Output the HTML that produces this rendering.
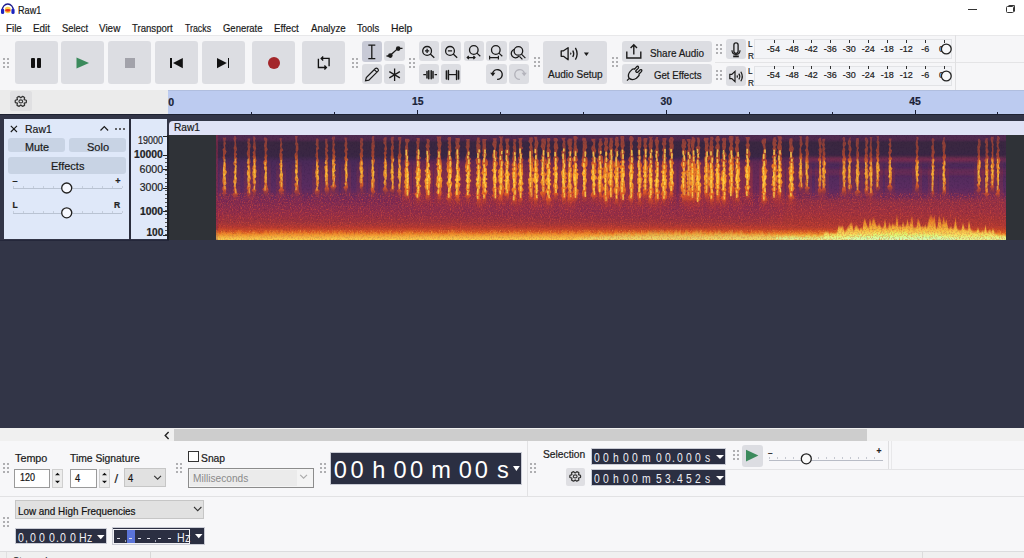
<!DOCTYPE html>
<html><head><meta charset="utf-8">
<style>
*{margin:0;padding:0;box-sizing:border-box}
html,body{width:1024px;height:558px;overflow:hidden;background:#fff}
body{position:relative;font-family:"Liberation Sans",sans-serif;color:#1f1f1f}
.a{position:absolute}
.t{position:absolute;white-space:nowrap;transform-origin:0 0;line-height:1;-webkit-text-stroke:0.2px currentColor}
svg{position:absolute;overflow:visible}
</style></head><body>
<div class="a" style="left:0px;top:0px;width:1024px;height:35px;background:#ffffff;"></div>
<svg style="left:0;top:0" width="16" height="16" viewBox="0 0 16 16">
  <ellipse cx="7.8" cy="10" rx="3" ry="3.3" fill="#ffd24a"/>
  <ellipse cx="7.8" cy="10.3" rx="2.8" ry="1.4" fill="#e8311a"/>
  <path d="M2.2 10.5 A5.6 6.5 0 0 1 13.4 10.5" fill="none" stroke="#1b1a8c" stroke-width="1.3"/>
  <rect x="1" y="8.5" width="3.2" height="5.5" rx="1.5" fill="#1d24c0"/>
  <rect x="11.4" y="8.5" width="3.2" height="5.5" rx="1.5" fill="#1d24c0"/>
</svg>
<div class="t" style="left:17.6px;top:5.98px;font-size:10.4px;transform:scaleX(0.876);color:#1a1a1a;font-weight:normal;">Raw1</div>
<div class="a" style="left:968px;top:9px;width:9px;height:1px;background:#333;"></div>
<div class="a" style="left:1006px;top:6px;width:8px;height:7px;border:1px solid #333;border-radius:1.5px"></div>
<div class="a" style="left:1008px;top:4.5px;width:7px;height:7px;border-top:1px solid #333;border-right:1px solid #333;border-radius:1.5px"></div>
<div class="t" style="left:6px;top:23.08px;font-size:11.2px;transform:scaleX(0.875);color:#1a1a1a;font-weight:normal;">File</div>
<div class="t" style="left:32.7px;top:23.08px;font-size:11.2px;transform:scaleX(0.886);color:#1a1a1a;font-weight:normal;">Edit</div>
<div class="t" style="left:61.7px;top:23.08px;font-size:11.2px;transform:scaleX(0.838);color:#1a1a1a;font-weight:normal;">Select</div>
<div class="t" style="left:99.2px;top:23.08px;font-size:11.2px;transform:scaleX(0.885);color:#1a1a1a;font-weight:normal;">View</div>
<div class="t" style="left:132px;top:23.08px;font-size:11.2px;transform:scaleX(0.857);color:#1a1a1a;font-weight:normal;">Transport</div>
<div class="t" style="left:185.2px;top:23.08px;font-size:11.2px;transform:scaleX(0.786);color:#1a1a1a;font-weight:normal;">Tracks</div>
<div class="t" style="left:222.9px;top:23.08px;font-size:11.2px;transform:scaleX(0.846);color:#1a1a1a;font-weight:normal;">Generate</div>
<div class="t" style="left:274px;top:23.08px;font-size:11.2px;transform:scaleX(0.872);color:#1a1a1a;font-weight:normal;">Effect</div>
<div class="t" style="left:311px;top:23.08px;font-size:11.2px;transform:scaleX(0.871);color:#1a1a1a;font-weight:normal;">Analyze</div>
<div class="t" style="left:357.2px;top:23.08px;font-size:11.2px;transform:scaleX(0.849);color:#1a1a1a;font-weight:normal;">Tools</div>
<div class="t" style="left:390.9px;top:23.08px;font-size:11.2px;transform:scaleX(0.929);color:#1a1a1a;font-weight:normal;">Help</div>
<div class="a" style="left:0px;top:35px;width:1024px;height:56px;background:#f6f6f8;border-top:1px solid #e8e8ea"></div>
<div class="a" style="left:15px;top:41.2px;width:42.5px;height:43.2px;background:#dcdde2;border-radius:3px"></div>
<div class="a" style="left:61px;top:41.2px;width:43.4px;height:43.2px;background:#dcdde2;border-radius:3px"></div>
<div class="a" style="left:108px;top:41.2px;width:43px;height:43.2px;background:#dcdde2;border-radius:3px"></div>
<div class="a" style="left:155px;top:41.2px;width:43px;height:43.2px;background:#dcdde2;border-radius:3px"></div>
<div class="a" style="left:201.7px;top:41.2px;width:43.0px;height:43.2px;background:#dcdde2;border-radius:3px"></div>
<div class="a" style="left:252px;top:41.2px;width:43px;height:43.2px;background:#dcdde2;border-radius:3px"></div>
<div class="a" style="left:302px;top:41.2px;width:43px;height:43.2px;background:#dcdde2;border-radius:3px"></div>
<div class="a" style="left:3px;top:58px;width:1.6px;height:1.6px;background:#a0a0a4;border-radius:50%"></div>
<div class="a" style="left:7px;top:58px;width:1.6px;height:1.6px;background:#a0a0a4;border-radius:50%"></div>
<div class="a" style="left:3px;top:62px;width:1.6px;height:1.6px;background:#a0a0a4;border-radius:50%"></div>
<div class="a" style="left:7px;top:62px;width:1.6px;height:1.6px;background:#a0a0a4;border-radius:50%"></div>
<div class="a" style="left:3px;top:66px;width:1.6px;height:1.6px;background:#a0a0a4;border-radius:50%"></div>
<div class="a" style="left:7px;top:66px;width:1.6px;height:1.6px;background:#a0a0a4;border-radius:50%"></div>
<div class="a" style="left:31px;top:58px;width:4px;height:10px;background:#111;border-radius:1px"></div>
<div class="a" style="left:37px;top:58px;width:4px;height:10px;background:#111;border-radius:1px"></div>
<svg style="left:76px;top:57px" width="14" height="12" viewBox="0 0 14 12"><path d="M0.5 0.5 L13 6 L0.5 11.5Z" fill="#3b8a5c"/></svg>
<div class="a" style="left:125px;top:58px;width:10px;height:10px;background:#a2a2aa;"></div>
<div class="a" style="left:170.4px;top:58px;width:1.3px;height:10.2px;background:#111;"></div>
<svg style="left:172.6px;top:58px" width="12" height="11" viewBox="0 0 12 11"><path d="M0 5.1 L9.8 0 L9.8 10.2Z" fill="#111"/></svg>
<svg style="left:217.4px;top:58px" width="12" height="11" viewBox="0 0 12 11"><path d="M0 0 L9.8 5.1 L0 10.2Z" fill="#111"/></svg>
<div class="a" style="left:228px;top:58px;width:1.3px;height:10.2px;background:#111;"></div>
<svg style="left:267px;top:56px" width="14" height="14" viewBox="0 0 14 14"><circle cx="7" cy="7" r="6" fill="#a3262a"/></svg>
<svg style="left:316px;top:56px" width="16" height="14" viewBox="0 0 16 14"><path d="M2.4 2.8 V11.5 H10.3 M8.4 9.5 L10.4 11.5 L8.4 13.5 M13.1 10.3 V2.4 H5.2 M7.2 0.4 L5.2 2.4 L7.2 4.4" fill="none" stroke="#111" stroke-width="1.35"/></svg>
<div class="a" style="left:352px;top:58px;width:1.6px;height:1.6px;background:#a0a0a4;border-radius:50%"></div>
<div class="a" style="left:356px;top:58px;width:1.6px;height:1.6px;background:#a0a0a4;border-radius:50%"></div>
<div class="a" style="left:352px;top:62px;width:1.6px;height:1.6px;background:#a0a0a4;border-radius:50%"></div>
<div class="a" style="left:356px;top:62px;width:1.6px;height:1.6px;background:#a0a0a4;border-radius:50%"></div>
<div class="a" style="left:352px;top:66px;width:1.6px;height:1.6px;background:#a0a0a4;border-radius:50%"></div>
<div class="a" style="left:356px;top:66px;width:1.6px;height:1.6px;background:#a0a0a4;border-radius:50%"></div>
<div class="a" style="left:361.6px;top:41.2px;width:20.4px;height:20.4px;background:#c8cad6;border-radius:3px"></div>
<div class="a" style="left:384.4px;top:41.2px;width:20.2px;height:20.2px;background:#dcdde2;border-radius:3px"></div>
<div class="a" style="left:361.6px;top:64.2px;width:20.2px;height:20.2px;background:#dcdde2;border-radius:3px"></div>
<div class="a" style="left:384.4px;top:64.2px;width:20.2px;height:20.2px;background:#dcdde2;border-radius:3px"></div>
<div class="a" style="left:409px;top:58px;width:1.6px;height:1.6px;background:#a0a0a4;border-radius:50%"></div>
<div class="a" style="left:413px;top:58px;width:1.6px;height:1.6px;background:#a0a0a4;border-radius:50%"></div>
<div class="a" style="left:409px;top:62px;width:1.6px;height:1.6px;background:#a0a0a4;border-radius:50%"></div>
<div class="a" style="left:413px;top:62px;width:1.6px;height:1.6px;background:#a0a0a4;border-radius:50%"></div>
<div class="a" style="left:409px;top:66px;width:1.6px;height:1.6px;background:#a0a0a4;border-radius:50%"></div>
<div class="a" style="left:413px;top:66px;width:1.6px;height:1.6px;background:#a0a0a4;border-radius:50%"></div>
<div class="a" style="left:418.7px;top:41.2px;width:20.2px;height:20.2px;background:#dcdde2;border-radius:3px"></div>
<div class="a" style="left:441.3px;top:41.2px;width:20.2px;height:20.2px;background:#dcdde2;border-radius:3px"></div>
<div class="a" style="left:463.8px;top:41.2px;width:20.2px;height:20.2px;background:#dcdde2;border-radius:3px"></div>
<div class="a" style="left:486.4px;top:41.2px;width:20.2px;height:20.2px;background:#dcdde2;border-radius:3px"></div>
<div class="a" style="left:509.3px;top:41.2px;width:20.2px;height:20.2px;background:#dcdde2;border-radius:3px"></div>
<div class="a" style="left:418.7px;top:64.2px;width:20.2px;height:20.2px;background:#dcdde2;border-radius:3px"></div>
<div class="a" style="left:441.3px;top:64.2px;width:20.2px;height:20.2px;background:#dcdde2;border-radius:3px"></div>
<div class="a" style="left:486.4px;top:64.2px;width:20.2px;height:20.2px;background:#dcdde2;border-radius:3px"></div>
<div class="a" style="left:509.3px;top:64.2px;width:20.2px;height:20.2px;background:#dcdde2;border-radius:3px"></div>
<div class="a" style="left:534px;top:57px;width:1.6px;height:1.6px;background:#a0a0a4;border-radius:50%"></div>
<div class="a" style="left:538px;top:57px;width:1.6px;height:1.6px;background:#a0a0a4;border-radius:50%"></div>
<div class="a" style="left:534px;top:61px;width:1.6px;height:1.6px;background:#a0a0a4;border-radius:50%"></div>
<div class="a" style="left:538px;top:61px;width:1.6px;height:1.6px;background:#a0a0a4;border-radius:50%"></div>
<div class="a" style="left:534px;top:65px;width:1.6px;height:1.6px;background:#a0a0a4;border-radius:50%"></div>
<div class="a" style="left:538px;top:65px;width:1.6px;height:1.6px;background:#a0a0a4;border-radius:50%"></div>
<div class="a" style="left:543.2px;top:41.2px;width:63.8px;height:43.2px;background:#dcdde2;border-radius:3px"></div>
<div class="a" style="left:612px;top:57px;width:1.6px;height:1.6px;background:#a0a0a4;border-radius:50%"></div>
<div class="a" style="left:616px;top:57px;width:1.6px;height:1.6px;background:#a0a0a4;border-radius:50%"></div>
<div class="a" style="left:612px;top:61px;width:1.6px;height:1.6px;background:#a0a0a4;border-radius:50%"></div>
<div class="a" style="left:616px;top:61px;width:1.6px;height:1.6px;background:#a0a0a4;border-radius:50%"></div>
<div class="a" style="left:612px;top:65px;width:1.6px;height:1.6px;background:#a0a0a4;border-radius:50%"></div>
<div class="a" style="left:616px;top:65px;width:1.6px;height:1.6px;background:#a0a0a4;border-radius:50%"></div>
<div class="a" style="left:621.7px;top:41.2px;width:90px;height:20.4px;background:#dcdde2;border-radius:3px"></div>
<div class="a" style="left:621.7px;top:64.2px;width:90px;height:20.2px;background:#dcdde2;border-radius:3px"></div>
<div class="a" style="left:716px;top:44px;width:1.6px;height:1.6px;background:#a0a0a4;border-radius:50%"></div>
<div class="a" style="left:720px;top:44px;width:1.6px;height:1.6px;background:#a0a0a4;border-radius:50%"></div>
<div class="a" style="left:716px;top:48px;width:1.6px;height:1.6px;background:#a0a0a4;border-radius:50%"></div>
<div class="a" style="left:720px;top:48px;width:1.6px;height:1.6px;background:#a0a0a4;border-radius:50%"></div>
<div class="a" style="left:716px;top:52px;width:1.6px;height:1.6px;background:#a0a0a4;border-radius:50%"></div>
<div class="a" style="left:720px;top:52px;width:1.6px;height:1.6px;background:#a0a0a4;border-radius:50%"></div>
<div class="a" style="left:716px;top:70px;width:1.6px;height:1.6px;background:#a0a0a4;border-radius:50%"></div>
<div class="a" style="left:720px;top:70px;width:1.6px;height:1.6px;background:#a0a0a4;border-radius:50%"></div>
<div class="a" style="left:716px;top:74px;width:1.6px;height:1.6px;background:#a0a0a4;border-radius:50%"></div>
<div class="a" style="left:720px;top:74px;width:1.6px;height:1.6px;background:#a0a0a4;border-radius:50%"></div>
<div class="a" style="left:716px;top:78px;width:1.6px;height:1.6px;background:#a0a0a4;border-radius:50%"></div>
<div class="a" style="left:720px;top:78px;width:1.6px;height:1.6px;background:#a0a0a4;border-radius:50%"></div>
<div class="t" style="left:548.2px;top:68.57px;font-size:10.5px;transform:scaleX(0.956);color:#1a1a1a;font-weight:normal;">Audio Setup</div>
<div class="t" style="left:650.4px;top:47.67px;font-size:10.5px;transform:scaleX(0.944);color:#1a1a1a;font-weight:normal;">Share Audio</div>
<div class="t" style="left:653.7px;top:69.97px;font-size:10.5px;transform:scaleX(0.918);color:#1a1a1a;font-weight:normal;">Get Effects</div>
<div class="a" style="left:725.5px;top:39.3px;width:20.5px;height:20px;background:#dcdde2;border-radius:3px"></div>
<div class="a" style="left:725.5px;top:65.6px;width:20.5px;height:20px;background:#dcdde2;border-radius:3px"></div>
<div class="a" style="left:715px;top:62px;width:309px;height:1px;background:#e4e4e6;"></div>
<div class="a" style="left:955px;top:35px;width:1px;height:56px;background:#e0e0e2;"></div>
<div class="a" style="left:754px;top:39.3px;width:198px;height:20px;background:#f3f4f7;border:1px solid #e2e3e6"></div>
<div class="t" style="left:748px;top:40.29px;font-size:8.6px;transform:scaleX(0.95);color:#222;font-weight:normal;">L</div>
<div class="t" style="left:748px;top:52.49px;font-size:8.6px;transform:scaleX(0.95);color:#222;font-weight:normal;">R</div>
<div class="a" style="left:773.5px;top:39.8px;width:1px;height:3px;background:#333;"></div>
<div class="t" style="left:573.4px;width:400px;text-align:center;top:44.64px;font-size:9px;transform:scaleX(1.0);transform-origin:50% 0;color:#1a1a1a;font-weight:normal;">-54</div>
<div class="a" style="left:792.5px;top:39.8px;width:1px;height:3px;background:#333;"></div>
<div class="t" style="left:592.37px;width:400px;text-align:center;top:44.64px;font-size:9px;transform:scaleX(1.0);transform-origin:50% 0;color:#1a1a1a;font-weight:normal;">-48</div>
<div class="a" style="left:811.4px;top:39.8px;width:1px;height:3px;background:#333;"></div>
<div class="t" style="left:611.34px;width:400px;text-align:center;top:44.64px;font-size:9px;transform:scaleX(1.0);transform-origin:50% 0;color:#1a1a1a;font-weight:normal;">-42</div>
<div class="a" style="left:830.4px;top:39.8px;width:1px;height:3px;background:#333;"></div>
<div class="t" style="left:630.31px;width:400px;text-align:center;top:44.64px;font-size:9px;transform:scaleX(1.0);transform-origin:50% 0;color:#1a1a1a;font-weight:normal;">-36</div>
<div class="a" style="left:849.4px;top:39.8px;width:1px;height:3px;background:#333;"></div>
<div class="t" style="left:649.28px;width:400px;text-align:center;top:44.64px;font-size:9px;transform:scaleX(1.0);transform-origin:50% 0;color:#1a1a1a;font-weight:normal;">-30</div>
<div class="a" style="left:868.4px;top:39.8px;width:1px;height:3px;background:#333;"></div>
<div class="t" style="left:668.25px;width:400px;text-align:center;top:44.64px;font-size:9px;transform:scaleX(1.0);transform-origin:50% 0;color:#1a1a1a;font-weight:normal;">-24</div>
<div class="a" style="left:887.3px;top:39.8px;width:1px;height:3px;background:#333;"></div>
<div class="t" style="left:687.2199999999999px;width:400px;text-align:center;top:44.64px;font-size:9px;transform:scaleX(1.0);transform-origin:50% 0;color:#1a1a1a;font-weight:normal;">-18</div>
<div class="a" style="left:906.3px;top:39.8px;width:1px;height:3px;background:#333;"></div>
<div class="t" style="left:706.1899999999999px;width:400px;text-align:center;top:44.64px;font-size:9px;transform:scaleX(1.0);transform-origin:50% 0;color:#1a1a1a;font-weight:normal;">-12</div>
<div class="a" style="left:925.3px;top:39.8px;width:1px;height:3px;background:#333;"></div>
<div class="t" style="left:725.16px;width:400px;text-align:center;top:44.64px;font-size:9px;transform:scaleX(1.0);transform-origin:50% 0;color:#1a1a1a;font-weight:normal;">-6</div>
<div class="a" style="left:944.2px;top:39.8px;width:1px;height:3px;background:#333;"></div>
<div class="t" style="left:741.53px;width:400px;text-align:center;top:44.64px;font-size:9px;transform:scaleX(1.0);transform-origin:50% 0;color:#1a1a1a;font-weight:normal;">0</div>
<svg style="left:939px;top:42.3px" width="14" height="14" viewBox="0 0 14 14"><circle cx="7.3" cy="7" r="4.9" fill="#f6f7f9" stroke="#222" stroke-width="1.3"/></svg>
<div class="a" style="left:754px;top:65.6px;width:198px;height:20px;background:#f3f4f7;border:1px solid #e2e3e6"></div>
<div class="t" style="left:748px;top:66.59px;font-size:8.6px;transform:scaleX(0.95);color:#222;font-weight:normal;">L</div>
<div class="t" style="left:748px;top:78.79px;font-size:8.6px;transform:scaleX(0.95);color:#222;font-weight:normal;">R</div>
<div class="a" style="left:773.5px;top:66.1px;width:1px;height:3px;background:#333;"></div>
<div class="t" style="left:573.4px;width:400px;text-align:center;top:70.94px;font-size:9px;transform:scaleX(1.0);transform-origin:50% 0;color:#1a1a1a;font-weight:normal;">-54</div>
<div class="a" style="left:792.5px;top:66.1px;width:1px;height:3px;background:#333;"></div>
<div class="t" style="left:592.37px;width:400px;text-align:center;top:70.94px;font-size:9px;transform:scaleX(1.0);transform-origin:50% 0;color:#1a1a1a;font-weight:normal;">-48</div>
<div class="a" style="left:811.4px;top:66.1px;width:1px;height:3px;background:#333;"></div>
<div class="t" style="left:611.34px;width:400px;text-align:center;top:70.94px;font-size:9px;transform:scaleX(1.0);transform-origin:50% 0;color:#1a1a1a;font-weight:normal;">-42</div>
<div class="a" style="left:830.4px;top:66.1px;width:1px;height:3px;background:#333;"></div>
<div class="t" style="left:630.31px;width:400px;text-align:center;top:70.94px;font-size:9px;transform:scaleX(1.0);transform-origin:50% 0;color:#1a1a1a;font-weight:normal;">-36</div>
<div class="a" style="left:849.4px;top:66.1px;width:1px;height:3px;background:#333;"></div>
<div class="t" style="left:649.28px;width:400px;text-align:center;top:70.94px;font-size:9px;transform:scaleX(1.0);transform-origin:50% 0;color:#1a1a1a;font-weight:normal;">-30</div>
<div class="a" style="left:868.4px;top:66.1px;width:1px;height:3px;background:#333;"></div>
<div class="t" style="left:668.25px;width:400px;text-align:center;top:70.94px;font-size:9px;transform:scaleX(1.0);transform-origin:50% 0;color:#1a1a1a;font-weight:normal;">-24</div>
<div class="a" style="left:887.3px;top:66.1px;width:1px;height:3px;background:#333;"></div>
<div class="t" style="left:687.2199999999999px;width:400px;text-align:center;top:70.94px;font-size:9px;transform:scaleX(1.0);transform-origin:50% 0;color:#1a1a1a;font-weight:normal;">-18</div>
<div class="a" style="left:906.3px;top:66.1px;width:1px;height:3px;background:#333;"></div>
<div class="t" style="left:706.1899999999999px;width:400px;text-align:center;top:70.94px;font-size:9px;transform:scaleX(1.0);transform-origin:50% 0;color:#1a1a1a;font-weight:normal;">-12</div>
<div class="a" style="left:925.3px;top:66.1px;width:1px;height:3px;background:#333;"></div>
<div class="t" style="left:725.16px;width:400px;text-align:center;top:70.94px;font-size:9px;transform:scaleX(1.0);transform-origin:50% 0;color:#1a1a1a;font-weight:normal;">-6</div>
<div class="a" style="left:944.2px;top:66.1px;width:1px;height:3px;background:#333;"></div>
<div class="t" style="left:741.53px;width:400px;text-align:center;top:70.94px;font-size:9px;transform:scaleX(1.0);transform-origin:50% 0;color:#1a1a1a;font-weight:normal;">0</div>
<svg style="left:939px;top:68.6px" width="14" height="14" viewBox="0 0 14 14"><circle cx="7.3" cy="7" r="4.9" fill="#f6f7f9" stroke="#222" stroke-width="1.3"/></svg>
<div class="a" style="left:0px;top:90px;width:168px;height:23.6px;background:#ebebeb;"></div>
<div class="a" style="left:9.8px;top:91px;width:22.2px;height:20.4px;background:#e0e0e2;border-radius:2px"></div>
<div class="a" style="left:168px;top:90px;width:856px;height:23.8px;background:#bccbf0;border-top:1px solid #b0bedf"></div>
<div class="t" style="left:168.3px;top:96.75px;font-size:10.6px;transform:scaleX(1);color:#1a1f36;font-weight:bold;">0</div>
<div class="t" style="left:411.9px;top:96.68px;font-size:10.4px;transform:scaleX(1);color:#1a1f36;font-weight:bold;">15</div>
<div class="a" style="left:417.2px;top:110px;width:1px;height:4px;background:#1a1f36;"></div>
<div class="t" style="left:660.6px;top:96.68px;font-size:10.4px;transform:scaleX(1);color:#1a1f36;font-weight:bold;">30</div>
<div class="a" style="left:665.9px;top:110px;width:1px;height:4px;background:#1a1f36;"></div>
<div class="t" style="left:909.3px;top:96.68px;font-size:10.4px;transform:scaleX(1);color:#1a1f36;font-weight:bold;">45</div>
<div class="a" style="left:914.6px;top:110px;width:1px;height:4px;background:#1a1f36;"></div>
<div class="a" style="left:251.2px;top:111.8px;width:1px;height:2px;background:#1a1f36;"></div>
<div class="a" style="left:334.1px;top:111.8px;width:1px;height:2px;background:#1a1f36;"></div>
<div class="a" style="left:499.9px;top:111.8px;width:1px;height:2px;background:#1a1f36;"></div>
<div class="a" style="left:582.8px;top:111.8px;width:1px;height:2px;background:#1a1f36;"></div>
<div class="a" style="left:748.6px;top:111.8px;width:1px;height:2px;background:#1a1f36;"></div>
<div class="a" style="left:831.5px;top:111.8px;width:1px;height:2px;background:#1a1f36;"></div>
<div class="a" style="left:997.3px;top:111.8px;width:1px;height:2px;background:#1a1f36;"></div>
<div class="a" style="left:1080.2px;top:111.8px;width:1px;height:2px;background:#1a1f36;"></div>
<div class="a" style="left:0px;top:113.6px;width:1024px;height:314.4px;background:#323547;"></div>
<div class="a" style="left:0px;top:113.6px;width:1024px;height:1.6px;background:#1e2232;"></div>
<div class="a" style="left:4px;top:119.3px;width:125px;height:120.2px;background:#dfe8f9;"></div>
<div class="a" style="left:0px;top:239.5px;width:169px;height:1.5px;background:#24273a;"></div>
<div class="a" style="left:129px;top:119.3px;width:2px;height:121px;background:#2a2d3c;"></div>
<div class="a" style="left:131px;top:119.3px;width:36px;height:120.2px;background:#dfe8f9;"></div>
<div class="t" style="right:860.8px;top:135.58px;font-size:10.4px;transform:scaleX(0.864);transform-origin:100% 0;color:#1e1e24;font-weight:normal;">19000</div>
<div class="t" style="right:860.8px;top:149.78px;font-size:10.4px;transform:scaleX(1.003);transform-origin:100% 0;color:#1e1e24;font-weight:bold;">10000</div>
<div class="t" style="right:860.8px;top:164.58px;font-size:10.4px;transform:scaleX(1.02);transform-origin:100% 0;color:#1e1e24;font-weight:normal;">6000</div>
<div class="t" style="right:860.8px;top:182.98px;font-size:10.4px;transform:scaleX(1.011);transform-origin:100% 0;color:#1e1e24;font-weight:normal;">3000</div>
<div class="t" style="right:860.8px;top:207.08px;font-size:10.4px;transform:scaleX(1.003);transform-origin:100% 0;color:#1e1e24;font-weight:bold;">1000</div>
<div class="t" style="right:860.8px;top:227.58px;font-size:10.4px;transform:scaleX(0.974);transform-origin:100% 0;color:#1e1e24;font-weight:bold;">100</div>
<div class="t" style="left:24.6px;top:124.47px;font-size:11.3px;transform:scaleX(0.928);color:#1a1a1a;font-weight:normal;">Raw1</div>
<div class="a" style="left:8px;top:138px;width:57px;height:14px;background:#c8d3e4;border-radius:3px"></div>
<div class="a" style="left:69px;top:138px;width:57px;height:14px;background:#c8d3e4;border-radius:3px"></div>
<div class="a" style="left:8px;top:156.5px;width:118px;height:17px;background:#c8d3e4;border-radius:3px"></div>
<div class="t" style="left:24.6px;top:141.62px;font-size:10.9px;transform:scaleX(0.995);color:#1a1a1a;font-weight:normal;">Mute</div>
<div class="t" style="left:86.5px;top:141.62px;font-size:10.9px;transform:scaleX(1.013);color:#1a1a1a;font-weight:normal;">Solo</div>
<div class="t" style="left:50.6px;top:160.8px;font-size:11.1px;transform:scaleX(0.99);color:#1a1a1a;font-weight:normal;">Effects</div>
<div class="a" style="left:169.4px;top:120.9px;width:854.6px;height:13.7px;background:#dfe2f6;border-top-left-radius:4px"></div>
<div class="t" style="left:173.5px;top:122.92px;font-size:10px;transform:scaleX(1.017);color:#1a1a1a;font-weight:normal;">Raw1</div>
<div class="a" style="left:169px;top:134.6px;width:855px;height:105px;background:#2f3237;"></div>
<svg style="left:216px;top:134.6px;overflow:hidden" width="790" height="105" viewBox="0 0 790 105"><defs>
<linearGradient id="bg" x1="0" y1="0" x2="0" y2="1">
<stop offset="0" stop-color="#4e2a50"/>
<stop offset="0.04" stop-color="#52294e"/>
<stop offset="0.07" stop-color="#3a2740"/>
<stop offset="0.2" stop-color="#3a2744"/>
<stop offset="0.25" stop-color="#4a2a58"/>
<stop offset="0.5" stop-color="#5a2c60"/>
<stop offset="0.62" stop-color="#762a58"/>
<stop offset="0.74" stop-color="#922c48"/>
<stop offset="0.82" stop-color="#a03238"/>
<stop offset="0.88" stop-color="#b83c30"/>
<stop offset="0.93" stop-color="#d85420"/>
<stop offset="0.975" stop-color="#f08a24"/>
<stop offset="1" stop-color="#ffc030"/>
</linearGradient>
<linearGradient id="st" x1="0" y1="0" x2="0" y2="1">
<stop offset="0" stop-color="#c05038" stop-opacity="0.6"/>
<stop offset="0.3" stop-color="#d05028" stop-opacity="0.75"/>
<stop offset="0.42" stop-color="#f07820" stop-opacity="0.95"/>
<stop offset="0.6" stop-color="#ffa828" stop-opacity="1"/>
<stop offset="0.85" stop-color="#e86020" stop-opacity="0.85"/>
<stop offset="1" stop-color="#a03030" stop-opacity="0"/>
</linearGradient>
<linearGradient id="gl" x1="0" y1="0" x2="0" y2="1">
<stop offset="0" stop-color="#c03830" stop-opacity="0"/>
<stop offset="0.3" stop-color="#c03830" stop-opacity="0.5"/>
<stop offset="0.8" stop-color="#c03830" stop-opacity="0.45"/>
<stop offset="1" stop-color="#c03830" stop-opacity="0"/>
</linearGradient>
<linearGradient id="hl" x1="0" y1="0" x2="0" y2="1">
<stop offset="0" stop-color="#ffe060" stop-opacity="0"/>
<stop offset="0.5" stop-color="#f0f070" stop-opacity="0.7"/>
<stop offset="1" stop-color="#d8ffb0" stop-opacity="0.95"/>
</linearGradient>
<filter id="nz" x="0" y="0" width="100%" height="100%">
<feTurbulence type="fractalNoise" baseFrequency="0.6 0.5" numOctaves="2" seed="3" result="t"/>
<feColorMatrix in="t" type="matrix" values="0 0 0 0 0  0 0 0 0 0  0 0 0 0 0  0 0 0 -2.2 1.1" result="n"/>
<feComposite in="SourceGraphic" in2="n" operator="in"/>
</filter>
<filter id="bl" x="-30%" y="-50%" width="160%" height="200%"><feGaussianBlur stdDeviation="10 1.5"/></filter>
<filter id="bl2" x="-10%" y="-50%" width="120%" height="200%"><feGaussianBlur stdDeviation="0.7 0.9"/></filter>
<linearGradient id="fl" x1="0" y1="0" x2="0" y2="1">
<stop offset="0" stop-color="#f07818" stop-opacity="0"/>
<stop offset="0.25" stop-color="#f89020" stop-opacity="0.9"/>
<stop offset="0.6" stop-color="#ffd040"/>
<stop offset="1" stop-color="#f0ff90"/>
</linearGradient>
<linearGradient id="fl2" x1="0" y1="0" x2="0" y2="1">
<stop offset="0" stop-color="#ffd040" stop-opacity="0"/>
<stop offset="0.4" stop-color="#e0ff60" stop-opacity="0.85"/>
<stop offset="1" stop-color="#c8ffd8"/>
</linearGradient>
</defs><rect x="0" y="0" width="790" height="105" fill="url(#bg)"/><rect x="0" y="0" width="2" height="105" fill="#8a2c48" opacity="0.6"/><g filter="url(#bl)"><rect x="190" y="25" width="380" height="45" fill="#8a2a48" opacity="0.35"/><rect x="560" y="64" width="240" height="28" fill="#b03a30" opacity="0.38"/><rect x="575" y="22" width="220" height="5" fill="#8a2c50" opacity="0.7"/><rect x="575" y="34" width="220" height="6" fill="#7a2a50" opacity="0.5"/><rect x="0" y="68" width="560" height="22" fill="#8a2c50" opacity="0.25"/></g><rect x="3.4" y="24" width="10" height="46.5" fill="url(#gl)" opacity="0.35"/><path d="M6.7 2.4 L7.3 4.4 L7.6 6.4 L7.4 8.4 L7.4 10.4 L8.0 12.4 L6.5 14.4 L7.1 16.4 L7.1 18.4 L7.1 20.4 L6.6 22.4 L7.2 24.4 L7.6 26.4 L7.5 28.4 L7.2 30.4 L7.2 32.4 L6.9 34.4 L6.9 36.4 L6.8 38.4 L7.0 40.4 L6.9 42.4 L6.6 44.4 L6.5 46.4 L6.8 48.4 L7.4 50.4 L6.5 52.4 L6.4 54.4 L7.3 56.4 L6.1 58.4 L7.5 60.4 L7.5 62.4 L7.9 64.4 L8.4 64.4 L9.8 62.4 L9.0 60.4 L10.2 58.4 L9.8 56.4 L10.2 54.4 L10.2 52.4 L8.9 50.4 L10.7 48.4 L10.1 46.4 L10.0 44.4 L9.1 42.4 L9.3 40.4 L10.4 38.4 L10.9 36.4 L9.5 34.4 L9.9 32.4 L9.9 30.4 L10.0 28.4 L9.1 26.4 L9.1 24.4 L9.3 22.4 L8.7 20.4 L9.9 18.4 L10.6 16.4 L9.4 14.4 L9.5 12.4 L9.0 10.4 L10.0 8.4 L9.3 6.4 L9.7 4.4 L10.0 2.4 Z" fill="url(#st)" opacity="0.9"/><path d="M8.9 24.4 v1.7 M8.3 27.5 v3.2 M7.8 32.2 v3.7 M8.3 38.5 v1.8 M9.2 41.9 v2.3 M9.0 47.2 v2.4 M9.0 51.1 v2.7" stroke="#ffd850" stroke-width="1.3" stroke-linecap="round" opacity="0.55"/><rect x="14.2" y="24" width="10" height="49.9" fill="url(#gl)" opacity="0.35"/><path d="M18.1 1.3 L17.5 3.3 L17.8 5.3 L18.5 7.3 L18.4 9.3 L18.1 11.3 L17.5 13.3 L18.3 15.3 L18.0 17.3 L17.9 19.3 L18.0 21.3 L18.0 23.3 L18.7 25.3 L17.5 27.3 L17.5 29.3 L18.9 31.3 L18.4 33.3 L18.5 35.3 L17.5 37.3 L18.5 39.3 L18.1 41.3 L18.1 43.3 L17.5 45.3 L17.0 47.3 L18.2 49.3 L17.5 51.3 L18.1 53.3 L17.4 55.3 L18.4 57.3 L16.3 59.3 L17.3 61.3 L17.8 63.3 L19.1 65.3 L19.0 67.3 L20.3 67.3 L20.1 65.3 L19.6 63.3 L21.3 61.3 L22.4 59.3 L20.8 57.3 L20.3 55.3 L20.0 53.3 L20.0 51.3 L19.7 49.3 L20.8 47.3 L20.5 45.3 L21.0 43.3 L19.8 41.3 L20.4 39.3 L20.5 37.3 L20.6 35.3 L20.4 33.3 L20.5 31.3 L20.1 29.3 L21.1 27.3 L20.6 25.3 L21.3 23.3 L19.8 21.3 L21.2 19.3 L19.7 17.3 L20.8 15.3 L20.9 13.3 L20.2 11.3 L20.2 9.3 L20.0 7.3 L19.8 5.3 L20.5 3.3 L19.8 1.3 Z" fill="url(#st)" opacity="0.9"/><path d="M19.2 24.1 v3.4 M20.0 30.3 v2.5 M19.6 34.0 v3.1 M19.5 40.4 v3.7 M19.0 47.0 v4.2 M19.8 54.0 v4.2" stroke="#ffd850" stroke-width="1.3" stroke-linecap="round" opacity="0.55"/><rect x="27.8" y="24" width="10" height="48.9" fill="url(#gl)" opacity="0.35"/><path d="M31.6 3.4 L31.8 5.4 L31.1 7.4 L31.9 9.4 L31.4 11.4 L32.0 13.4 L31.5 15.4 L30.8 17.4 L30.9 19.4 L31.5 21.4 L32.0 23.4 L31.6 25.4 L30.7 27.4 L31.8 29.4 L30.9 31.4 L32.3 33.4 L31.2 35.4 L30.8 37.4 L30.9 39.4 L31.8 41.4 L31.3 43.4 L31.7 45.4 L31.3 47.4 L31.8 49.4 L31.2 51.4 L30.7 53.4 L31.8 55.4 L30.7 57.4 L31.2 59.4 L31.1 61.4 L31.8 63.4 L31.7 65.4 L33.1 65.4 L34.7 63.4 L34.1 61.4 L34.7 59.4 L34.4 57.4 L33.7 55.4 L34.5 53.4 L34.8 51.4 L34.5 49.4 L33.6 47.4 L34.1 45.4 L35.0 43.4 L34.4 41.4 L34.1 39.4 L34.5 37.4 L34.3 35.4 L34.2 33.4 L34.1 31.4 L33.4 29.4 L34.4 27.4 L34.3 25.4 L34.0 23.4 L34.1 21.4 L33.8 19.4 L33.9 17.4 L34.0 15.4 L34.1 13.4 L34.6 11.4 L34.6 9.4 L33.7 7.4 L34.0 5.4 L34.2 3.4 Z" fill="url(#st)" opacity="0.9"/><path d="M32.1 24.1 v4.1 M32.5 31.0 v3.2 M32.2 37.2 v1.6 M33.3 40.9 v1.6 M32.1 44.1 v1.9 M33.0 48.6 v2.8 M33.5 54.0 v3.9" stroke="#ffd850" stroke-width="1.3" stroke-linecap="round" opacity="0.55"/><rect x="33.3" y="24" width="10" height="45.8" fill="url(#gl)" opacity="0.35"/><path d="M37.0 1.6 L37.3 3.6 L37.2 5.6 L37.5 7.6 L37.2 9.6 L36.7 11.6 L37.2 13.6 L38.0 15.6 L36.5 17.6 L37.3 19.6 L36.5 21.6 L37.2 23.6 L37.0 25.6 L37.1 27.6 L37.5 29.6 L36.7 31.6 L36.4 33.6 L36.9 35.6 L36.4 37.6 L36.4 39.6 L36.8 41.6 L36.7 43.6 L37.1 45.6 L36.6 47.6 L37.8 49.6 L37.8 51.6 L37.2 53.6 L35.4 55.6 L37.2 57.6 L37.1 59.6 L37.8 61.6 L38.3 63.6 L39.2 63.6 L39.7 61.6 L40.1 59.6 L39.4 57.6 L40.5 55.6 L39.1 53.6 L39.4 51.6 L39.4 49.6 L40.0 47.6 L39.6 45.6 L39.0 43.6 L40.5 41.6 L39.8 39.6 L40.3 37.6 L40.6 35.6 L39.6 33.6 L40.2 31.6 L39.5 29.6 L39.8 27.6 L40.5 25.6 L40.1 23.6 L39.8 21.6 L39.6 19.6 L39.4 17.6 L39.5 15.6 L40.2 13.6 L39.7 11.6 L39.6 9.6 L39.5 7.6 L38.9 5.6 L39.7 3.6 L38.7 1.6 Z" fill="url(#st)" opacity="0.9"/><path d="M38.3 24.3 v2.2 M38.5 28.2 v3.7 M38.4 34.2 v4.0 M38.9 40.0 v2.6 M38.9 45.9 v2.1 M38.4 51.5 v3.1" stroke="#ffd850" stroke-width="1.3" stroke-linecap="round" opacity="0.55"/><rect x="44.7" y="24" width="10" height="46.0" fill="url(#gl)" opacity="0.35"/><path d="M47.9 2.6 L48.0 4.6 L48.9 6.6 L48.4 8.6 L47.9 10.6 L48.4 12.6 L48.4 14.6 L48.7 16.6 L48.8 18.6 L48.6 20.6 L48.2 22.6 L48.8 24.6 L47.5 26.6 L47.5 28.6 L48.4 30.6 L47.9 32.6 L48.6 34.6 L49.1 36.6 L48.8 38.6 L48.4 40.6 L48.2 42.6 L48.4 44.6 L48.0 46.6 L48.8 48.6 L48.2 50.6 L48.0 52.6 L46.4 54.6 L47.7 56.6 L47.5 58.6 L49.2 60.6 L49.7 62.6 L50.7 62.6 L51.0 60.6 L51.5 58.6 L52.3 56.6 L52.4 54.6 L51.6 52.6 L51.2 50.6 L50.8 48.6 L50.7 46.6 L50.8 44.6 L51.0 42.6 L50.4 40.6 L50.6 38.6 L50.8 36.6 L51.0 34.6 L51.1 32.6 L50.4 30.6 L50.9 28.6 L51.2 26.6 L50.8 24.6 L50.8 22.6 L51.6 20.6 L50.4 18.6 L50.6 16.6 L51.8 14.6 L50.9 12.6 L50.7 10.6 L51.0 8.6 L51.1 6.6 L51.4 4.6 L50.5 2.6 Z" fill="url(#st)" opacity="0.9"/><path d="M49.3 27.6 v1.9 M49.1 32.3 v2.3 M50.2 37.6 v2.8 M50.0 41.7 v2.7 M50.0 45.5 v2.1 M49.1 50.8 v4.4" stroke="#ffd850" stroke-width="1.3" stroke-linecap="round" opacity="0.55"/><rect x="60.1" y="24" width="10" height="46.0" fill="url(#gl)" opacity="0.35"/><path d="M63.4 3.3 L64.0 5.3 L64.5 7.3 L64.0 9.3 L64.0 11.3 L64.6 13.3 L63.8 15.3 L63.9 17.3 L63.4 19.3 L63.4 21.3 L63.8 23.3 L63.9 25.3 L64.5 27.3 L63.0 29.3 L64.0 31.3 L63.6 33.3 L64.2 35.3 L64.7 37.3 L63.6 39.3 L63.4 41.3 L64.0 43.3 L64.2 45.3 L63.1 47.3 L63.5 49.3 L63.7 51.3 L64.3 53.3 L62.4 55.3 L63.2 57.3 L64.1 59.3 L64.4 61.3 L64.1 63.3 L65.1 63.3 L65.5 61.3 L66.6 59.3 L67.5 57.3 L68.2 55.3 L66.7 53.3 L67.1 51.3 L67.2 49.3 L66.6 47.3 L66.9 45.3 L66.4 43.3 L67.0 41.3 L67.0 39.3 L66.3 37.3 L66.1 35.3 L66.0 33.3 L66.6 31.3 L66.5 29.3 L66.1 27.3 L66.5 25.3 L66.4 23.3 L66.4 21.3 L66.7 19.3 L65.4 17.3 L67.3 15.3 L66.3 13.3 L65.6 11.3 L66.4 9.3 L65.9 7.3 L65.4 5.3 L66.2 3.3 Z" fill="url(#st)" opacity="0.9"/><path d="M65.3 25.4 v3.4 M65.4 30.4 v4.3 M65.2 36.6 v3.5 M65.9 42.4 v2.7 M65.5 47.7 v3.6" stroke="#ffd850" stroke-width="1.3" stroke-linecap="round" opacity="0.55"/><rect x="75.6" y="24" width="10" height="46.9" fill="url(#gl)" opacity="0.35"/><path d="M78.9 1.1 L79.1 3.1 L79.6 5.1 L79.6 7.1 L79.0 9.1 L79.9 11.1 L79.8 13.1 L79.6 15.1 L80.0 17.1 L78.7 19.1 L78.6 21.1 L79.0 23.1 L79.4 25.1 L80.2 27.1 L79.4 29.1 L79.0 31.1 L79.7 33.1 L79.0 35.1 L78.8 37.1 L79.6 39.1 L79.5 41.1 L78.8 43.1 L79.0 45.1 L80.3 47.1 L78.3 49.1 L78.7 51.1 L79.8 53.1 L78.8 55.1 L78.1 57.1 L79.6 59.1 L79.2 61.1 L80.2 63.1 L81.2 63.1 L82.2 61.1 L82.6 59.1 L83.6 57.1 L82.4 55.1 L82.4 53.1 L82.4 51.1 L82.1 49.1 L81.9 47.1 L82.7 45.1 L82.1 43.1 L81.1 41.1 L81.1 39.1 L82.0 37.1 L81.8 35.1 L81.8 33.1 L81.9 31.1 L81.9 29.1 L81.9 27.1 L82.1 25.1 L81.6 23.1 L81.9 21.1 L81.6 19.1 L81.4 17.1 L82.3 15.1 L82.4 13.1 L82.3 11.1 L82.3 9.1 L81.1 7.1 L81.3 5.1 L81.2 3.1 L81.8 1.1 Z" fill="url(#st)" opacity="0.9"/><path d="M79.9 25.8 v2.1 M80.5 30.3 v1.9 M80.2 34.8 v2.9 M81.0 40.1 v2.8 M81.3 45.2 v4.5 M80.0 52.5 v2.2" stroke="#ffd850" stroke-width="1.3" stroke-linecap="round" opacity="0.55"/><rect x="96.2" y="24" width="10" height="47.0" fill="url(#gl)" opacity="0.35"/><path d="M99.9 3.4 L99.9 5.4 L100.0 7.4 L99.4 9.4 L100.8 11.4 L99.9 13.4 L100.1 15.4 L100.2 17.4 L99.5 19.4 L99.5 21.4 L100.5 23.4 L99.9 25.4 L100.0 27.4 L100.0 29.4 L99.9 31.4 L100.0 33.4 L99.6 35.4 L99.2 37.4 L99.7 39.4 L99.3 41.4 L100.2 43.4 L100.1 45.4 L100.0 47.4 L99.8 49.4 L100.7 51.4 L99.9 53.4 L98.7 55.4 L98.7 57.4 L98.9 59.4 L100.5 61.4 L100.5 63.4 L101.5 63.4 L102.2 61.4 L102.7 59.4 L103.3 57.4 L103.6 55.4 L101.6 53.4 L102.4 51.4 L102.3 49.4 L103.3 47.4 L102.4 45.4 L103.2 43.4 L102.8 41.4 L102.2 39.4 L102.6 37.4 L103.0 35.4 L101.7 33.4 L103.2 31.4 L102.0 29.4 L102.4 27.4 L102.7 25.4 L102.2 23.4 L102.0 21.4 L102.1 19.4 L102.1 17.4 L101.5 15.4 L103.2 13.4 L102.6 11.4 L102.4 9.4 L102.6 7.4 L102.7 5.4 L102.0 3.4 Z" fill="url(#st)" opacity="0.9"/><path d="M100.9 26.9 v3.6 M101.6 31.8 v2.6 M101.5 36.3 v1.9 M101.9 40.6 v4.3 M101.7 48.1 v2.8 M101.0 52.7 v2.5" stroke="#ffd850" stroke-width="1.3" stroke-linecap="round" opacity="0.55"/><rect x="105.5" y="24" width="10" height="44.0" fill="url(#gl)" opacity="0.35"/><path d="M109.3 3.7 L109.3 5.7 L109.1 7.7 L109.5 9.7 L109.6 11.7 L108.9 13.7 L109.4 15.7 L109.1 17.7 L109.3 19.7 L109.7 21.7 L109.3 23.7 L109.7 25.7 L108.4 27.7 L109.9 29.7 L108.2 31.7 L108.6 33.7 L109.0 35.7 L109.2 37.7 L108.8 39.7 L108.7 41.7 L109.8 43.7 L108.9 45.7 L109.3 47.7 L109.3 49.7 L109.6 51.7 L108.5 53.7 L108.7 55.7 L109.3 57.7 L109.6 59.7 L110.3 61.7 L111.3 61.7 L111.5 59.7 L112.7 57.7 L113.0 55.7 L113.2 53.7 L112.1 51.7 L112.5 49.7 L112.1 47.7 L112.1 45.7 L112.1 43.7 L112.1 41.7 L112.2 39.7 L111.3 37.7 L112.3 35.7 L111.7 33.7 L111.9 31.7 L111.6 29.7 L111.8 27.7 L111.4 25.7 L112.3 23.7 L112.2 21.7 L111.8 19.7 L111.0 17.7 L112.4 15.7 L111.4 13.7 L112.1 11.7 L112.1 9.7 L111.3 7.7 L111.4 5.7 L111.4 3.7 Z" fill="url(#st)" opacity="0.9"/><path d="M109.9 25.7 v2.8 M110.3 31.3 v4.5 M110.4 37.2 v2.1 M109.8 41.0 v4.4 M110.7 47.2 v1.8" stroke="#ffd850" stroke-width="1.3" stroke-linecap="round" opacity="0.55"/><rect x="112.7" y="24" width="10" height="42.5" fill="url(#gl)" opacity="0.35"/><path d="M116.6 1.5 L115.6 3.5 L116.6 5.5 L116.5 7.5 L116.4 9.5 L116.5 11.5 L116.4 13.5 L116.0 15.5 L116.8 17.5 L116.3 19.5 L116.5 21.5 L116.6 23.5 L115.8 25.5 L116.2 27.5 L116.1 29.5 L116.5 31.5 L116.1 33.5 L115.9 35.5 L116.2 37.5 L116.3 39.5 L116.2 41.5 L115.9 43.5 L116.6 45.5 L117.0 47.5 L116.5 49.5 L114.3 51.5 L115.5 53.5 L115.5 55.5 L116.8 57.5 L116.5 59.5 L118.0 59.5 L119.3 57.5 L118.9 55.5 L119.2 53.5 L120.6 51.5 L119.2 49.5 L119.1 47.5 L118.5 45.5 L118.8 43.5 L119.6 41.5 L118.9 39.5 L118.2 37.5 L119.8 35.5 L118.8 33.5 L118.9 31.5 L119.9 29.5 L118.3 27.5 L119.6 25.5 L118.9 23.5 L119.7 21.5 L118.6 19.5 L119.3 17.5 L119.0 15.5 L118.3 13.5 L118.3 11.5 L119.2 9.5 L118.3 7.5 L118.2 5.5 L118.9 3.5 L118.9 1.5 Z" fill="url(#st)" opacity="0.9"/><path d="M117.1 25.1 v3.6 M118.4 30.9 v2.9 M117.4 36.3 v4.1 M118.4 43.3 v2.8 M117.2 47.3 v4.0" stroke="#ffd850" stroke-width="1.3" stroke-linecap="round" opacity="0.55"/><rect x="125.1" y="24" width="10" height="43.3" fill="url(#gl)" opacity="0.35"/><path d="M128.4 2.6 L128.7 4.6 L129.1 6.6 L128.5 8.6 L128.3 10.6 L129.0 12.6 L128.7 14.6 L128.2 16.6 L129.2 18.6 L129.2 20.6 L128.3 22.6 L128.5 24.6 L129.2 26.6 L128.9 28.6 L128.5 30.6 L128.8 32.6 L128.3 34.6 L129.3 36.6 L129.4 38.6 L128.9 40.6 L129.3 42.6 L128.9 44.6 L129.4 46.6 L128.2 48.6 L129.2 50.6 L127.4 52.6 L128.4 54.6 L129.1 56.6 L129.9 58.6 L129.6 60.6 L130.6 60.6 L131.1 58.6 L130.9 56.6 L131.1 54.6 L132.0 52.6 L131.7 50.6 L131.4 48.6 L131.1 46.6 L130.6 44.6 L131.6 42.6 L131.8 40.6 L131.7 38.6 L131.3 36.6 L131.4 34.6 L131.1 32.6 L131.3 30.6 L131.1 28.6 L131.2 26.6 L132.3 24.6 L130.9 22.6 L131.1 20.6 L131.4 18.6 L131.0 16.6 L132.1 14.6 L131.1 12.6 L131.1 10.6 L131.4 8.6 L131.1 6.6 L130.7 4.6 L131.5 2.6 Z" fill="url(#st)" opacity="0.9"/><path d="M130.6 26.6 v3.8 M130.0 32.4 v2.5 M130.4 35.9 v2.7 M130.4 42.0 v3.9 M129.8 48.4 v1.6" stroke="#ffd850" stroke-width="1.3" stroke-linecap="round" opacity="0.55"/><rect x="140.5" y="24" width="10" height="42.9" fill="url(#gl)" opacity="0.35"/><path d="M144.4 3.0 L144.3 5.0 L143.8 7.0 L144.4 9.0 L144.1 11.0 L143.9 13.0 L144.6 15.0 L144.5 17.0 L143.6 19.0 L143.9 21.0 L144.1 23.0 L144.5 25.0 L143.7 27.0 L143.5 29.0 L143.8 31.0 L143.2 33.0 L143.7 35.0 L144.1 37.0 L144.8 39.0 L143.9 41.0 L143.6 43.0 L143.5 45.0 L143.4 47.0 L144.4 49.0 L143.8 51.0 L143.8 53.0 L144.9 55.0 L144.0 57.0 L145.0 59.0 L146.3 59.0 L147.3 57.0 L147.1 55.0 L146.3 53.0 L147.3 51.0 L147.3 49.0 L147.1 47.0 L147.0 45.0 L146.6 43.0 L147.8 41.0 L147.0 39.0 L147.0 37.0 L147.4 35.0 L147.1 33.0 L146.4 31.0 L147.2 29.0 L146.9 27.0 L146.6 25.0 L146.1 23.0 L147.3 21.0 L146.8 19.0 L146.9 17.0 L147.4 15.0 L146.3 13.0 L146.6 11.0 L147.4 9.0 L146.5 7.0 L147.3 5.0 L146.6 3.0 Z" fill="url(#st)" opacity="0.9"/><path d="M145.6 27.0 v2.6 M145.0 32.6 v1.5 M145.3 36.3 v1.9 M145.5 40.7 v2.0 M145.2 44.4 v3.2" stroke="#ffd850" stroke-width="1.3" stroke-linecap="round" opacity="0.55"/><rect x="151.9" y="24" width="10" height="47.4" fill="url(#gl)" opacity="0.35"/><path d="M156.5 1.1 L155.6 3.1 L155.9 5.1 L155.8 7.1 L155.4 9.1 L155.5 11.1 L155.2 13.1 L155.8 15.1 L155.3 17.1 L155.6 19.1 L155.1 21.1 L156.3 23.1 L155.3 25.1 L155.7 27.1 L155.9 29.1 L155.7 31.1 L155.6 33.1 L155.2 35.1 L155.3 37.1 L155.7 39.1 L155.4 41.1 L156.5 43.1 L155.1 45.1 L155.0 47.1 L154.9 49.1 L155.3 51.1 L154.7 53.1 L154.8 55.1 L155.2 57.1 L155.7 59.1 L155.7 61.1 L156.8 63.1 L156.2 65.1 L157.4 65.1 L157.8 63.1 L157.7 61.1 L157.6 59.1 L159.5 57.1 L158.2 55.1 L158.3 53.1 L158.6 51.1 L158.3 49.1 L158.6 47.1 L159.0 45.1 L158.1 43.1 L157.9 41.1 L157.7 39.1 L158.5 37.1 L157.7 35.1 L158.2 33.1 L157.4 31.1 L158.1 29.1 L158.6 27.1 L159.0 25.1 L157.9 23.1 L158.4 21.1 L158.1 19.1 L158.6 17.1 L158.1 15.1 L158.4 13.1 L159.0 11.1 L158.4 9.1 L158.6 7.1 L158.1 5.1 L158.2 3.1 L158.2 1.1 Z" fill="url(#st)" opacity="0.9"/><path d="M156.2 25.4 v3.3 M156.6 29.8 v4.2 M157.7 36.2 v4.3 M156.6 42.7 v2.1 M156.4 48.1 v4.2" stroke="#ffd850" stroke-width="1.3" stroke-linecap="round" opacity="0.55"/><rect x="164.3" y="24" width="10" height="45.8" fill="url(#gl)" opacity="0.35"/><path d="M168.8 2.1 L167.3 4.1 L167.6 6.1 L167.2 8.1 L168.8 10.1 L168.7 12.1 L167.9 14.1 L168.7 16.1 L167.6 18.1 L168.3 20.1 L168.4 22.1 L168.0 24.1 L168.4 26.1 L167.5 28.1 L168.1 30.1 L167.6 32.1 L168.6 34.1 L167.5 36.1 L167.4 38.1 L167.3 40.1 L167.9 42.1 L168.6 44.1 L168.0 46.1 L167.2 48.1 L168.5 50.1 L168.0 52.1 L166.5 54.1 L167.1 56.1 L168.4 58.1 L167.8 60.1 L168.3 62.1 L170.3 62.1 L170.6 60.1 L170.2 58.1 L172.4 56.1 L171.4 54.1 L170.1 52.1 L170.6 50.1 L170.6 48.1 L170.1 46.1 L170.2 44.1 L170.7 42.1 L171.2 40.1 L170.4 38.1 L170.6 36.1 L170.8 34.1 L170.5 32.1 L171.2 30.1 L170.9 28.1 L170.5 26.1 L170.0 24.1 L170.6 22.1 L169.8 20.1 L170.9 18.1 L170.3 16.1 L171.1 14.1 L170.7 12.1 L170.3 10.1 L170.5 8.1 L170.3 6.1 L170.7 4.1 L170.5 2.1 Z" fill="url(#st)" opacity="0.9"/><path d="M169.5 24.7 v3.2 M169.8 29.8 v3.5 M169.9 35.6 v3.0 M170.0 41.3 v3.1 M168.8 45.8 v3.8" stroke="#ffd850" stroke-width="1.3" stroke-linecap="round" opacity="0.55"/><rect x="171.5" y="24" width="10" height="45.5" fill="url(#gl)" opacity="0.35"/><path d="M175.3 1.7 L174.7 3.7 L175.0 5.7 L175.2 7.7 L175.9 9.7 L175.1 11.7 L174.6 13.7 L175.2 15.7 L175.2 17.7 L175.1 19.7 L174.6 21.7 L174.7 23.7 L175.4 25.7 L175.1 27.7 L174.9 29.7 L175.5 31.7 L174.9 33.7 L174.6 35.7 L174.4 37.7 L175.1 39.7 L175.2 41.7 L174.4 43.7 L175.1 45.7 L176.0 47.7 L175.7 49.7 L175.3 51.7 L174.8 53.7 L173.6 55.7 L175.7 57.7 L175.6 59.7 L175.8 61.7 L177.0 61.7 L177.2 59.7 L178.1 57.7 L178.4 55.7 L178.1 53.7 L178.7 51.7 L177.3 49.7 L178.0 47.7 L177.6 45.7 L177.8 43.7 L178.4 41.7 L177.2 39.7 L177.9 37.7 L177.5 35.7 L177.6 33.7 L177.7 31.7 L177.2 29.7 L177.2 27.7 L178.2 25.7 L178.4 23.7 L177.6 21.7 L177.4 19.7 L177.6 17.7 L176.8 15.7 L177.8 13.7 L178.0 11.7 L177.3 9.7 L177.8 7.7 L177.4 5.7 L177.8 3.7 L178.3 1.7 Z" fill="url(#st)" opacity="0.9"/><path d="M177.3 24.3 v1.6 M176.1 28.8 v3.7 M176.1 34.2 v3.2 M176.3 39.5 v4.3 M176.7 45.6 v4.4 M176.7 51.1 v2.7" stroke="#ffd850" stroke-width="1.3" stroke-linecap="round" opacity="0.55"/><rect x="178.7" y="24" width="10" height="47.6" fill="url(#gl)" opacity="0.35"/><path d="M182.2 2.0 L182.0 4.0 L183.0 6.0 L182.9 8.0 L182.7 10.0 L182.9 12.0 L182.6 14.0 L182.8 16.0 L182.7 18.0 L182.1 20.0 L181.6 22.0 L182.1 24.0 L182.0 26.0 L182.1 28.0 L182.5 30.0 L182.9 32.0 L181.9 34.0 L182.2 36.0 L181.7 38.0 L182.3 40.0 L181.4 42.0 L182.5 44.0 L183.2 46.0 L182.8 48.0 L181.9 50.0 L182.2 52.0 L182.6 54.0 L180.7 56.0 L182.0 58.0 L181.8 60.0 L182.1 62.0 L183.0 64.0 L184.7 64.0 L184.8 62.0 L184.9 60.0 L185.2 58.0 L185.7 56.0 L184.1 54.0 L184.7 52.0 L184.6 50.0 L185.1 48.0 L184.9 46.0 L184.7 44.0 L185.1 42.0 L185.6 40.0 L185.4 38.0 L184.5 36.0 L185.1 34.0 L185.3 32.0 L184.4 30.0 L184.3 28.0 L185.1 26.0 L184.5 24.0 L185.2 22.0 L185.6 20.0 L184.6 18.0 L184.6 16.0 L184.2 14.0 L184.6 12.0 L184.4 10.0 L185.1 8.0 L185.1 6.0 L185.3 4.0 L185.4 2.0 Z" fill="url(#st)" opacity="0.9"/><path d="M183.3 24.6 v2.1 M183.5 29.5 v2.7 M183.4 35.4 v2.2 M183.0 39.4 v2.1 M183.8 42.6 v3.4 M183.4 49.0 v4.4" stroke="#ffd850" stroke-width="1.3" stroke-linecap="round" opacity="0.55"/><rect x="185.9" y="24" width="10" height="51.7" fill="url(#gl)" opacity="0.7"/><path d="M189.1 3.8 L188.9 5.8 L189.7 7.8 L189.8 9.8 L188.9 11.8 L189.2 13.8 L189.0 15.8 L189.6 17.8 L188.9 19.8 L188.7 21.8 L189.4 23.8 L188.6 25.8 L188.8 27.8 L188.9 29.8 L189.6 31.8 L188.6 33.8 L188.5 35.8 L188.9 37.8 L188.7 39.8 L188.8 41.8 L189.5 43.8 L188.4 45.8 L188.2 47.8 L189.0 49.8 L187.8 51.8 L189.1 53.8 L188.4 55.8 L188.5 57.8 L188.5 59.8 L188.7 61.8 L189.9 63.8 L189.8 65.8 L189.9 67.8 L191.5 67.8 L191.2 65.8 L192.7 63.8 L193.9 61.8 L192.9 59.8 L193.1 57.8 L193.6 55.8 L193.6 53.8 L193.7 51.8 L193.1 49.8 L193.0 47.8 L192.9 45.8 L193.1 43.8 L192.1 41.8 L192.8 39.8 L193.1 37.8 L192.4 35.8 L192.3 33.8 L192.0 31.8 L193.3 29.8 L193.4 27.8 L192.5 25.8 L192.1 23.8 L192.6 21.8 L192.2 19.8 L192.0 17.8 L192.4 15.8 L192.2 13.8 L192.0 11.8 L191.9 9.8 L192.3 7.8 L193.7 5.8 L193.1 3.8 Z" fill="url(#st)" opacity="1"/><path d="M190.3 15.4 v4.4 M191.2 21.4 v2.2 M191.0 25.1 v1.5 M190.9 28.6 v2.2 M191.1 33.5 v3.1 M191.7 39.0 v4.0 M191.5 44.8 v2.5 M191.2 49.2 v3.6 M191.4 55.5 v4.4" stroke="#ffd850" stroke-width="1.7" stroke-linecap="round" opacity="0.8"/><rect x="197.1" y="24" width="10" height="53.9" fill="url(#gl)" opacity="0.7"/><path d="M200.2 2.9 L201.0 4.9 L200.1 6.9 L200.6 8.9 L200.9 10.9 L200.5 12.9 L200.7 14.9 L199.7 16.9 L200.7 18.9 L200.1 20.9 L199.7 22.9 L200.6 24.9 L200.3 26.9 L200.4 28.9 L200.7 30.9 L200.2 32.9 L199.9 34.9 L199.4 36.9 L200.4 38.9 L200.1 40.9 L199.1 42.9 L200.4 44.9 L200.2 46.9 L201.0 48.9 L199.6 50.9 L200.9 52.9 L200.3 54.9 L200.6 56.9 L198.6 58.9 L199.2 60.9 L200.6 62.9 L200.4 64.9 L201.0 66.9 L201.6 68.9 L201.4 70.9 L202.6 70.9 L202.7 68.9 L202.9 66.9 L204.8 64.9 L203.2 62.9 L204.2 60.9 L204.7 58.9 L204.4 56.9 L204.2 54.9 L203.7 52.9 L205.5 50.9 L203.4 48.9 L203.4 46.9 L204.1 44.9 L204.4 42.9 L204.8 40.9 L204.3 38.9 L204.9 36.9 L205.0 34.9 L203.7 32.9 L203.9 30.9 L204.2 28.9 L204.5 26.9 L203.1 24.9 L205.3 22.9 L203.4 20.9 L204.0 18.9 L203.7 16.9 L202.7 14.9 L202.8 12.9 L203.3 10.9 L203.2 8.9 L203.6 6.9 L203.7 4.9 L203.8 2.9 Z" fill="url(#st)" opacity="1"/><path d="M202.6 15.2 v3.9 M202.3 20.8 v2.7 M201.9 26.4 v4.4 M202.6 33.6 v3.1 M201.5 38.1 v2.0 M202.1 43.5 v2.3 M201.3 47.0 v2.5 M202.3 51.9 v1.9 M202.1 55.5 v2.2 M201.4 59.6 v2.3" stroke="#ffd850" stroke-width="1.7" stroke-linecap="round" opacity="0.8"/><rect x="206.8" y="24" width="10" height="52.5" fill="url(#gl)" opacity="0.7"/><path d="M210.4 3.7 L210.6 5.7 L210.9 7.7 L210.0 9.7 L209.5 11.7 L210.8 13.7 L210.0 15.7 L210.9 17.7 L210.0 19.7 L210.5 21.7 L209.0 23.7 L210.3 25.7 L210.0 27.7 L210.2 29.7 L210.1 31.7 L210.3 33.7 L208.3 35.7 L210.0 37.7 L209.4 39.7 L210.2 41.7 L209.3 43.7 L208.4 45.7 L208.8 47.7 L209.1 49.7 L208.4 51.7 L209.3 53.7 L209.8 55.7 L209.7 57.7 L210.1 59.7 L209.7 61.7 L209.2 63.7 L210.8 65.7 L210.3 67.7 L211.2 69.7 L212.5 69.7 L212.7 67.7 L212.5 65.7 L214.0 63.7 L213.5 61.7 L213.8 59.7 L214.5 57.7 L213.6 55.7 L213.8 53.7 L214.2 51.7 L214.0 49.7 L214.7 47.7 L214.4 45.7 L214.8 43.7 L214.0 41.7 L214.7 39.7 L214.3 37.7 L214.3 35.7 L212.7 33.7 L213.6 31.7 L213.9 29.7 L212.8 27.7 L212.7 25.7 L214.0 23.7 L213.7 21.7 L214.6 19.7 L213.6 17.7 L213.9 15.7 L212.9 13.7 L213.9 11.7 L213.4 9.7 L213.4 7.7 L214.0 5.7 L212.5 3.7 Z" fill="url(#st)" opacity="1"/><path d="M211.2 16.7 v2.0 M211.7 20.1 v2.6 M211.6 23.7 v3.0 M212.5 28.5 v3.1 M211.5 33.1 v4.1 M212.6 40.1 v1.8 M211.4 44.0 v4.4 M211.3 50.5 v3.6 M212.5 55.8 v3.5" stroke="#ffd850" stroke-width="1.7" stroke-linecap="round" opacity="0.8"/><rect x="218.2" y="24" width="10" height="52.9" fill="url(#gl)" opacity="0.7"/><path d="M220.4 1.6 L221.2 3.6 L221.0 5.6 L221.7 7.6 L221.1 9.6 L221.6 11.6 L222.4 13.6 L221.2 15.6 L221.2 17.6 L221.4 19.6 L221.4 21.6 L220.6 23.6 L220.8 25.6 L221.0 27.6 L219.9 29.6 L221.7 31.6 L220.5 33.6 L221.1 35.6 L221.7 37.6 L222.3 39.6 L220.9 41.6 L220.6 43.6 L220.6 45.6 L220.5 47.6 L219.7 49.6 L220.6 51.6 L221.9 53.6 L221.2 55.6 L220.1 57.6 L221.7 59.6 L221.9 61.6 L220.8 63.6 L222.4 65.6 L222.1 67.6 L222.9 69.6 L224.3 69.6 L224.9 67.6 L224.6 65.6 L225.5 63.6 L224.6 61.6 L225.0 59.6 L225.7 57.6 L225.2 55.6 L225.1 53.6 L226.2 51.6 L225.8 49.6 L225.9 47.6 L226.5 45.6 L226.1 43.6 L225.0 41.6 L225.1 39.6 L225.5 37.6 L226.2 35.6 L225.6 33.6 L225.7 31.6 L225.8 29.6 L225.6 27.6 L225.5 25.6 L224.9 23.6 L225.1 21.6 L224.5 19.6 L225.1 17.6 L225.1 15.6 L224.6 13.6 L225.0 11.6 L225.6 9.6 L225.5 7.6 L224.8 5.6 L225.0 3.6 L225.3 1.6 Z" fill="url(#st)" opacity="1"/><path d="M223.0 17.2 v2.0 M223.0 20.4 v1.6 M222.6 25.2 v4.0 M223.8 30.6 v2.7 M222.5 35.8 v4.2 M223.4 43.5 v2.1 M222.7 48.8 v3.7 M222.4 55.2 v2.8" stroke="#ffd850" stroke-width="1.7" stroke-linecap="round" opacity="0.8"/><rect x="228.5" y="24" width="10" height="55.0" fill="url(#gl)" opacity="0.7"/><path d="M232.2 1.9 L231.2 3.9 L232.6 5.9 L231.5 7.9 L232.8 9.9 L231.5 11.9 L232.8 13.9 L231.7 15.9 L231.8 17.9 L231.6 19.9 L231.5 21.9 L230.7 23.9 L231.5 25.9 L230.4 27.9 L230.8 29.9 L231.0 31.9 L230.5 33.9 L230.9 35.9 L231.9 37.9 L231.9 39.9 L231.2 41.9 L232.1 43.9 L231.8 45.9 L230.3 47.9 L231.2 49.9 L231.8 51.9 L232.5 53.9 L231.8 55.9 L232.0 57.9 L230.8 59.9 L230.9 61.9 L230.1 63.9 L231.8 65.9 L232.0 67.9 L233.0 69.9 L232.2 71.9 L233.9 71.9 L234.8 69.9 L235.4 67.9 L235.0 65.9 L236.1 63.9 L235.3 61.9 L236.4 59.9 L235.6 57.9 L235.1 55.9 L235.3 53.9 L235.0 51.9 L236.1 49.9 L236.3 47.9 L235.1 45.9 L234.7 43.9 L235.7 41.9 L235.6 39.9 L235.9 37.9 L236.4 35.9 L236.1 33.9 L235.5 31.9 L235.7 29.9 L236.3 27.9 L235.5 25.9 L236.1 23.9 L235.3 21.9 L234.7 19.9 L234.8 17.9 L235.7 15.9 L235.2 13.9 L235.2 11.9 L235.1 9.9 L234.8 7.9 L234.8 5.9 L235.2 3.9 L235.0 1.9 Z" fill="url(#st)" opacity="1"/><path d="M233.3 16.5 v2.9 M233.8 21.6 v2.4 M234.3 26.6 v4.4 M234.0 34.5 v2.7 M234.3 39.8 v3.6 M233.3 44.5 v2.9 M234.3 50.1 v2.2 M232.9 53.7 v2.6 M232.8 58.3 v3.7" stroke="#ffd850" stroke-width="1.7" stroke-linecap="round" opacity="0.8"/><rect x="236.7" y="24" width="10" height="55.0" fill="url(#gl)" opacity="0.7"/><path d="M239.4 2.9 L239.8 4.9 L239.2 6.9 L239.6 8.9 L239.9 10.9 L238.9 12.9 L240.3 14.9 L239.6 16.9 L239.4 18.9 L239.6 20.9 L239.1 22.9 L240.4 24.9 L240.3 26.9 L240.0 28.9 L240.2 30.9 L239.7 32.9 L240.0 34.9 L240.7 36.9 L240.7 38.9 L239.5 40.9 L239.8 42.9 L238.6 44.9 L240.2 46.9 L239.2 48.9 L238.9 50.9 L239.1 52.9 L240.1 54.9 L238.9 56.9 L238.5 58.9 L239.3 60.9 L239.7 62.9 L238.8 64.9 L240.3 66.9 L240.5 68.9 L240.8 70.9 L241.0 72.9 L242.1 72.9 L242.6 70.9 L243.8 68.9 L243.4 66.9 L244.3 64.9 L243.0 62.9 L243.2 60.9 L244.0 58.9 L244.8 56.9 L242.9 54.9 L243.4 52.9 L243.9 50.9 L244.6 48.9 L242.5 46.9 L244.6 44.9 L244.4 42.9 L243.8 40.9 L243.6 38.9 L243.4 36.9 L244.1 34.9 L243.8 32.9 L242.7 30.9 L243.2 28.9 L243.7 26.9 L243.0 24.9 L243.6 22.9 L243.0 20.9 L243.6 18.9 L243.1 16.9 L243.2 14.9 L243.5 12.9 L244.4 10.9 L242.9 8.9 L243.4 6.9 L244.1 4.9 L243.5 2.9 Z" fill="url(#st)" opacity="1"/><path d="M241.3 15.2 v3.7 M241.7 20.8 v2.8 M241.6 25.5 v2.8 M241.0 29.4 v4.0 M241.5 35.8 v3.1 M241.5 40.5 v1.8 M241.3 44.0 v3.0 M240.9 49.9 v3.0 M240.9 54.8 v4.4" stroke="#ffd850" stroke-width="1.7" stroke-linecap="round" opacity="0.8"/><rect x="247.0" y="24" width="10" height="52.9" fill="url(#gl)" opacity="0.7"/><path d="M250.0 3.9 L250.7 5.9 L250.0 7.9 L250.3 9.9 L249.5 11.9 L250.7 13.9 L250.9 15.9 L250.8 17.9 L250.2 19.9 L249.6 21.9 L249.3 23.9 L250.0 25.9 L249.6 27.9 L249.2 29.9 L248.9 31.9 L249.7 33.9 L249.2 35.9 L251.2 37.9 L249.5 39.9 L251.1 41.9 L250.2 43.9 L249.4 45.9 L251.0 47.9 L250.3 49.9 L250.1 51.9 L249.6 53.9 L250.5 55.9 L250.3 57.9 L249.4 59.9 L249.3 61.9 L250.6 63.9 L250.1 65.9 L250.3 67.9 L251.5 69.9 L252.6 69.9 L253.1 67.9 L254.0 65.9 L253.0 63.9 L253.9 61.9 L254.9 59.9 L252.9 57.9 L254.0 55.9 L253.6 53.9 L253.8 51.9 L254.2 49.9 L253.6 47.9 L255.4 45.9 L254.1 43.9 L253.4 41.9 L254.7 39.9 L253.6 37.9 L255.0 35.9 L254.4 33.9 L254.1 31.9 L253.9 29.9 L255.0 27.9 L253.6 25.9 L255.3 23.9 L253.6 21.9 L253.3 19.9 L253.9 17.9 L253.6 15.9 L252.8 13.9 L253.6 11.9 L253.7 9.9 L253.7 7.9 L253.5 5.9 L253.7 3.9 Z" fill="url(#st)" opacity="1"/><path d="M252.6 17.4 v1.9 M251.9 21.4 v1.6 M252.7 24.9 v3.5 M251.8 30.7 v3.6 M252.4 37.2 v1.8 M251.5 40.5 v3.3 M251.8 45.6 v2.0 M251.8 50.0 v3.1 M251.8 55.5 v4.0" stroke="#ffd850" stroke-width="1.7" stroke-linecap="round" opacity="0.8"/><rect x="257.4" y="24" width="10" height="57.8" fill="url(#gl)" opacity="0.7"/><path d="M261.2 2.4 L260.9 4.4 L260.4 6.4 L260.6 8.4 L260.1 10.4 L260.3 12.4 L260.6 14.4 L260.4 16.4 L260.8 18.4 L261.4 20.4 L260.9 22.4 L259.2 24.4 L260.0 26.4 L260.0 28.4 L261.4 30.4 L260.1 32.4 L261.3 34.4 L260.5 36.4 L260.3 38.4 L261.3 40.4 L260.5 42.4 L259.7 44.4 L261.0 46.4 L259.7 48.4 L259.9 50.4 L260.5 52.4 L261.2 54.4 L260.6 56.4 L260.4 58.4 L260.1 60.4 L260.5 62.4 L260.7 64.4 L261.2 66.4 L260.0 68.4 L261.1 70.4 L261.4 72.4 L261.7 74.4 L263.6 74.4 L263.7 72.4 L264.2 70.4 L265.0 68.4 L264.3 66.4 L264.9 64.4 L263.9 62.4 L264.2 60.4 L263.7 58.4 L263.8 56.4 L263.6 54.4 L263.8 52.4 L265.4 50.4 L264.7 48.4 L264.7 46.4 L265.5 44.4 L265.1 42.4 L264.0 40.4 L264.7 38.4 L263.7 36.4 L264.0 34.4 L265.3 32.4 L264.3 30.4 L264.4 28.4 L264.9 26.4 L264.7 24.4 L263.6 22.4 L263.9 20.4 L264.0 18.4 L265.2 16.4 L264.3 14.4 L264.4 12.4 L264.5 10.4 L263.3 8.4 L264.5 6.4 L263.5 4.4 L264.0 2.4 Z" fill="url(#st)" opacity="1"/><path d="M263.1 15.0 v1.7 M262.0 18.6 v3.9 M262.8 24.6 v2.6 M262.5 30.6 v3.0 M263.1 35.5 v2.2 M262.7 38.9 v4.3 M261.8 44.4 v4.2 M263.2 51.1 v1.9 M261.7 54.7 v4.1 M261.6 61.5 v1.7" stroke="#ffd850" stroke-width="1.7" stroke-linecap="round" opacity="0.8"/><rect x="263.5" y="24" width="10" height="55.5" fill="url(#gl)" opacity="0.7"/><path d="M266.5 3.9 L266.3 5.9 L266.4 7.9 L266.6 9.9 L266.5 11.9 L266.4 13.9 L266.4 15.9 L266.9 17.9 L266.1 19.9 L267.2 21.9 L266.9 23.9 L266.0 25.9 L266.0 27.9 L266.2 29.9 L267.3 31.9 L266.4 33.9 L266.3 35.9 L265.2 37.9 L266.8 39.9 L266.9 41.9 L266.2 43.9 L266.8 45.9 L266.0 47.9 L266.4 49.9 L266.2 51.9 L266.9 53.9 L266.3 55.9 L265.7 57.9 L266.6 59.9 L267.6 61.9 L266.8 63.9 L266.4 65.9 L266.7 67.9 L268.0 69.9 L267.6 71.9 L268.7 71.9 L269.7 69.9 L270.2 67.9 L270.3 65.9 L270.4 63.9 L270.0 61.9 L270.1 59.9 L271.1 57.9 L271.6 55.9 L269.2 53.9 L271.4 51.9 L270.7 49.9 L271.4 47.9 L269.2 45.9 L271.8 43.9 L269.3 41.9 L271.1 39.9 L271.0 37.9 L270.9 35.9 L271.0 33.9 L269.7 31.9 L271.7 29.9 L271.9 27.9 L271.9 25.9 L270.5 23.9 L269.4 21.9 L271.0 19.9 L270.2 17.9 L269.8 15.9 L270.4 13.9 L269.9 11.9 L270.1 9.9 L269.9 7.9 L269.8 5.9 L271.0 3.9 Z" fill="url(#st)" opacity="1"/><path d="M269.0 15.0 v2.9 M268.7 19.8 v2.2 M268.1 23.6 v3.1 M268.1 29.9 v2.1 M268.9 33.7 v2.5 M268.6 38.9 v3.9 M268.1 44.0 v3.8 M269.3 49.3 v2.7 M269.2 54.0 v2.6 M267.9 60.0 v2.7" stroke="#ffd850" stroke-width="1.7" stroke-linecap="round" opacity="0.8"/><rect x="273.8" y="24" width="10" height="52.7" fill="url(#gl)" opacity="0.7"/><path d="M276.5 3.3 L277.5 5.3 L276.7 7.3 L276.1 9.3 L277.0 11.3 L278.2 13.3 L277.4 15.3 L277.0 17.3 L276.3 19.3 L276.1 21.3 L276.7 23.3 L276.9 25.3 L276.7 27.3 L276.7 29.3 L276.7 31.3 L277.2 33.3 L275.4 35.3 L277.1 37.3 L277.4 39.3 L276.9 41.3 L276.7 43.3 L276.8 45.3 L277.1 47.3 L277.2 49.3 L277.3 51.3 L276.6 53.3 L276.4 55.3 L277.1 57.3 L277.4 59.3 L275.5 61.3 L277.1 63.3 L277.1 65.3 L277.8 67.3 L278.7 69.3 L279.4 69.3 L280.8 67.3 L279.9 65.3 L281.2 63.3 L282.0 61.3 L280.8 59.3 L280.6 57.3 L280.6 55.3 L281.8 53.3 L279.9 51.3 L279.8 49.3 L281.4 47.3 L281.3 45.3 L281.0 43.3 L279.9 41.3 L279.9 39.3 L280.2 37.3 L281.3 35.3 L280.0 33.3 L280.7 31.3 L281.8 29.3 L281.6 27.3 L280.0 25.3 L281.8 23.3 L280.8 21.3 L281.0 19.3 L281.5 17.3 L279.7 15.3 L280.2 13.3 L280.4 11.3 L280.5 9.3 L280.8 7.3 L280.3 5.3 L280.8 3.3 Z" fill="url(#st)" opacity="1"/><path d="M278.3 15.6 v1.7 M278.3 18.7 v3.7 M279.3 23.4 v2.2 M278.7 27.9 v3.5 M278.5 32.8 v1.5 M279.0 35.4 v2.3 M279.0 39.6 v2.9 M279.4 44.3 v2.6 M278.9 49.4 v2.8 M279.5 54.3 v2.5 M279.4 58.3 v4.3" stroke="#ffd850" stroke-width="1.7" stroke-linecap="round" opacity="0.8"/><rect x="280.0" y="24" width="10" height="54.1" fill="url(#gl)" opacity="0.7"/><path d="M282.3 1.5 L284.0 3.5 L283.8 5.5 L284.3 7.5 L283.2 9.5 L282.9 11.5 L283.2 13.5 L282.7 15.5 L283.0 17.5 L283.1 19.5 L283.3 21.5 L282.6 23.5 L282.9 25.5 L283.1 27.5 L283.3 29.5 L284.0 31.5 L283.7 33.5 L282.1 35.5 L282.1 37.5 L283.1 39.5 L282.0 41.5 L282.7 43.5 L282.3 45.5 L282.9 47.5 L283.8 49.5 L282.8 51.5 L282.3 53.5 L282.5 55.5 L282.6 57.5 L283.8 59.5 L283.0 61.5 L281.6 63.5 L283.1 65.5 L283.4 67.5 L284.2 69.5 L284.0 71.5 L285.1 71.5 L286.7 69.5 L286.8 67.5 L286.6 65.5 L287.4 63.5 L286.5 61.5 L286.8 59.5 L288.0 57.5 L287.9 55.5 L288.1 53.5 L288.2 51.5 L286.9 49.5 L286.5 47.5 L287.7 45.5 L286.9 43.5 L287.9 41.5 L287.0 39.5 L287.9 37.5 L287.4 35.5 L286.9 33.5 L286.6 31.5 L286.6 29.5 L287.8 27.5 L287.1 25.5 L286.6 23.5 L286.9 21.5 L286.5 19.5 L286.0 17.5 L287.4 15.5 L286.8 13.5 L286.8 11.5 L286.0 9.5 L286.6 7.5 L286.4 5.5 L286.4 3.5 L287.2 1.5 Z" fill="url(#st)" opacity="1"/><path d="M285.8 16.7 v1.8 M284.5 21.7 v2.4 M285.8 26.8 v3.8 M285.4 33.2 v1.9 M285.4 36.2 v4.1 M285.1 43.3 v4.1 M285.0 50.7 v3.4 M284.2 56.1 v2.6" stroke="#ffd850" stroke-width="1.7" stroke-linecap="round" opacity="0.8"/><rect x="286.2" y="24" width="10" height="51.8" fill="url(#gl)" opacity="0.7"/><path d="M289.5 3.4 L289.2 5.4 L289.6 7.4 L290.1 9.4 L289.7 11.4 L290.2 13.4 L288.7 15.4 L288.9 17.4 L289.1 19.4 L289.5 21.4 L289.0 23.4 L290.3 25.4 L289.0 27.4 L288.4 29.4 L289.7 31.4 L289.4 33.4 L289.5 35.4 L289.4 37.4 L288.4 39.4 L289.2 41.4 L289.6 43.4 L287.9 45.4 L289.4 47.4 L288.7 49.4 L289.3 51.4 L288.1 53.4 L289.5 55.4 L288.7 57.4 L288.2 59.4 L289.8 61.4 L290.1 63.4 L289.5 65.4 L290.2 67.4 L290.6 69.4 L291.7 69.4 L292.4 67.4 L292.6 65.4 L292.8 63.4 L292.7 61.4 L293.4 59.4 L293.0 57.4 L293.9 55.4 L293.8 53.4 L294.0 51.4 L293.9 49.4 L293.4 47.4 L293.8 45.4 L292.8 43.4 L293.0 41.4 L294.3 39.4 L293.1 37.4 L292.0 35.4 L292.6 33.4 L292.8 31.4 L293.5 29.4 L293.3 27.4 L292.8 25.4 L293.3 23.4 L292.4 21.4 L293.9 19.4 L293.7 17.4 L293.3 15.4 L293.1 13.4 L293.6 11.4 L292.6 9.4 L292.4 7.4 L293.2 5.4 L293.4 3.4 Z" fill="url(#st)" opacity="1"/><path d="M291.2 15.7 v1.8 M290.5 20.9 v4.2 M291.5 26.3 v2.3 M291.1 30.7 v1.9 M291.0 35.0 v3.7 M291.4 41.4 v3.5 M290.6 46.0 v3.6 M290.4 50.8 v2.9 M291.1 54.9 v2.7" stroke="#ffd850" stroke-width="1.7" stroke-linecap="round" opacity="0.8"/><rect x="293.4" y="24" width="10" height="56.8" fill="url(#gl)" opacity="0.7"/><path d="M296.8 3.9 L297.5 5.9 L297.1 7.9 L297.5 9.9 L296.6 11.9 L297.2 13.9 L297.4 15.9 L296.3 17.9 L296.8 19.9 L296.6 21.9 L296.0 23.9 L296.9 25.9 L296.4 27.9 L295.5 29.9 L296.9 31.9 L295.7 33.9 L296.7 35.9 L295.6 37.9 L296.3 39.9 L296.2 41.9 L296.6 43.9 L297.1 45.9 L296.7 47.9 L296.8 49.9 L297.1 51.9 L295.6 53.9 L295.8 55.9 L297.0 57.9 L297.3 59.9 L297.2 61.9 L296.0 63.9 L296.5 65.9 L296.5 67.9 L296.8 69.9 L297.8 71.9 L297.8 73.9 L299.1 73.9 L299.4 71.9 L300.2 69.9 L300.8 67.9 L300.5 65.9 L301.4 63.9 L299.8 61.9 L300.3 59.9 L300.8 57.9 L300.4 55.9 L300.8 53.9 L299.5 51.9 L300.4 49.9 L301.1 47.9 L300.3 45.9 L300.5 43.9 L301.0 41.9 L301.4 39.9 L300.8 37.9 L300.5 35.9 L301.7 33.9 L300.7 31.9 L301.2 29.9 L300.4 27.9 L300.4 25.9 L300.6 23.9 L299.8 21.9 L299.8 19.9 L300.4 17.9 L300.0 15.9 L300.3 13.9 L300.0 11.9 L300.0 9.9 L299.3 7.9 L300.3 5.9 L300.2 3.9 Z" fill="url(#st)" opacity="1"/><path d="M298.8 17.9 v1.9 M299.1 21.7 v3.7 M298.4 27.0 v3.2 M298.6 32.5 v2.0 M298.1 37.7 v3.5 M297.8 44.2 v2.8 M298.4 49.5 v2.9 M299.1 55.8 v3.2 M297.7 60.9 v3.8" stroke="#ffd850" stroke-width="1.7" stroke-linecap="round" opacity="0.8"/><rect x="299.6" y="24" width="10" height="55.5" fill="url(#gl)" opacity="0.7"/><path d="M302.3 3.1 L303.1 5.1 L302.4 7.1 L303.2 9.1 L303.2 11.1 L302.8 13.1 L303.0 15.1 L303.1 17.1 L302.7 19.1 L303.2 21.1 L301.7 23.1 L302.3 25.1 L303.2 27.1 L302.0 29.1 L301.5 31.1 L302.4 33.1 L302.9 35.1 L302.5 37.1 L301.3 39.1 L303.1 41.1 L303.6 43.1 L302.7 45.1 L303.0 47.1 L301.9 49.1 L303.0 51.1 L301.8 53.1 L302.1 55.1 L302.9 57.1 L303.2 59.1 L303.6 61.1 L303.7 63.1 L302.5 65.1 L303.1 67.1 L304.0 69.1 L304.0 71.1 L303.9 73.1 L304.5 73.1 L305.9 71.1 L306.2 69.1 L305.2 67.1 L306.9 65.1 L306.2 63.1 L306.0 61.1 L306.4 59.1 L306.0 57.1 L307.8 55.1 L306.8 53.1 L305.9 51.1 L307.7 49.1 L306.9 47.1 L306.3 45.1 L306.5 43.1 L306.3 41.1 L307.3 39.1 L306.9 37.1 L306.9 35.1 L306.5 33.1 L307.1 31.1 L306.9 29.1 L306.4 27.1 L307.7 25.1 L306.6 23.1 L305.9 21.1 L307.0 19.1 L305.3 17.1 L305.6 15.1 L307.3 13.1 L305.6 11.1 L306.3 9.1 L305.9 7.1 L305.8 5.1 L306.7 3.1 Z" fill="url(#st)" opacity="1"/><path d="M304.1 14.1 v3.6 M304.9 19.4 v3.5 M304.3 24.7 v2.9 M304.4 30.0 v2.6 M304.2 34.2 v2.4 M304.7 37.6 v2.4 M305.2 41.7 v1.8 M304.3 45.7 v3.0 M304.8 51.9 v3.8 M304.6 58.4 v3.6" stroke="#ffd850" stroke-width="1.7" stroke-linecap="round" opacity="0.8"/><rect x="309.9" y="24" width="10" height="54.0" fill="url(#gl)" opacity="0.7"/><path d="M313.3 2.2 L313.4 4.2 L312.3 6.2 L313.7 8.2 L314.2 10.2 L312.8 12.2 L314.0 14.2 L312.9 16.2 L313.2 18.2 L313.2 20.2 L313.1 22.2 L312.3 24.2 L311.7 26.2 L313.7 28.2 L312.7 30.2 L313.5 32.2 L313.3 34.2 L314.1 36.2 L313.4 38.2 L313.1 40.2 L313.6 42.2 L311.9 44.2 L312.4 46.2 L312.3 48.2 L313.3 50.2 L312.2 52.2 L312.9 54.2 L313.2 56.2 L312.1 58.2 L313.5 60.2 L312.7 62.2 L312.3 64.2 L312.7 66.2 L314.3 68.2 L314.6 70.2 L315.8 70.2 L315.8 68.2 L317.2 66.2 L317.2 64.2 L316.2 62.2 L316.6 60.2 L316.8 58.2 L316.8 56.2 L316.9 54.2 L317.0 52.2 L317.3 50.2 L316.8 48.2 L317.6 46.2 L317.8 44.2 L316.3 42.2 L316.9 40.2 L315.7 38.2 L316.7 36.2 L317.5 34.2 L317.0 32.2 L317.1 30.2 L317.0 28.2 L317.2 26.2 L318.3 24.2 L317.5 22.2 L316.4 20.2 L317.1 18.2 L317.3 16.2 L316.5 14.2 L316.6 12.2 L316.2 10.2 L315.7 8.2 L316.9 6.2 L316.9 4.2 L316.6 2.2 Z" fill="url(#st)" opacity="1"/><path d="M314.2 16.9 v3.8 M314.3 21.8 v3.9 M314.4 27.2 v1.6 M314.6 30.9 v4.4 M314.4 37.0 v4.0 M315.6 43.5 v3.3 M314.7 48.0 v3.2 M315.2 54.2 v2.3 M315.6 57.9 v3.0" stroke="#ffd850" stroke-width="1.7" stroke-linecap="round" opacity="0.8"/><rect x="315.1" y="24" width="10" height="57.3" fill="url(#gl)" opacity="0.7"/><path d="M317.7 1.8 L318.6 3.8 L319.1 5.8 L318.6 7.8 L318.3 9.8 L318.8 11.8 L318.0 13.8 L318.3 15.8 L317.9 17.8 L319.6 19.8 L318.4 21.8 L318.8 23.8 L316.9 25.8 L318.0 27.8 L317.6 29.8 L318.2 31.8 L317.2 33.8 L316.8 35.8 L318.6 37.8 L317.5 39.8 L317.8 41.8 L317.1 43.8 L317.0 45.8 L318.2 47.8 L319.3 49.8 L317.8 51.8 L319.2 53.8 L318.2 55.8 L318.5 57.8 L318.1 59.8 L318.4 61.8 L317.4 63.8 L318.5 65.8 L318.1 67.8 L318.5 69.8 L319.1 71.8 L319.8 73.8 L320.6 73.8 L321.1 71.8 L321.7 69.8 L321.4 67.8 L321.8 65.8 L322.1 63.8 L321.2 61.8 L321.5 59.8 L320.9 57.8 L322.8 55.8 L321.7 53.8 L321.6 51.8 L321.7 49.8 L321.1 47.8 L322.5 45.8 L322.2 43.8 L322.9 41.8 L323.0 39.8 L321.6 37.8 L322.4 35.8 L322.2 33.8 L321.4 31.8 L322.8 29.8 L322.2 27.8 L322.7 25.8 L321.6 23.8 L321.4 21.8 L321.6 19.8 L321.4 17.8 L321.7 15.8 L321.3 13.8 L321.8 11.8 L322.2 9.8 L322.6 7.8 L321.8 5.8 L321.1 3.8 L321.6 1.8 Z" fill="url(#st)" opacity="1"/><path d="M319.3 14.8 v2.5 M319.9 20.5 v3.3 M319.5 26.1 v4.3 M319.9 32.4 v3.6 M319.4 38.8 v4.2 M320.5 44.7 v2.4 M320.8 50.1 v3.6 M320.7 55.1 v2.7 M320.9 60.7 v1.8" stroke="#ffd850" stroke-width="1.7" stroke-linecap="round" opacity="0.8"/><rect x="322.3" y="24" width="10" height="52.9" fill="url(#gl)" opacity="0.7"/><path d="M325.9 3.6 L325.1 5.6 L325.5 7.6 L325.2 9.6 L324.5 11.6 L325.8 13.6 L326.4 15.6 L326.4 17.6 L325.8 19.6 L325.1 21.6 L325.7 23.6 L324.0 25.6 L325.6 27.6 L326.1 29.6 L325.8 31.6 L325.0 33.6 L325.6 35.6 L325.3 37.6 L324.4 39.6 L326.2 41.6 L325.7 43.6 L325.1 45.6 L324.3 47.6 L325.4 49.6 L325.8 51.6 L325.5 53.6 L326.1 55.6 L324.0 57.6 L324.6 59.6 L325.9 61.6 L326.2 63.6 L325.9 65.6 L325.4 67.6 L326.4 69.6 L327.3 69.6 L328.4 67.6 L329.0 65.6 L328.9 63.6 L328.5 61.6 L329.3 59.6 L330.0 57.6 L329.0 55.6 L329.5 53.6 L329.3 51.6 L329.0 49.6 L330.1 47.6 L330.2 45.6 L328.9 43.6 L328.8 41.6 L330.5 39.6 L328.9 37.6 L328.0 35.6 L328.6 33.6 L328.9 31.6 L329.2 29.6 L329.3 27.6 L330.1 25.6 L329.7 23.6 L328.9 21.6 L328.5 19.6 L328.5 17.6 L328.7 15.6 L328.9 13.6 L329.3 11.6 L329.7 9.6 L330.1 7.6 L329.7 5.6 L329.6 3.6 Z" fill="url(#st)" opacity="1"/><path d="M327.6 15.8 v4.0 M327.1 22.2 v4.1 M326.5 27.5 v3.4 M326.8 32.5 v1.6 M326.7 35.3 v3.1 M327.1 40.9 v4.0 M327.7 46.2 v3.5 M327.4 52.9 v3.2" stroke="#ffd850" stroke-width="1.7" stroke-linecap="round" opacity="0.8"/><rect x="327.5" y="24" width="10" height="57.8" fill="url(#gl)" opacity="0.7"/><path d="M331.4 3.0 L330.6 5.0 L331.5 7.0 L331.3 9.0 L330.8 11.0 L331.1 13.0 L330.8 15.0 L330.3 17.0 L331.1 19.0 L331.1 21.0 L331.0 23.0 L330.3 25.0 L330.3 27.0 L329.0 29.0 L330.2 31.0 L329.7 33.0 L331.0 35.0 L330.5 37.0 L330.3 39.0 L331.0 41.0 L330.5 43.0 L329.7 45.0 L330.7 47.0 L329.9 49.0 L331.4 51.0 L330.9 53.0 L329.8 55.0 L329.4 57.0 L331.4 59.0 L330.7 61.0 L330.1 63.0 L329.9 65.0 L330.5 67.0 L330.6 69.0 L331.8 71.0 L331.9 73.0 L332.6 75.0 L333.3 75.0 L333.3 73.0 L334.0 71.0 L334.4 69.0 L333.6 67.0 L335.6 65.0 L334.9 63.0 L333.4 61.0 L334.2 59.0 L335.3 57.0 L334.3 55.0 L334.0 53.0 L334.0 51.0 L335.6 49.0 L333.5 47.0 L335.3 45.0 L333.6 43.0 L334.7 41.0 L334.3 39.0 L335.1 37.0 L333.9 35.0 L334.6 33.0 L334.0 31.0 L335.1 29.0 L334.4 27.0 L334.5 25.0 L334.8 23.0 L334.5 21.0 L333.8 19.0 L335.2 17.0 L334.5 15.0 L333.2 13.0 L334.2 11.0 L333.9 9.0 L333.4 7.0 L334.4 5.0 L334.1 3.0 Z" fill="url(#st)" opacity="1"/><path d="M332.2 17.8 v3.4 M333.0 24.0 v4.2 M331.9 29.3 v3.0 M333.1 34.6 v4.4 M332.2 40.6 v3.2 M332.9 45.2 v3.7 M332.8 50.8 v2.8 M331.9 56.4 v2.9 M333.0 60.5 v2.0" stroke="#ffd850" stroke-width="1.7" stroke-linecap="round" opacity="0.8"/><rect x="334.7" y="24" width="10" height="52.9" fill="url(#gl)" opacity="0.7"/><path d="M337.9 2.9 L337.4 4.9 L338.8 6.9 L338.0 8.9 L337.7 10.9 L337.9 12.9 L338.3 14.9 L338.1 16.9 L338.4 18.9 L338.1 20.9 L337.2 22.9 L337.6 24.9 L338.0 26.9 L337.9 28.9 L338.7 30.9 L336.6 32.9 L337.4 34.9 L338.4 36.9 L336.4 38.9 L338.3 40.9 L338.5 42.9 L337.9 44.9 L338.0 46.9 L337.5 48.9 L336.7 50.9 L337.6 52.9 L337.6 54.9 L337.9 56.9 L337.2 58.9 L338.3 60.9 L337.3 62.9 L338.7 64.9 L339.1 66.9 L339.4 68.9 L340.8 68.9 L341.2 66.9 L340.5 64.9 L341.7 62.9 L341.0 60.9 L342.5 58.9 L340.7 56.9 L341.2 54.9 L342.4 52.9 L341.8 50.9 L341.4 48.9 L341.0 46.9 L341.5 44.9 L341.7 42.9 L341.6 40.9 L342.1 38.9 L341.3 36.9 L341.2 34.9 L342.4 32.9 L341.3 30.9 L341.1 28.9 L341.7 26.9 L342.5 24.9 L342.8 22.9 L341.0 20.9 L341.3 18.9 L341.1 16.9 L341.4 14.9 L342.4 12.9 L341.9 10.9 L341.7 8.9 L341.0 6.9 L342.2 4.9 L340.9 2.9 Z" fill="url(#st)" opacity="1"/><path d="M339.1 17.5 v3.2 M339.8 23.7 v1.8 M339.6 26.7 v1.8 M339.8 29.9 v4.5 M340.1 37.6 v4.4 M340.1 44.6 v2.9 M339.7 50.2 v2.0 M340.0 54.2 v3.0" stroke="#ffd850" stroke-width="1.7" stroke-linecap="round" opacity="0.8"/><rect x="342.9" y="24" width="10" height="56.3" fill="url(#gl)" opacity="0.7"/><path d="M345.3 2.7 L346.3 4.7 L347.2 6.7 L346.4 8.7 L346.3 10.7 L346.8 12.7 L346.8 14.7 L345.2 16.7 L345.7 18.7 L345.2 20.7 L346.5 22.7 L345.8 24.7 L346.0 26.7 L346.3 28.7 L346.4 30.7 L346.2 32.7 L346.4 34.7 L345.1 36.7 L345.2 38.7 L345.7 40.7 L345.7 42.7 L346.7 44.7 L345.6 46.7 L346.0 48.7 L346.2 50.7 L345.5 52.7 L345.5 54.7 L345.8 56.7 L345.7 58.7 L345.2 60.7 L345.8 62.7 L345.8 64.7 L345.9 66.7 L346.7 68.7 L346.7 70.7 L347.1 72.7 L348.4 72.7 L348.2 70.7 L349.2 68.7 L350.4 66.7 L349.9 64.7 L349.9 62.7 L350.5 60.7 L350.5 58.7 L349.5 56.7 L349.6 54.7 L351.2 52.7 L349.1 50.7 L349.1 48.7 L351.0 46.7 L349.6 44.7 L351.1 42.7 L349.4 40.7 L351.3 38.7 L349.7 36.7 L349.5 34.7 L348.9 32.7 L349.7 30.7 L349.4 28.7 L349.9 26.7 L350.3 24.7 L349.8 22.7 L349.8 20.7 L349.3 18.7 L349.6 16.7 L349.7 14.7 L349.5 12.7 L349.6 10.7 L349.2 8.7 L349.5 6.7 L348.6 4.7 L349.7 2.7 Z" fill="url(#st)" opacity="1"/><path d="M347.8 14.1 v1.7 M347.1 19.2 v4.0 M347.6 25.0 v2.6 M348.4 29.0 v3.3 M347.3 34.2 v2.0 M347.5 37.3 v3.8 M347.2 43.9 v3.9 M348.3 49.2 v2.4 M347.8 54.5 v2.4 M348.4 58.8 v2.9" stroke="#ffd850" stroke-width="1.7" stroke-linecap="round" opacity="0.8"/><rect x="349.1" y="24" width="10" height="57.4" fill="url(#gl)" opacity="0.7"/><path d="M352.7 3.4 L351.4 5.4 L351.3 7.4 L351.6 9.4 L352.6 11.4 L352.1 13.4 L353.3 15.4 L351.9 17.4 L352.9 19.4 L352.6 21.4 L351.3 23.4 L351.0 25.4 L352.7 27.4 L352.0 29.4 L352.4 31.4 L352.2 33.4 L352.3 35.4 L351.9 37.4 L351.5 39.4 L351.9 41.4 L352.0 43.4 L352.2 45.4 L352.3 47.4 L351.6 49.4 L351.1 51.4 L352.1 53.4 L352.5 55.4 L351.5 57.4 L351.9 59.4 L351.5 61.4 L351.8 63.4 L351.1 65.4 L351.8 67.4 L352.5 69.4 L353.2 71.4 L352.6 73.4 L354.7 73.4 L355.6 71.4 L355.8 69.4 L356.4 67.4 L357.6 65.4 L357.1 63.4 L356.7 61.4 L356.0 59.4 L356.8 57.4 L354.9 55.4 L356.1 53.4 L356.8 51.4 L355.7 49.4 L355.0 47.4 L355.6 45.4 L355.3 43.4 L356.1 41.4 L356.4 39.4 L355.3 37.4 L356.1 35.4 L356.1 33.4 L354.9 31.4 L355.6 29.4 L356.0 27.4 L356.4 25.4 L357.1 23.4 L355.4 21.4 L354.9 19.4 L356.4 17.4 L355.7 15.4 L356.5 13.4 L355.4 11.4 L355.9 9.4 L356.3 7.4 L356.1 5.4 L356.4 3.4 Z" fill="url(#st)" opacity="1"/><path d="M354.3 17.0 v3.3 M354.1 23.6 v1.6 M353.6 27.2 v4.3 M354.5 34.0 v1.9 M353.8 38.1 v3.7 M353.7 45.0 v1.5 M354.5 49.4 v4.1 M354.4 55.2 v1.7 M354.8 59.8 v1.7" stroke="#ffd850" stroke-width="1.7" stroke-linecap="round" opacity="0.8"/><rect x="354.3" y="24" width="10" height="53.8" fill="url(#gl)" opacity="0.7"/><path d="M357.5 1.1 L357.4 3.1 L358.1 5.1 L358.1 7.1 L358.0 9.1 L357.7 11.1 L357.8 13.1 L357.4 15.1 L357.3 17.1 L357.8 19.1 L357.8 21.1 L356.8 23.1 L356.1 25.1 L357.7 27.1 L358.0 29.1 L356.1 31.1 L357.4 33.1 L357.1 35.1 L357.2 37.1 L356.8 39.1 L356.8 41.1 L357.0 43.1 L357.0 45.1 L357.3 47.1 L357.7 49.1 L358.3 51.1 L357.5 53.1 L356.8 55.1 L356.7 57.1 L356.9 59.1 L356.6 61.1 L357.0 63.1 L356.6 65.1 L358.7 67.1 L358.8 69.1 L358.5 71.1 L360.0 71.1 L360.6 69.1 L360.3 67.1 L361.1 65.1 L362.2 63.1 L361.1 61.1 L362.4 59.1 L362.5 57.1 L362.7 55.1 L360.6 53.1 L361.2 51.1 L361.2 49.1 L361.6 47.1 L361.2 45.1 L362.1 43.1 L361.8 41.1 L362.8 39.1 L360.6 37.1 L362.3 35.1 L360.6 33.1 L361.6 31.1 L361.1 29.1 L360.1 27.1 L362.1 25.1 L361.5 23.1 L361.1 21.1 L360.3 19.1 L362.0 17.1 L362.1 15.1 L361.0 13.1 L360.8 11.1 L360.2 9.1 L360.8 7.1 L360.4 5.1 L362.0 3.1 L360.4 1.1 Z" fill="url(#st)" opacity="1"/><path d="M359.6 16.7 v3.5 M358.6 22.1 v3.4 M359.8 28.8 v3.7 M359.2 34.6 v2.1 M358.7 39.4 v3.1 M358.9 43.6 v2.7 M359.2 47.8 v2.2 M359.6 52.7 v4.2 M359.5 58.0 v4.1" stroke="#ffd850" stroke-width="1.7" stroke-linecap="round" opacity="0.8"/><rect x="363.5" y="24" width="10" height="52.8" fill="url(#gl)" opacity="0.7"/><path d="M366.6 2.8 L366.1 4.8 L366.9 6.8 L366.6 8.8 L366.8 10.8 L366.8 12.8 L366.4 14.8 L366.8 16.8 L366.4 18.8 L366.5 20.8 L365.9 22.8 L365.6 24.8 L366.0 26.8 L365.4 28.8 L365.5 30.8 L367.1 32.8 L367.2 34.8 L366.4 36.8 L365.6 38.8 L366.7 40.8 L367.2 42.8 L366.8 44.8 L367.2 46.8 L367.0 48.8 L366.4 50.8 L367.2 52.8 L366.8 54.8 L366.1 56.8 L365.9 58.8 L366.2 60.8 L366.2 62.8 L366.7 64.8 L367.1 66.8 L367.7 68.8 L368.6 68.8 L370.3 66.8 L370.5 64.8 L371.3 62.8 L370.4 60.8 L370.2 58.8 L370.4 56.8 L370.2 54.8 L370.6 52.8 L369.6 50.8 L370.1 48.8 L370.8 46.8 L370.8 44.8 L370.0 42.8 L370.1 40.8 L370.6 38.8 L370.2 36.8 L370.8 34.8 L369.5 32.8 L371.2 30.8 L371.5 28.8 L371.5 26.8 L371.6 24.8 L371.3 22.8 L369.5 20.8 L370.9 18.8 L370.5 16.8 L369.7 14.8 L371.2 12.8 L371.1 10.8 L370.6 8.8 L370.9 6.8 L370.0 4.8 L369.5 2.8 Z" fill="url(#st)" opacity="1"/><path d="M369.3 17.0 v4.0 M368.6 23.9 v2.0 M367.9 28.5 v3.3 M368.1 35.2 v3.0 M367.8 41.7 v2.7 M368.0 47.0 v2.3 M368.2 51.1 v3.3 M369.3 57.0 v4.2" stroke="#ffd850" stroke-width="1.7" stroke-linecap="round" opacity="0.8"/><rect x="372.8" y="24" width="10" height="52.0" fill="url(#gl)" opacity="0.7"/><path d="M375.2 3.8 L375.6 5.8 L377.2 7.8 L376.9 9.8 L375.6 11.8 L375.2 13.8 L375.8 15.8 L376.1 17.8 L377.0 19.8 L376.8 21.8 L375.1 23.8 L376.6 25.8 L375.1 27.8 L375.3 29.8 L375.9 31.8 L375.9 33.8 L374.8 35.8 L375.1 37.8 L375.8 39.8 L375.1 41.8 L374.9 43.8 L376.2 45.8 L376.7 47.8 L375.9 49.8 L375.8 51.8 L375.9 53.8 L376.6 55.8 L375.7 57.8 L374.7 59.8 L375.2 61.8 L376.3 63.8 L376.8 65.8 L377.5 67.8 L377.6 69.8 L378.3 69.8 L378.5 67.8 L379.5 65.8 L378.4 63.8 L380.5 61.8 L380.6 59.8 L379.6 57.8 L379.0 55.8 L379.0 53.8 L379.2 51.8 L380.6 49.8 L379.2 47.8 L378.7 45.8 L380.9 43.8 L381.0 41.8 L378.8 39.8 L380.3 37.8 L380.5 35.8 L379.3 33.8 L379.8 31.8 L380.5 29.8 L380.1 27.8 L379.4 25.8 L380.9 23.8 L378.8 21.8 L379.0 19.8 L379.4 17.8 L380.4 15.8 L379.5 13.8 L379.0 11.8 L379.1 9.8 L379.3 7.8 L379.2 5.8 L379.6 3.8 Z" fill="url(#st)" opacity="1"/><path d="M377.4 17.3 v3.7 M378.5 22.4 v4.4 M377.1 30.1 v3.1 M377.1 35.2 v4.2 M378.4 41.1 v1.6 M377.6 44.6 v1.7 M378.0 47.9 v2.8 M377.9 53.3 v1.8 M378.3 56.3 v2.8" stroke="#ffd850" stroke-width="1.7" stroke-linecap="round" opacity="0.8"/><rect x="379.3" y="24" width="10" height="52.0" fill="url(#gl)" opacity="0.7"/><path d="M383.1 3.5 L383.4 5.5 L382.8 7.5 L382.1 9.5 L382.7 11.5 L382.4 13.5 L382.1 15.5 L382.2 17.5 L382.9 19.5 L382.3 21.5 L381.4 23.5 L381.0 25.5 L382.2 27.5 L382.3 29.5 L382.5 31.5 L381.7 33.5 L381.9 35.5 L381.6 37.5 L383.0 39.5 L382.2 41.5 L381.2 43.5 L382.2 45.5 L381.7 47.5 L381.7 49.5 L381.6 51.5 L381.8 53.5 L381.9 55.5 L382.6 57.5 L383.3 59.5 L382.7 61.5 L382.9 63.5 L383.0 65.5 L383.6 67.5 L383.4 69.5 L384.8 69.5 L385.8 67.5 L386.5 65.5 L385.6 63.5 L386.8 61.5 L385.8 59.5 L385.7 57.5 L387.3 55.5 L387.5 53.5 L387.0 51.5 L387.3 49.5 L385.9 47.5 L385.7 45.5 L386.7 43.5 L387.0 41.5 L385.8 39.5 L386.3 37.5 L386.0 35.5 L387.1 33.5 L385.3 31.5 L385.4 29.5 L387.3 27.5 L387.0 25.5 L387.0 23.5 L387.0 21.5 L384.9 19.5 L386.2 17.5 L385.7 15.5 L385.8 13.5 L385.3 11.5 L386.9 9.5 L386.3 7.5 L385.3 5.5 L386.1 3.5 Z" fill="url(#st)" opacity="1"/><path d="M384.6 16.5 v1.7 M383.7 21.5 v3.0 M384.2 27.0 v1.7 M384.8 29.9 v2.8 M384.2 35.5 v4.1 M384.8 41.6 v1.7 M383.7 45.7 v2.7 M383.7 50.6 v1.7 M383.7 53.5 v2.8" stroke="#ffd850" stroke-width="1.7" stroke-linecap="round" opacity="0.8"/><rect x="385.1" y="24" width="10" height="56.9" fill="url(#gl)" opacity="0.7"/><path d="M388.0 2.8 L389.1 4.8 L388.4 6.8 L387.7 8.8 L388.8 10.8 L388.3 12.8 L388.0 14.8 L389.2 16.8 L389.0 18.8 L388.6 20.8 L388.4 22.8 L387.8 24.8 L388.2 26.8 L387.6 28.8 L388.2 30.8 L387.3 32.8 L387.6 34.8 L387.3 36.8 L387.5 38.8 L387.1 40.8 L387.2 42.8 L388.6 44.8 L388.0 46.8 L389.0 48.8 L388.1 50.8 L387.1 52.8 L387.3 54.8 L388.7 56.8 L387.7 58.8 L387.2 60.8 L387.3 62.8 L387.7 64.8 L388.4 66.8 L389.0 68.8 L388.7 70.8 L389.0 72.8 L389.7 74.8 L390.4 74.8 L390.2 72.8 L391.9 70.8 L391.5 68.8 L392.0 66.8 L392.2 64.8 L393.1 62.8 L393.2 60.8 L393.2 58.8 L392.4 56.8 L392.5 54.8 L392.4 52.8 L391.3 50.8 L391.4 48.8 L391.5 46.8 L391.9 44.8 L393.1 42.8 L392.8 40.8 L393.1 38.8 L392.4 36.8 L392.2 34.8 L392.4 32.8 L392.8 30.8 L392.1 28.8 L391.1 26.8 L393.2 24.8 L390.8 22.8 L391.1 20.8 L392.1 18.8 L391.2 16.8 L391.7 14.8 L392.8 12.8 L391.3 10.8 L391.6 8.8 L392.1 6.8 L391.8 4.8 L391.5 2.8 Z" fill="url(#st)" opacity="1"/><path d="M390.1 17.4 v3.1 M390.4 23.0 v3.2 M389.7 28.6 v3.2 M390.7 33.1 v2.8 M390.2 39.2 v2.4 M389.6 43.9 v2.9 M389.7 49.8 v1.8 M389.6 53.2 v2.1 M389.6 56.5 v3.1 M390.3 62.2 v3.3" stroke="#ffd850" stroke-width="1.7" stroke-linecap="round" opacity="0.8"/><rect x="390.0" y="24" width="10" height="52.4" fill="url(#gl)" opacity="0.7"/><path d="M393.5 2.8 L394.0 4.8 L393.6 6.8 L393.2 8.8 L392.7 10.8 L393.4 12.8 L393.2 14.8 L394.2 16.8 L392.6 18.8 L392.7 20.8 L392.7 22.8 L393.9 24.8 L392.6 26.8 L392.3 28.8 L392.5 30.8 L392.7 32.8 L392.6 34.8 L393.8 36.8 L392.4 38.8 L392.0 40.8 L393.5 42.8 L392.8 44.8 L391.8 46.8 L392.2 48.8 L393.4 50.8 L394.0 52.8 L394.3 54.8 L392.1 56.8 L392.6 58.8 L393.2 60.8 L393.6 62.8 L394.1 64.8 L394.0 66.8 L394.2 68.8 L396.0 68.8 L396.1 66.8 L396.0 64.8 L397.2 62.8 L396.5 60.8 L397.3 58.8 L397.8 56.8 L396.6 54.8 L396.7 52.8 L397.6 50.8 L397.2 48.8 L397.5 46.8 L396.5 44.8 L396.5 42.8 L398.0 40.8 L397.4 38.8 L396.5 36.8 L397.5 34.8 L397.4 32.8 L397.7 30.8 L397.6 28.8 L397.6 26.8 L396.3 24.8 L396.5 22.8 L397.6 20.8 L397.4 18.8 L396.7 16.8 L397.3 14.8 L396.4 12.8 L396.9 10.8 L396.9 8.8 L397.3 6.8 L396.5 4.8 L396.8 2.8 Z" fill="url(#st)" opacity="1"/><path d="M395.2 15.3 v4.4 M395.6 21.3 v3.1 M395.0 25.6 v3.4 M394.6 30.8 v2.0 M395.2 34.8 v2.8 M395.0 39.3 v3.4 M394.6 45.6 v3.9 M394.7 53.0 v3.1 M394.9 57.8 v3.6" stroke="#ffd850" stroke-width="1.7" stroke-linecap="round" opacity="0.8"/><rect x="395.8" y="24" width="10" height="56.9" fill="url(#gl)" opacity="0.7"/><path d="M399.8 1.8 L399.1 3.8 L399.0 5.8 L399.1 7.8 L398.7 9.8 L400.2 11.8 L399.4 13.8 L398.4 15.8 L399.5 17.8 L399.5 19.8 L399.5 21.8 L399.2 23.8 L399.0 25.8 L398.0 27.8 L398.1 29.8 L398.1 31.8 L399.1 33.8 L398.3 35.8 L397.9 37.8 L399.3 39.8 L397.9 41.8 L398.1 43.8 L398.9 45.8 L398.9 47.8 L399.4 49.8 L398.8 51.8 L397.6 53.8 L397.7 55.8 L398.4 57.8 L399.6 59.8 L399.0 61.8 L399.5 63.8 L398.9 65.8 L398.5 67.8 L400.0 69.8 L399.4 71.8 L400.2 73.8 L401.4 73.8 L402.4 71.8 L402.0 69.8 L403.0 67.8 L402.2 65.8 L402.2 63.8 L401.7 61.8 L402.3 59.8 L402.6 57.8 L403.8 55.8 L403.7 53.8 L403.3 51.8 L402.6 49.8 L403.1 47.8 L402.1 45.8 L402.7 43.8 L403.3 41.8 L402.3 39.8 L403.7 37.8 L402.5 35.8 L402.3 33.8 L403.8 31.8 L403.7 29.8 L403.9 27.8 L402.5 25.8 L401.5 23.8 L401.4 21.8 L402.8 19.8 L401.5 17.8 L402.8 15.8 L401.3 13.8 L402.4 11.8 L403.4 9.8 L402.6 7.8 L402.6 5.8 L402.3 3.8 L402.5 1.8 Z" fill="url(#st)" opacity="1"/><path d="M401.3 16.8 v4.0 M400.2 22.4 v3.8 M400.3 27.6 v3.0 M401.5 33.0 v2.4 M401.5 37.5 v3.9 M400.8 43.5 v3.8 M401.1 49.4 v1.9 M400.5 54.5 v3.6 M400.6 60.4 v2.6" stroke="#ffd850" stroke-width="1.7" stroke-linecap="round" opacity="0.8"/><rect x="401.6" y="24" width="10" height="53.9" fill="url(#gl)" opacity="0.7"/><path d="M404.5 1.0 L404.3 3.0 L404.8 5.0 L404.7 7.0 L404.5 9.0 L404.5 11.0 L405.5 13.0 L405.1 15.0 L404.2 17.0 L404.2 19.0 L404.3 21.0 L404.7 23.0 L405.8 25.0 L403.5 27.0 L405.7 29.0 L403.7 31.0 L403.6 33.0 L405.3 35.0 L403.7 37.0 L404.8 39.0 L404.3 41.0 L404.7 43.0 L405.1 45.0 L404.3 47.0 L404.3 49.0 L404.1 51.0 L403.9 53.0 L404.3 55.0 L404.2 57.0 L404.2 59.0 L404.6 61.0 L403.9 63.0 L404.7 65.0 L405.0 67.0 L405.7 69.0 L406.3 71.0 L407.7 71.0 L407.1 69.0 L408.0 67.0 L408.6 65.0 L408.8 63.0 L407.8 61.0 L409.1 59.0 L409.6 57.0 L409.9 55.0 L409.4 53.0 L408.9 51.0 L409.0 49.0 L408.8 47.0 L408.1 45.0 L407.7 43.0 L408.9 41.0 L409.0 39.0 L408.9 37.0 L408.5 35.0 L408.8 33.0 L408.6 31.0 L408.0 29.0 L409.4 27.0 L408.2 25.0 L407.8 23.0 L408.1 21.0 L408.3 19.0 L409.0 17.0 L407.7 15.0 L407.7 13.0 L408.8 11.0 L408.5 9.0 L408.4 7.0 L407.9 5.0 L408.4 3.0 L408.0 1.0 Z" fill="url(#st)" opacity="1"/><path d="M406.5 15.3 v2.4 M407.0 19.8 v3.4 M407.0 26.1 v3.9 M406.5 33.5 v2.8 M407.1 38.9 v2.4 M406.6 43.4 v3.2 M406.2 48.5 v1.5 M406.0 52.2 v4.4 M407.1 59.8 v4.4" stroke="#ffd850" stroke-width="1.7" stroke-linecap="round" opacity="0.8"/><rect x="410.2" y="24" width="10" height="57.0" fill="url(#gl)" opacity="0.7"/><path d="M414.0 1.1 L413.0 3.1 L413.3 5.1 L414.0 7.1 L414.0 9.1 L413.8 11.1 L414.0 13.1 L413.8 15.1 L414.3 17.1 L413.6 19.1 L414.1 21.1 L412.7 23.1 L412.1 25.1 L413.5 27.1 L413.4 29.1 L412.3 31.1 L412.2 33.1 L413.9 35.1 L413.2 37.1 L412.8 39.1 L413.1 41.1 L413.5 43.1 L413.5 45.1 L413.3 47.1 L413.3 49.1 L413.7 51.1 L413.1 53.1 L413.9 55.1 L413.7 57.1 L414.0 59.1 L412.4 61.1 L412.3 63.1 L412.9 65.1 L413.4 67.1 L414.0 69.1 L414.7 71.1 L414.7 73.1 L416.1 73.1 L416.3 71.1 L416.2 69.1 L416.8 67.1 L417.2 65.1 L417.4 63.1 L417.3 61.1 L417.3 59.1 L417.4 57.1 L417.3 55.1 L417.7 53.1 L417.5 51.1 L417.6 49.1 L416.1 47.1 L416.4 45.1 L417.1 43.1 L417.2 41.1 L417.2 39.1 L417.9 37.1 L417.0 35.1 L418.1 33.1 L417.2 31.1 L417.9 29.1 L417.0 27.1 L417.7 25.1 L417.8 23.1 L417.2 21.1 L417.2 19.1 L416.3 17.1 L416.1 15.1 L416.7 13.1 L417.2 11.1 L416.2 9.1 L416.4 7.1 L417.7 5.1 L417.7 3.1 L416.0 1.1 Z" fill="url(#st)" opacity="1"/><path d="M415.8 15.7 v4.4 M415.9 22.9 v4.0 M415.3 30.2 v2.7 M414.9 34.2 v2.6 M415.6 39.3 v1.5 M415.2 42.0 v2.8 M414.6 47.9 v3.4 M415.4 54.0 v2.2 M415.1 58.2 v4.4" stroke="#ffd850" stroke-width="1.7" stroke-linecap="round" opacity="0.8"/><rect x="418.5" y="24" width="10" height="57.7" fill="url(#gl)" opacity="0.7"/><path d="M421.8 1.9 L421.9 3.9 L420.7 5.9 L422.3 7.9 L422.0 9.9 L421.1 11.9 L422.2 13.9 L421.8 15.9 L421.7 17.9 L422.5 19.9 L421.1 21.9 L422.4 23.9 L421.8 25.9 L421.2 27.9 L420.9 29.9 L421.2 31.9 L422.6 33.9 L421.9 35.9 L422.1 37.9 L421.0 39.9 L422.6 41.9 L421.1 43.9 L421.5 45.9 L421.2 47.9 L422.2 49.9 L421.7 51.9 L422.1 53.9 L422.4 55.9 L421.2 57.9 L420.9 59.9 L421.7 61.9 L421.9 63.9 L422.6 65.9 L420.9 67.9 L421.4 69.9 L421.8 71.9 L422.9 73.9 L424.3 73.9 L424.4 71.9 L425.7 69.9 L426.2 67.9 L425.3 65.9 L424.2 63.9 L425.1 61.9 L426.2 59.9 L425.3 57.9 L425.1 55.9 L424.5 53.9 L425.7 51.9 L425.1 49.9 L425.8 47.9 L425.9 45.9 L426.9 43.9 L425.2 41.9 L425.3 39.9 L424.8 37.9 L425.7 35.9 L425.0 33.9 L425.5 31.9 L426.1 29.9 L425.4 27.9 L424.4 25.9 L425.1 23.9 L425.3 21.9 L424.5 19.9 L424.5 17.9 L424.6 15.9 L424.2 13.9 L425.1 11.9 L425.4 9.9 L425.2 7.9 L425.5 5.9 L425.4 3.9 L424.7 1.9 Z" fill="url(#st)" opacity="1"/><path d="M423.2 15.6 v3.5 M423.5 21.7 v2.1 M422.8 25.9 v3.1 M423.0 30.6 v3.6 M423.7 36.4 v4.5 M424.2 43.8 v3.8 M423.9 49.5 v2.7 M423.1 53.3 v2.9 M424.1 58.6 v3.7" stroke="#ffd850" stroke-width="1.7" stroke-linecap="round" opacity="0.8"/><rect x="424.3" y="24" width="10" height="50.6" fill="url(#gl)" opacity="0.7"/><path d="M427.8 3.1 L427.4 5.1 L427.5 7.1 L427.8 9.1 L427.2 11.1 L428.4 13.1 L427.2 15.1 L428.5 17.1 L428.1 19.1 L427.3 21.1 L427.3 23.1 L427.4 25.1 L427.1 27.1 L428.1 29.1 L427.3 31.1 L426.5 33.1 L427.5 35.1 L426.6 37.1 L428.2 39.1 L426.8 41.1 L428.2 43.1 L428.1 45.1 L427.1 47.1 L427.9 49.1 L426.4 51.1 L428.0 53.1 L426.7 55.1 L427.3 57.1 L426.6 59.1 L426.7 61.1 L427.0 63.1 L428.3 65.1 L427.8 67.1 L429.8 67.1 L429.9 65.1 L430.7 63.1 L431.3 61.1 L432.7 59.1 L430.5 57.1 L432.2 55.1 L430.4 53.1 L431.5 51.1 L430.5 49.1 L431.8 47.1 L431.1 45.1 L430.9 43.1 L432.0 41.1 L430.8 39.1 L431.7 37.1 L431.6 35.1 L432.4 33.1 L431.2 31.1 L431.4 29.1 L431.8 27.1 L430.3 25.1 L430.6 23.1 L430.6 21.1 L430.5 19.1 L431.0 17.1 L431.7 15.1 L430.4 13.1 L431.5 11.1 L430.2 9.1 L430.9 7.1 L431.2 5.1 L431.7 3.1 Z" fill="url(#st)" opacity="1"/><path d="M429.7 14.6 v3.7 M429.9 20.0 v1.7 M429.4 25.2 v4.2 M429.5 30.6 v3.7 M429.3 37.4 v3.8 M429.2 44.6 v2.9 M429.4 50.1 v3.9" stroke="#ffd850" stroke-width="1.7" stroke-linecap="round" opacity="0.8"/><rect x="429.8" y="24" width="10" height="57.2" fill="url(#gl)" opacity="0.7"/><path d="M432.4 1.8 L433.9 3.8 L433.4 5.8 L433.2 7.8 L432.4 9.8 L432.8 11.8 L433.3 13.8 L433.5 15.8 L432.8 17.8 L434.1 19.8 L433.0 21.8 L431.7 23.8 L433.1 25.8 L433.4 27.8 L432.8 29.8 L432.3 31.8 L433.7 33.8 L432.5 35.8 L433.6 37.8 L432.5 39.8 L432.9 41.8 L432.6 43.8 L432.7 45.8 L433.2 47.8 L433.4 49.8 L433.4 51.8 L432.6 53.8 L433.1 55.8 L432.1 57.8 L432.7 59.8 L432.1 61.8 L432.9 63.8 L432.1 65.8 L432.5 67.8 L433.1 69.8 L433.5 71.8 L434.7 73.8 L435.6 73.8 L435.3 71.8 L436.2 69.8 L437.7 67.8 L437.3 65.8 L435.9 63.8 L436.8 61.8 L436.4 59.8 L438.1 57.8 L437.4 55.8 L437.6 53.8 L436.4 51.8 L436.7 49.8 L436.6 47.8 L437.2 45.8 L436.7 43.8 L436.0 41.8 L436.7 39.8 L436.1 37.8 L437.1 35.8 L436.1 33.8 L436.4 31.8 L435.9 29.8 L436.8 27.8 L436.4 25.8 L437.0 23.8 L437.2 21.8 L436.1 19.8 L436.4 17.8 L436.5 15.8 L435.8 13.8 L436.7 11.8 L436.6 9.8 L436.8 7.8 L437.1 5.8 L435.9 3.8 L436.9 1.8 Z" fill="url(#st)" opacity="1"/><path d="M435.6 15.2 v1.5 M434.7 18.7 v3.8 M434.8 25.9 v1.7 M435.5 30.3 v1.6 M434.1 33.7 v3.5 M435.3 38.4 v1.8 M434.8 43.5 v4.2 M434.8 49.0 v3.8 M434.9 55.8 v3.4 M434.1 60.6 v1.9" stroke="#ffd850" stroke-width="1.7" stroke-linecap="round" opacity="0.8"/><rect x="436.0" y="24" width="10" height="57.6" fill="url(#gl)" opacity="0.7"/><path d="M440.2 1.9 L439.5 3.9 L438.4 5.9 L439.2 7.9 L439.3 9.9 L440.0 11.9 L439.6 13.9 L438.4 15.9 L439.3 17.9 L438.8 19.9 L439.7 21.9 L439.8 23.9 L439.4 25.9 L438.9 27.9 L439.5 29.9 L439.5 31.9 L440.1 33.9 L438.7 35.9 L439.4 37.9 L440.1 39.9 L439.3 41.9 L439.7 43.9 L437.7 45.9 L439.6 47.9 L438.3 49.9 L439.5 51.9 L438.9 53.9 L438.9 55.9 L438.7 57.9 L439.3 59.9 L438.8 61.9 L438.7 63.9 L438.9 65.9 L439.3 67.9 L438.9 69.9 L439.9 71.9 L441.0 73.9 L442.0 73.9 L443.0 71.9 L442.3 69.9 L441.8 67.9 L442.5 65.9 L443.4 63.9 L443.4 61.9 L442.4 59.9 L444.0 57.9 L443.8 55.9 L442.1 53.9 L442.7 51.9 L443.0 49.9 L442.5 47.9 L443.7 45.9 L442.2 43.9 L442.5 41.9 L442.7 39.9 L442.8 37.9 L442.7 35.9 L442.6 33.9 L442.9 31.9 L442.6 29.9 L443.2 27.9 L441.9 25.9 L442.2 23.9 L442.2 21.9 L443.5 19.9 L442.4 17.9 L442.8 15.9 L442.6 13.9 L442.3 11.9 L442.4 9.9 L442.9 7.9 L443.1 5.9 L441.7 3.9 L442.3 1.9 Z" fill="url(#st)" opacity="1"/><path d="M440.8 16.5 v1.5 M440.3 19.9 v2.4 M440.9 24.0 v1.6 M441.7 27.7 v2.2 M441.5 33.1 v3.0 M441.4 38.0 v3.8 M440.8 43.6 v3.7 M440.4 48.8 v2.8 M441.0 54.3 v2.3 M441.7 59.6 v3.3" stroke="#ffd850" stroke-width="1.7" stroke-linecap="round" opacity="0.8"/><rect x="443.2" y="24" width="10" height="55.9" fill="url(#gl)" opacity="0.7"/><path d="M446.6 3.1 L446.5 5.1 L446.5 7.1 L445.6 9.1 L447.0 11.1 L447.0 13.1 L445.8 15.1 L447.1 17.1 L446.8 19.1 L446.2 21.1 L446.2 23.1 L447.0 25.1 L446.0 27.1 L446.1 29.1 L445.5 31.1 L446.5 33.1 L446.1 35.1 L444.7 37.1 L446.4 39.1 L445.9 41.1 L446.6 43.1 L445.6 45.1 L446.3 47.1 L444.9 49.1 L445.0 51.1 L446.1 53.1 L446.3 55.1 L445.6 57.1 L444.8 59.1 L446.1 61.1 L445.5 63.1 L446.1 65.1 L446.7 67.1 L446.6 69.1 L447.1 71.1 L447.8 73.1 L449.2 73.1 L448.4 71.1 L449.5 69.1 L449.2 67.1 L449.5 65.1 L451.4 63.1 L450.8 61.1 L450.8 59.1 L451.4 57.1 L449.7 55.1 L450.8 53.1 L451.0 51.1 L450.7 49.1 L450.9 47.1 L451.3 45.1 L449.8 43.1 L451.3 41.1 L449.5 39.1 L450.8 37.1 L450.9 35.1 L450.5 33.1 L451.6 31.1 L450.3 29.1 L450.6 27.1 L449.6 25.1 L451.1 23.1 L449.5 21.1 L449.9 19.1 L449.6 17.1 L449.6 15.1 L449.8 13.1 L449.4 11.1 L450.4 9.1 L450.0 7.1 L450.2 5.1 L450.6 3.1 Z" fill="url(#st)" opacity="1"/><path d="M449.0 14.5 v3.0 M448.7 19.4 v3.1 M448.6 23.6 v4.1 M448.2 30.6 v2.5 M447.5 36.4 v1.7 M447.6 40.7 v4.4 M448.7 46.6 v2.9 M447.5 51.8 v3.5 M448.6 56.8 v3.3 M447.9 61.3 v1.8" stroke="#ffd850" stroke-width="1.7" stroke-linecap="round" opacity="0.8"/><rect x="450.4" y="24" width="10" height="51.4" fill="url(#gl)" opacity="0.7"/><path d="M454.5 2.0 L453.1 4.0 L452.7 6.0 L453.4 8.0 L453.3 10.0 L453.9 12.0 L452.6 14.0 L453.4 16.0 L453.3 18.0 L453.3 20.0 L454.8 22.0 L453.8 24.0 L452.8 26.0 L453.0 28.0 L454.1 30.0 L454.0 32.0 L453.9 34.0 L453.4 36.0 L453.4 38.0 L453.5 40.0 L454.1 42.0 L453.3 44.0 L453.8 46.0 L452.6 48.0 L452.7 50.0 L452.9 52.0 L453.7 54.0 L454.0 56.0 L453.6 58.0 L453.2 60.0 L452.9 62.0 L454.0 64.0 L455.0 66.0 L455.0 68.0 L456.6 68.0 L456.5 66.0 L456.3 64.0 L456.9 62.0 L457.0 60.0 L456.8 58.0 L456.7 56.0 L457.6 54.0 L457.4 52.0 L458.1 50.0 L458.1 48.0 L456.8 46.0 L457.0 44.0 L457.2 42.0 L457.0 40.0 L458.2 38.0 L457.5 36.0 L456.5 34.0 L456.8 32.0 L456.9 30.0 L458.2 28.0 L457.1 26.0 L456.6 24.0 L456.7 22.0 L457.3 20.0 L456.9 18.0 L456.6 16.0 L457.4 14.0 L457.7 12.0 L457.7 10.0 L457.1 8.0 L457.4 6.0 L457.9 4.0 L456.6 2.0 Z" fill="url(#st)" opacity="1"/><path d="M455.1 14.5 v2.1 M455.9 18.9 v4.0 M454.6 26.0 v1.6 M454.6 29.4 v2.8 M456.0 34.1 v1.9 M454.9 37.5 v2.5 M455.3 43.1 v1.8 M456.2 46.4 v2.2 M455.2 51.5 v3.7" stroke="#ffd850" stroke-width="1.7" stroke-linecap="round" opacity="0.8"/><rect x="462.8" y="24" width="10" height="55.1" fill="url(#gl)" opacity="0.7"/><path d="M466.1 3.9 L466.0 5.9 L466.0 7.9 L465.4 9.9 L465.5 11.9 L466.5 13.9 L465.7 15.9 L465.9 17.9 L467.3 19.9 L466.7 21.9 L465.6 23.9 L466.1 25.9 L465.0 27.9 L464.7 29.9 L465.8 31.9 L466.5 33.9 L467.1 35.9 L465.1 37.9 L466.3 39.9 L465.0 41.9 L466.4 43.9 L465.2 45.9 L466.0 47.9 L465.1 49.9 L464.5 51.9 L464.8 53.9 L465.0 55.9 L466.6 57.9 L464.6 59.9 L465.4 61.9 L466.1 63.9 L465.7 65.9 L466.3 67.9 L466.7 69.9 L466.5 71.9 L468.3 71.9 L469.4 69.9 L468.9 67.9 L470.1 65.9 L470.0 63.9 L471.1 61.9 L470.3 59.9 L469.6 57.9 L470.7 55.9 L470.0 53.9 L470.6 51.9 L470.3 49.9 L469.7 47.9 L469.7 45.9 L469.1 43.9 L470.2 41.9 L468.8 39.9 L470.5 37.9 L469.4 35.9 L468.9 33.9 L469.4 31.9 L470.2 29.9 L470.4 27.9 L470.4 25.9 L470.0 23.9 L469.5 21.9 L469.2 19.9 L470.0 17.9 L470.5 15.9 L468.5 13.9 L470.4 11.9 L469.7 9.9 L470.6 7.9 L469.6 5.9 L468.6 3.9 Z" fill="url(#st)" opacity="1"/><path d="M467.3 16.3 v3.6 M468.2 20.9 v4.2 M467.7 27.9 v2.5 M468.2 33.4 v1.8 M468.5 38.0 v2.9 M467.3 43.5 v4.2 M467.8 49.6 v2.4 M468.5 54.9 v4.5" stroke="#ffd850" stroke-width="1.7" stroke-linecap="round" opacity="0.8"/><rect x="468.0" y="24" width="10" height="55.9" fill="url(#gl)" opacity="0.7"/><path d="M470.5 3.9 L471.4 5.9 L472.3 7.9 L471.2 9.9 L472.0 11.9 L472.0 13.9 L471.0 15.9 L471.4 17.9 L471.1 19.9 L471.3 21.9 L471.5 23.9 L471.5 25.9 L470.2 27.9 L471.2 29.9 L471.5 31.9 L471.7 33.9 L470.3 35.9 L470.3 37.9 L470.3 39.9 L471.3 41.9 L470.7 43.9 L471.8 45.9 L470.0 47.9 L471.6 49.9 L471.0 51.9 L471.8 53.9 L470.4 55.9 L471.1 57.9 L470.0 59.9 L471.6 61.9 L469.8 63.9 L470.6 65.9 L471.8 67.9 L472.2 69.9 L472.2 71.9 L474.0 71.9 L474.0 69.9 L473.8 67.9 L475.1 65.9 L476.5 63.9 L475.3 61.9 L475.5 59.9 L475.6 57.9 L476.1 55.9 L474.4 53.9 L474.2 51.9 L474.7 49.9 L475.6 47.9 L474.3 45.9 L475.3 43.9 L474.8 41.9 L474.9 39.9 L475.4 37.9 L475.3 35.9 L474.4 33.9 L475.0 31.9 L474.7 29.9 L475.5 27.9 L474.0 25.9 L475.3 23.9 L474.7 21.9 L475.1 19.9 L473.7 17.9 L474.8 15.9 L474.9 13.9 L474.1 11.9 L474.2 9.9 L474.5 7.9 L474.5 5.9 L474.7 3.9 Z" fill="url(#st)" opacity="1"/><path d="M472.5 17.6 v1.5 M473.7 20.4 v2.6 M472.5 25.2 v3.9 M472.7 31.0 v3.9 M473.2 37.7 v3.3 M473.8 42.1 v2.6 M473.8 46.6 v2.3 M473.0 51.4 v3.6 M472.6 57.5 v2.7" stroke="#ffd850" stroke-width="1.7" stroke-linecap="round" opacity="0.8"/><rect x="472.1" y="24" width="10" height="55.6" fill="url(#gl)" opacity="0.7"/><path d="M475.6 1.7 L475.9 3.7 L475.1 5.7 L474.7 7.7 L474.9 9.7 L474.9 11.7 L475.6 13.7 L475.6 15.7 L475.4 17.7 L476.4 19.7 L475.1 21.7 L475.4 23.7 L473.8 25.7 L475.8 27.7 L474.5 29.7 L474.2 31.7 L475.0 33.7 L474.7 35.7 L474.8 37.7 L474.5 39.7 L475.3 41.7 L474.4 43.7 L475.5 45.7 L474.6 47.7 L474.4 49.7 L475.7 51.7 L473.8 53.7 L474.1 55.7 L473.9 57.7 L475.1 59.7 L475.7 61.7 L474.2 63.7 L474.0 65.7 L475.7 67.7 L475.9 69.7 L476.4 71.7 L478.6 71.7 L478.8 69.7 L478.3 67.7 L479.4 65.7 L480.3 63.7 L478.8 61.7 L478.7 59.7 L479.4 57.7 L480.0 55.7 L479.4 53.7 L478.9 51.7 L480.3 49.7 L479.6 47.7 L479.5 45.7 L478.9 43.7 L479.8 41.7 L479.5 39.7 L480.0 37.7 L480.4 35.7 L480.1 33.7 L479.7 31.7 L480.5 29.7 L478.7 27.7 L479.4 25.7 L478.2 23.7 L480.0 21.7 L478.7 19.7 L477.9 17.7 L478.5 15.7 L477.8 13.7 L478.4 11.7 L478.3 9.7 L478.9 7.7 L479.4 5.7 L479.3 3.7 L477.8 1.7 Z" fill="url(#st)" opacity="1"/><path d="M477.6 16.1 v3.7 M477.7 22.1 v3.5 M476.3 28.8 v2.0 M476.6 33.5 v3.9 M476.6 40.6 v3.8 M477.3 45.7 v3.5 M476.6 50.6 v4.2 M476.5 57.9 v4.3" stroke="#ffd850" stroke-width="1.7" stroke-linecap="round" opacity="0.8"/><rect x="477.2" y="24" width="10" height="57.3" fill="url(#gl)" opacity="0.7"/><path d="M480.5 2.6 L481.3 4.6 L481.2 6.6 L481.6 8.6 L481.5 10.6 L479.6 12.6 L480.3 14.6 L481.5 16.6 L480.8 18.6 L480.9 20.6 L480.9 22.6 L480.5 24.6 L480.2 26.6 L479.8 28.6 L480.8 30.6 L480.6 32.6 L479.4 34.6 L480.1 36.6 L480.2 38.6 L479.6 40.6 L480.4 42.6 L479.5 44.6 L480.6 46.6 L479.1 48.6 L479.8 50.6 L479.6 52.6 L479.6 54.6 L479.2 56.6 L480.0 58.6 L479.5 60.6 L479.9 62.6 L480.0 64.6 L480.5 66.6 L481.3 68.6 L480.8 70.6 L481.2 72.6 L481.5 74.6 L482.9 74.6 L483.8 72.6 L483.5 70.6 L484.0 68.6 L483.6 66.6 L484.9 64.6 L484.4 62.6 L484.2 60.6 L484.7 58.6 L485.2 56.6 L484.8 54.6 L484.5 52.6 L485.5 50.6 L485.0 48.6 L483.4 46.6 L484.3 44.6 L484.7 42.6 L484.6 40.6 L484.3 38.6 L484.2 36.6 L484.2 34.6 L484.3 32.6 L484.1 30.6 L485.3 28.6 L484.0 26.6 L482.9 24.6 L484.1 22.6 L482.9 20.6 L484.2 18.6 L483.6 16.6 L484.0 14.6 L484.4 12.6 L483.4 10.6 L483.6 8.6 L484.0 6.6 L483.8 4.6 L483.7 2.6 Z" fill="url(#st)" opacity="1"/><path d="M481.5 14.5 v2.6 M482.2 19.1 v2.9 M481.7 25.4 v3.1 M482.2 30.0 v3.5 M482.1 35.5 v3.0 M481.5 41.2 v3.3 M482.3 46.7 v2.3 M482.9 51.1 v3.8 M482.2 57.8 v3.4 M481.7 62.4 v3.7" stroke="#ffd850" stroke-width="1.7" stroke-linecap="round" opacity="0.8"/><rect x="485.5" y="24" width="10" height="52.1" fill="url(#gl)" opacity="0.7"/><path d="M488.3 2.8 L487.6 4.8 L488.7 6.8 L488.8 8.8 L489.1 10.8 L488.8 12.8 L488.5 14.8 L489.6 16.8 L488.8 18.8 L489.2 20.8 L488.0 22.8 L488.2 24.8 L488.5 26.8 L488.8 28.8 L488.8 30.8 L487.9 32.8 L488.1 34.8 L488.0 36.8 L489.4 38.8 L487.9 40.8 L487.9 42.8 L488.0 44.8 L488.6 46.8 L487.6 48.8 L488.8 50.8 L487.7 52.8 L488.2 54.8 L487.8 56.8 L488.5 58.8 L488.7 60.8 L488.2 62.8 L489.1 64.8 L489.5 66.8 L489.4 68.8 L491.0 68.8 L491.4 66.8 L492.4 64.8 L493.1 62.8 L492.4 60.8 L492.0 58.8 L492.5 56.8 L492.4 54.8 L492.5 52.8 L492.6 50.8 L493.3 48.8 L493.3 46.8 L493.0 44.8 L493.0 42.8 L492.8 40.8 L492.4 38.8 L493.7 36.8 L492.7 34.8 L493.2 32.8 L493.2 30.8 L492.8 28.8 L491.9 26.8 L492.8 24.8 L493.6 22.8 L492.7 20.8 L491.4 18.8 L492.3 16.8 L492.6 14.8 L492.0 12.8 L492.8 10.8 L492.5 8.8 L492.0 6.8 L492.4 4.8 L492.8 2.8 Z" fill="url(#st)" opacity="1"/><path d="M491.1 17.0 v4.3 M490.1 22.4 v4.2 M490.3 28.0 v3.4 M490.6 32.8 v3.3 M490.7 38.5 v3.0 M490.8 44.5 v3.7 M490.7 51.2 v2.9 M490.4 55.4 v1.7" stroke="#ffd850" stroke-width="1.7" stroke-linecap="round" opacity="0.8"/><rect x="490.6" y="24" width="10" height="57.7" fill="url(#gl)" opacity="0.7"/><path d="M494.2 1.7 L494.4 3.7 L494.2 5.7 L493.6 7.7 L493.8 9.7 L493.2 11.7 L493.5 13.7 L492.8 15.7 L493.2 17.7 L493.7 19.7 L493.1 21.7 L492.4 23.7 L494.5 25.7 L493.3 27.7 L493.8 29.7 L493.3 31.7 L493.8 33.7 L493.2 35.7 L493.5 37.7 L493.6 39.7 L493.3 41.7 L492.3 43.7 L493.8 45.7 L493.4 47.7 L492.6 49.7 L493.5 51.7 L494.1 53.7 L494.2 55.7 L493.4 57.7 L492.3 59.7 L493.7 61.7 L494.2 63.7 L493.6 65.7 L494.3 67.7 L494.1 69.7 L494.8 71.7 L494.5 73.7 L496.5 73.7 L497.1 71.7 L497.8 69.7 L496.7 67.7 L498.4 65.7 L497.9 63.7 L497.8 61.7 L498.1 59.7 L498.5 57.7 L497.0 55.7 L496.9 53.7 L497.9 51.7 L498.2 49.7 L497.2 47.7 L497.2 45.7 L498.2 43.7 L497.3 41.7 L498.1 39.7 L497.8 37.7 L497.3 35.7 L497.3 33.7 L497.6 31.7 L497.1 29.7 L497.0 27.7 L497.7 25.7 L497.9 23.7 L497.9 21.7 L497.2 19.7 L497.2 17.7 L497.6 15.7 L497.2 13.7 L497.9 11.7 L496.7 9.7 L497.4 7.7 L496.5 5.7 L497.7 3.7 L497.0 1.7 Z" fill="url(#st)" opacity="1"/><path d="M495.0 16.8 v3.0 M496.2 23.1 v4.0 M494.9 28.8 v3.8 M495.6 34.8 v2.4 M495.5 39.2 v3.1 M495.2 45.2 v3.5 M495.3 50.2 v2.2 M496.0 54.5 v3.0 M495.3 61.0 v2.3" stroke="#ffd850" stroke-width="1.7" stroke-linecap="round" opacity="0.8"/><rect x="496.8" y="24" width="10" height="55.1" fill="url(#gl)" opacity="0.7"/><path d="M500.9 1.0 L499.8 3.0 L499.2 5.0 L500.4 7.0 L500.7 9.0 L499.6 11.0 L499.2 13.0 L500.6 15.0 L500.3 17.0 L500.8 19.0 L500.1 21.0 L499.3 23.0 L500.0 25.0 L500.4 27.0 L499.8 29.0 L499.3 31.0 L500.6 33.0 L498.6 35.0 L500.7 37.0 L499.0 39.0 L499.6 41.0 L500.0 43.0 L499.8 45.0 L500.1 47.0 L499.2 49.0 L499.9 51.0 L498.9 53.0 L500.5 55.0 L499.9 57.0 L500.5 59.0 L500.1 61.0 L500.5 63.0 L499.7 65.0 L500.7 67.0 L500.6 69.0 L501.0 71.0 L501.4 73.0 L502.1 73.0 L502.5 71.0 L503.1 69.0 L503.8 67.0 L503.9 65.0 L503.8 63.0 L504.2 61.0 L503.9 59.0 L503.9 57.0 L503.1 55.0 L504.9 53.0 L503.3 51.0 L504.4 49.0 L504.2 47.0 L504.3 45.0 L504.4 43.0 L503.8 41.0 L504.7 39.0 L503.1 37.0 L504.2 35.0 L503.4 33.0 L504.6 31.0 L503.3 29.0 L502.8 27.0 L504.5 25.0 L503.8 23.0 L503.9 21.0 L503.6 19.0 L503.8 17.0 L503.2 15.0 L503.7 13.0 L503.7 11.0 L503.3 9.0 L502.4 7.0 L504.1 5.0 L503.5 3.0 L502.9 1.0 Z" fill="url(#st)" opacity="1"/><path d="M501.6 15.1 v1.7 M501.2 17.9 v3.5 M501.4 24.6 v2.5 M502.2 29.4 v2.4 M501.1 33.6 v4.3 M502.1 39.0 v4.1 M501.6 44.8 v3.4 M501.9 50.5 v2.3 M501.4 55.4 v4.0" stroke="#ffd850" stroke-width="1.7" stroke-linecap="round" opacity="0.8"/><rect x="503.0" y="24" width="10" height="57.0" fill="url(#gl)" opacity="0.7"/><path d="M506.7 2.7 L505.6 4.7 L506.9 6.7 L506.2 8.7 L506.0 10.7 L506.4 12.7 L506.5 14.7 L507.3 16.7 L506.0 18.7 L505.8 20.7 L506.5 22.7 L504.7 24.7 L505.5 26.7 L506.3 28.7 L505.6 30.7 L506.8 32.7 L506.8 34.7 L505.3 36.7 L505.6 38.7 L505.5 40.7 L505.0 42.7 L504.8 44.7 L505.9 46.7 L505.4 48.7 L506.6 50.7 L506.5 52.7 L505.0 54.7 L506.7 56.7 L506.5 58.7 L506.5 60.7 L505.0 62.7 L505.8 64.7 L507.1 66.7 L506.7 68.7 L507.7 70.7 L507.0 72.7 L507.9 74.7 L508.5 74.7 L509.4 72.7 L509.2 70.7 L509.5 68.7 L509.8 66.7 L510.1 64.7 L510.4 62.7 L510.2 60.7 L510.1 58.7 L509.6 56.7 L510.8 54.7 L509.3 52.7 L509.9 50.7 L509.8 48.7 L510.6 46.7 L510.7 44.7 L510.0 42.7 L511.3 40.7 L509.4 38.7 L509.7 36.7 L509.9 34.7 L509.2 32.7 L510.7 30.7 L509.1 28.7 L511.1 26.7 L510.5 24.7 L509.2 22.7 L510.7 20.7 L510.4 18.7 L509.2 16.7 L509.2 14.7 L509.9 12.7 L510.2 10.7 L509.9 8.7 L510.0 6.7 L510.3 4.7 L510.0 2.7 Z" fill="url(#st)" opacity="1"/><path d="M507.5 15.9 v2.9 M508.2 20.2 v4.0 M507.8 27.1 v3.7 M508.2 33.2 v2.4 M507.7 37.7 v3.9 M507.3 43.5 v1.7 M507.9 46.7 v1.6 M507.3 50.2 v4.1 M508.5 57.9 v1.8 M508.2 61.5 v2.2" stroke="#ffd850" stroke-width="1.7" stroke-linecap="round" opacity="0.8"/><rect x="510.2" y="24" width="10" height="51.0" fill="url(#gl)" opacity="0.7"/><path d="M513.4 1.0 L512.5 3.0 L512.9 5.0 L513.3 7.0 L514.0 9.0 L513.8 11.0 L512.8 13.0 L513.1 15.0 L514.0 17.0 L513.1 19.0 L512.3 21.0 L512.7 23.0 L512.7 25.0 L512.2 27.0 L513.1 29.0 L513.5 31.0 L512.7 33.0 L512.6 35.0 L513.8 37.0 L512.3 39.0 L513.5 41.0 L514.4 43.0 L513.2 45.0 L512.8 47.0 L513.2 49.0 L513.6 51.0 L512.4 53.0 L512.9 55.0 L512.0 57.0 L513.9 59.0 L514.1 61.0 L514.2 63.0 L513.6 65.0 L514.7 67.0 L515.7 67.0 L516.3 65.0 L517.1 63.0 L516.4 61.0 L517.2 59.0 L517.7 57.0 L517.9 55.0 L518.5 53.0 L517.5 51.0 L516.6 49.0 L517.7 47.0 L516.9 45.0 L516.7 43.0 L517.6 41.0 L517.4 39.0 L516.6 37.0 L517.8 35.0 L517.7 33.0 L517.4 31.0 L518.0 29.0 L517.3 27.0 L517.7 25.0 L518.2 23.0 L517.3 21.0 L517.0 19.0 L516.9 17.0 L517.4 15.0 L517.5 13.0 L516.4 11.0 L517.2 9.0 L516.7 7.0 L517.2 5.0 L517.4 3.0 L517.4 1.0 Z" fill="url(#st)" opacity="1"/><path d="M515.3 16.2 v2.9 M515.7 20.3 v2.6 M514.7 24.6 v2.1 M515.0 30.0 v4.1 M515.8 35.9 v2.6 M515.8 41.8 v4.4 M515.9 48.8 v1.9 M515.0 52.1 v3.7 M514.8 56.9 v3.5" stroke="#ffd850" stroke-width="1.7" stroke-linecap="round" opacity="0.8"/><rect x="516.4" y="24" width="10" height="55.3" fill="url(#gl)" opacity="0.7"/><path d="M519.3 1.5 L519.8 3.5 L519.6 5.5 L518.7 7.5 L520.0 9.5 L519.7 11.5 L518.8 13.5 L519.3 15.5 L519.8 17.5 L520.2 19.5 L519.3 21.5 L518.1 23.5 L520.0 25.5 L519.0 27.5 L519.5 29.5 L520.1 31.5 L519.1 33.5 L519.6 35.5 L519.8 37.5 L519.9 39.5 L519.7 41.5 L519.2 43.5 L519.0 45.5 L520.1 47.5 L519.2 49.5 L520.4 51.5 L518.6 53.5 L518.7 55.5 L519.5 57.5 L520.0 59.5 L519.5 61.5 L519.6 63.5 L518.7 65.5 L520.2 67.5 L520.4 69.5 L521.1 71.5 L522.2 71.5 L522.4 69.5 L522.5 67.5 L524.2 65.5 L522.5 63.5 L523.2 61.5 L522.6 59.5 L523.0 57.5 L523.2 55.5 L524.6 53.5 L523.2 51.5 L523.5 49.5 L523.1 47.5 L524.5 45.5 L523.7 43.5 L523.2 41.5 L523.8 39.5 L523.9 37.5 L524.0 35.5 L524.3 33.5 L523.6 31.5 L523.7 29.5 L524.2 27.5 L523.0 25.5 L524.2 23.5 L523.4 21.5 L523.5 19.5 L522.6 17.5 L522.8 15.5 L523.0 13.5 L522.5 11.5 L522.5 9.5 L523.4 7.5 L523.8 5.5 L522.6 3.5 L522.6 1.5 Z" fill="url(#st)" opacity="1"/><path d="M522.1 17.7 v3.4 M521.4 24.2 v3.1 M520.7 30.0 v2.6 M521.7 34.7 v4.0 M520.7 39.8 v4.0 M521.1 46.1 v2.0 M521.7 49.7 v3.3 M520.7 56.2 v3.0 M520.8 60.3 v1.8" stroke="#ffd850" stroke-width="1.7" stroke-linecap="round" opacity="0.8"/><rect x="526.7" y="24" width="10" height="51.2" fill="url(#gl)" opacity="0.7"/><path d="M529.3 1.9 L530.3 3.9 L530.5 5.9 L530.7 7.9 L529.4 9.9 L530.4 11.9 L530.0 13.9 L530.0 15.9 L529.9 17.9 L529.6 19.9 L530.0 21.9 L529.9 23.9 L528.9 25.9 L530.8 27.9 L530.1 29.9 L528.5 31.9 L528.7 33.9 L528.9 35.9 L529.7 37.9 L528.9 39.9 L528.9 41.9 L530.4 43.9 L530.2 45.9 L530.4 47.9 L530.1 49.9 L528.6 51.9 L529.1 53.9 L529.7 55.9 L529.0 57.9 L529.7 59.9 L529.6 61.9 L530.3 63.9 L530.9 65.9 L530.6 67.9 L532.0 67.9 L532.6 65.9 L532.7 63.9 L534.1 61.9 L532.9 59.9 L533.7 57.9 L533.0 55.9 L533.3 53.9 L534.7 51.9 L533.0 49.9 L533.2 47.9 L533.1 45.9 L533.6 43.9 L533.8 41.9 L533.9 39.9 L534.1 37.9 L534.2 35.9 L534.2 33.9 L534.3 31.9 L532.9 29.9 L533.1 27.9 L534.4 25.9 L532.9 23.9 L534.0 21.9 L534.4 19.9 L534.5 17.9 L533.8 15.9 L533.4 13.9 L533.2 11.9 L534.1 9.9 L532.7 7.9 L532.9 5.9 L533.7 3.9 L533.8 1.9 Z" fill="url(#st)" opacity="1"/><path d="M531.3 14.6 v3.4 M531.1 20.7 v2.0 M531.8 23.9 v4.1 M531.9 29.0 v2.6 M530.9 33.1 v4.0 M531.2 39.4 v3.2 M531.1 46.1 v3.1 M532.0 52.1 v1.6 M530.9 56.8 v3.4" stroke="#ffd850" stroke-width="1.7" stroke-linecap="round" opacity="0.8"/><rect x="543.2" y="24" width="10" height="56.8" fill="url(#gl)" opacity="0.7"/><path d="M547.3 3.5 L545.6 5.5 L545.4 7.5 L546.5 9.5 L546.9 11.5 L547.7 13.5 L547.1 15.5 L547.1 17.5 L546.4 19.5 L546.2 21.5 L545.9 23.5 L545.7 25.5 L546.7 27.5 L546.4 29.5 L546.6 31.5 L545.6 33.5 L545.7 35.5 L546.0 37.5 L546.8 39.5 L545.4 41.5 L546.1 43.5 L546.1 45.5 L546.7 47.5 L546.2 49.5 L546.2 51.5 L545.9 53.5 L546.5 55.5 L545.4 57.5 L546.7 59.5 L545.7 61.5 L545.9 63.5 L545.5 65.5 L545.7 67.5 L546.5 69.5 L546.9 71.5 L547.6 73.5 L549.1 73.5 L548.6 71.5 L549.5 69.5 L549.9 67.5 L551.9 65.5 L550.7 63.5 L550.0 61.5 L549.7 59.5 L550.3 57.5 L549.8 55.5 L549.8 53.5 L549.5 51.5 L550.9 49.5 L549.7 47.5 L549.4 45.5 L550.6 43.5 L550.9 41.5 L550.1 39.5 L550.8 37.5 L551.7 35.5 L550.3 33.5 L549.5 31.5 L550.5 29.5 L550.7 27.5 L551.0 25.5 L549.9 23.5 L550.4 21.5 L550.0 19.5 L550.1 17.5 L549.6 15.5 L549.7 13.5 L549.5 11.5 L549.3 9.5 L550.0 7.5 L550.0 5.5 L550.0 3.5 Z" fill="url(#st)" opacity="1"/><path d="M549.0 15.1 v2.2 M547.8 19.7 v3.6 M548.2 26.6 v3.7 M547.4 31.6 v2.8 M547.6 35.9 v3.8 M548.9 41.2 v2.5 M548.3 45.2 v2.7 M547.5 49.0 v3.2 M549.0 54.0 v2.5 M547.9 58.6 v2.4 M547.9 62.7 v2.0" stroke="#ffd850" stroke-width="1.7" stroke-linecap="round" opacity="0.8"/><rect x="553.5" y="24" width="10" height="51.8" fill="url(#gl)" opacity="0.7"/><path d="M557.8 2.1 L556.9 4.1 L556.7 6.1 L556.3 8.1 L556.5 10.1 L557.3 12.1 L556.3 14.1 L557.8 16.1 L556.9 18.1 L557.0 20.1 L555.5 22.1 L557.0 24.1 L556.5 26.1 L557.3 28.1 L555.6 30.1 L555.5 32.1 L556.9 34.1 L556.4 36.1 L557.4 38.1 L557.4 40.1 L556.0 42.1 L556.6 44.1 L556.0 46.1 L556.2 48.1 L555.0 50.1 L557.4 52.1 L555.4 54.1 L556.5 56.1 L556.9 58.1 L556.2 60.1 L556.4 62.1 L556.0 64.1 L556.8 66.1 L557.8 68.1 L559.2 68.1 L559.5 66.1 L560.4 64.1 L561.6 62.1 L560.3 60.1 L559.8 58.1 L559.6 56.1 L561.5 54.1 L559.8 52.1 L561.1 50.1 L559.8 48.1 L561.4 46.1 L561.4 44.1 L561.3 42.1 L560.3 40.1 L559.9 38.1 L560.8 36.1 L560.7 34.1 L561.2 32.1 L560.5 30.1 L560.0 28.1 L561.4 26.1 L559.4 24.1 L560.5 22.1 L561.0 20.1 L559.4 18.1 L560.2 16.1 L560.7 14.1 L559.2 12.1 L561.0 10.1 L559.8 8.1 L561.2 6.1 L559.7 4.1 L559.8 2.1 Z" fill="url(#st)" opacity="1"/><path d="M558.1 15.3 v3.9 M558.7 22.1 v3.8 M559.0 27.1 v1.9 M558.8 32.4 v2.2 M557.9 37.5 v4.1 M558.8 43.1 v1.7 M558.0 46.7 v3.6 M558.4 52.9 v2.3 M558.0 57.7 v4.4" stroke="#ffd850" stroke-width="1.7" stroke-linecap="round" opacity="0.8"/><rect x="558.7" y="24" width="10" height="51.4" fill="url(#gl)" opacity="0.7"/><path d="M561.3 1.2 L561.9 3.2 L562.6 5.2 L562.2 7.2 L561.9 9.2 L561.2 11.2 L561.2 13.2 L562.5 15.2 L561.3 17.2 L562.2 19.2 L562.2 21.2 L561.5 23.2 L561.7 25.2 L562.3 27.2 L562.2 29.2 L562.7 31.2 L562.6 33.2 L560.8 35.2 L562.1 37.2 L562.6 39.2 L560.5 41.2 L562.6 43.2 L561.7 45.2 L561.3 47.2 L562.8 49.2 L561.6 51.2 L562.0 53.2 L562.0 55.2 L561.3 57.2 L561.6 59.2 L562.9 61.2 L562.1 63.2 L563.3 65.2 L563.5 67.2 L563.2 69.2 L563.8 69.2 L564.5 67.2 L565.0 65.2 L565.2 63.2 L565.4 61.2 L565.0 59.2 L565.6 57.2 L565.0 55.2 L564.9 53.2 L565.7 51.2 L565.6 49.2 L566.8 47.2 L565.8 45.2 L564.9 43.2 L565.9 41.2 L565.7 39.2 L564.8 37.2 L566.3 35.2 L565.5 33.2 L565.2 31.2 L565.8 29.2 L565.3 27.2 L565.5 25.2 L566.3 23.2 L565.3 21.2 L566.1 19.2 L565.5 17.2 L565.6 15.2 L565.9 13.2 L565.7 11.2 L565.3 9.2 L566.1 7.2 L565.2 5.2 L566.3 3.2 L565.3 1.2 Z" fill="url(#st)" opacity="1"/><path d="M564.0 15.9 v2.9 M563.0 21.2 v3.6 M563.7 26.6 v2.3 M563.1 30.9 v1.8 M563.9 33.9 v1.7 M563.2 39.0 v3.3 M563.4 44.8 v3.0 M563.4 50.8 v2.3 M564.4 54.2 v2.2" stroke="#ffd850" stroke-width="1.7" stroke-linecap="round" opacity="0.8"/><rect x="570.2" y="24" width="10" height="53.9" fill="url(#gl)" opacity="0.7"/><path d="M573.7 3.2 L573.3 5.2 L573.0 7.2 L573.3 9.2 L573.6 11.2 L573.2 13.2 L572.8 15.2 L574.2 17.2 L574.0 19.2 L574.5 21.2 L573.1 23.2 L574.0 25.2 L572.8 27.2 L573.5 29.2 L573.6 31.2 L572.2 33.2 L573.0 35.2 L572.7 37.2 L573.2 39.2 L573.6 41.2 L572.9 43.2 L573.2 45.2 L574.0 47.2 L573.0 49.2 L572.2 51.2 L572.8 53.2 L573.2 55.2 L573.4 57.2 L573.7 59.2 L572.2 61.2 L572.5 63.2 L573.7 65.2 L573.3 67.2 L574.4 69.2 L574.3 71.2 L575.2 71.2 L576.7 69.2 L577.1 67.2 L575.8 65.2 L578.5 63.2 L577.9 61.2 L576.8 59.2 L576.4 57.2 L577.8 55.2 L578.6 53.2 L577.6 51.2 L577.9 49.2 L576.3 47.2 L577.5 45.2 L577.7 43.2 L577.1 41.2 L577.0 39.2 L578.4 37.2 L577.3 35.2 L578.0 33.2 L577.7 31.2 L577.5 29.2 L577.7 27.2 L577.0 25.2 L578.2 23.2 L576.5 21.2 L576.2 19.2 L576.9 17.2 L577.4 15.2 L577.9 13.2 L576.9 11.2 L576.3 9.2 L576.4 7.2 L576.7 5.2 L576.4 3.2 Z" fill="url(#st)" opacity="1"/><path d="M575.0 17.5 v4.3 M575.9 24.4 v1.5 M575.5 28.5 v4.4 M575.2 34.8 v2.0 M575.3 40.0 v3.1 M574.8 44.7 v1.9 M575.9 48.4 v2.9 M575.6 53.0 v2.2 M574.9 58.5 v2.2" stroke="#ffd850" stroke-width="1.7" stroke-linecap="round" opacity="0.8"/><rect x="579.7" y="24" width="10" height="42.7" fill="url(#gl)" opacity="0.35"/><path d="M583.2 1.2 L584.1 3.2 L583.6 5.2 L583.6 7.2 L583.5 9.2 L584.2 11.2 L583.6 13.2 L583.4 15.2 L583.6 17.2 L583.4 19.2 L583.5 21.2 L583.1 23.2 L583.8 25.2 L583.7 27.2 L582.5 29.2 L583.6 31.2 L583.0 33.2 L583.5 35.2 L582.4 37.2 L582.9 39.2 L582.7 41.2 L582.7 43.2 L583.8 45.2 L583.6 47.2 L582.8 49.2 L582.1 51.2 L583.7 53.2 L582.9 55.2 L583.6 57.2 L584.1 59.2 L585.2 59.2 L585.7 57.2 L585.6 55.2 L586.7 53.2 L587.4 51.2 L586.7 49.2 L585.9 47.2 L585.9 45.2 L585.8 43.2 L586.4 41.2 L586.6 39.2 L586.1 37.2 L585.9 35.2 L586.0 33.2 L585.9 31.2 L586.3 29.2 L585.7 27.2 L585.5 25.2 L586.4 23.2 L586.0 21.2 L586.5 19.2 L585.3 17.2 L585.3 15.2 L585.0 13.2 L585.7 11.2 L586.8 9.2 L586.3 7.2 L585.9 5.2 L585.9 3.2 L585.7 1.2 Z" fill="url(#st)" opacity="0.9"/><path d="M584.7 24.3 v4.3 M584.8 30.3 v3.1 M584.6 35.4 v3.9 M585.0 42.7 v3.8 M585.5 47.9 v3.6" stroke="#ffd850" stroke-width="1.3" stroke-linecap="round" opacity="0.55"/><rect x="586.0" y="24" width="10" height="44.3" fill="url(#gl)" opacity="0.35"/><path d="M590.5 1.1 L589.6 3.1 L589.7 5.1 L589.6 7.1 L589.1 9.1 L590.0 11.1 L590.3 13.1 L588.9 15.1 L589.8 17.1 L589.8 19.1 L589.7 21.1 L589.6 23.1 L589.4 25.1 L589.3 27.1 L589.7 29.1 L589.7 31.1 L589.5 33.1 L589.5 35.1 L589.7 37.1 L589.2 39.1 L589.9 41.1 L590.1 43.1 L589.8 45.1 L589.6 47.1 L589.2 49.1 L589.9 51.1 L588.8 53.1 L589.4 55.1 L589.0 57.1 L590.2 59.1 L590.0 61.1 L591.5 61.1 L592.8 59.1 L593.1 57.1 L592.1 55.1 L594.2 53.1 L591.7 51.1 L592.1 49.1 L591.7 47.1 L592.2 45.1 L592.7 43.1 L592.6 41.1 L591.9 39.1 L591.5 37.1 L591.5 35.1 L592.9 33.1 L592.9 31.1 L592.3 29.1 L592.8 27.1 L592.3 25.1 L592.3 23.1 L592.4 21.1 L593.1 19.1 L592.7 17.1 L592.2 15.1 L591.8 13.1 L592.3 11.1 L592.2 9.1 L592.5 7.1 L592.4 5.1 L592.8 3.1 L591.8 1.1 Z" fill="url(#st)" opacity="0.9"/><path d="M590.2 27.9 v4.2 M590.6 35.5 v3.4 M591.4 41.2 v2.4 M591.6 45.6 v1.8 M591.3 49.1 v2.0" stroke="#ffd850" stroke-width="1.3" stroke-linecap="round" opacity="0.55"/><rect x="599.0" y="24" width="10" height="45.6" fill="url(#gl)" opacity="0.35"/><path d="M603.7 2.8 L602.1 4.8 L602.5 6.8 L602.7 8.8 L603.0 10.8 L603.5 12.8 L602.4 14.8 L603.1 16.8 L602.7 18.8 L603.5 20.8 L602.8 22.8 L601.8 24.8 L603.0 26.8 L602.9 28.8 L603.4 30.8 L603.0 32.8 L603.3 34.8 L603.0 36.8 L603.3 38.8 L603.2 40.8 L602.8 42.8 L601.8 44.8 L602.6 46.8 L602.6 48.8 L602.2 50.8 L603.0 52.8 L601.8 54.8 L601.8 56.8 L602.6 58.8 L603.3 60.8 L603.6 62.8 L604.8 62.8 L605.6 60.8 L605.6 58.8 L606.0 56.8 L605.7 54.8 L604.5 52.8 L604.9 50.8 L604.8 48.8 L605.3 46.8 L605.4 44.8 L604.8 42.8 L605.6 40.8 L604.8 38.8 L605.1 36.8 L605.1 34.8 L604.6 32.8 L604.9 30.8 L604.9 28.8 L605.0 26.8 L605.3 24.8 L604.6 22.8 L605.4 20.8 L605.2 18.8 L605.9 16.8 L605.8 14.8 L605.2 12.8 L604.7 10.8 L605.8 8.8 L605.8 6.8 L605.0 4.8 L605.2 2.8 Z" fill="url(#st)" opacity="0.9"/><path d="M604.5 26.2 v1.7 M604.4 30.3 v1.6 M603.9 34.1 v4.3 M604.7 40.7 v4.2 M603.9 47.8 v2.8" stroke="#ffd850" stroke-width="1.3" stroke-linecap="round" opacity="0.55"/><rect x="602.8" y="24" width="10" height="45.7" fill="url(#gl)" opacity="0.35"/><path d="M606.4 3.7 L606.3 5.7 L606.6 7.7 L605.6 9.7 L606.6 11.7 L606.4 13.7 L606.4 15.7 L606.7 17.7 L606.7 19.7 L606.0 21.7 L606.5 23.7 L606.7 25.7 L606.3 27.7 L606.4 29.7 L607.2 31.7 L605.8 33.7 L606.3 35.7 L606.3 37.7 L606.6 39.7 L605.8 41.7 L606.9 43.7 L605.9 45.7 L606.8 47.7 L606.0 49.7 L606.4 51.7 L606.2 53.7 L605.1 55.7 L606.0 57.7 L606.6 59.7 L606.6 61.7 L608.0 61.7 L609.1 59.7 L609.8 57.7 L609.9 55.7 L609.6 53.7 L608.7 51.7 L609.9 49.7 L609.2 47.7 L609.5 45.7 L609.3 43.7 L609.2 41.7 L608.3 39.7 L610.1 37.7 L610.0 35.7 L609.2 33.7 L609.1 31.7 L609.9 29.7 L610.2 27.7 L608.6 25.7 L609.9 23.7 L608.6 21.7 L609.4 19.7 L609.4 17.7 L608.4 15.7 L609.5 13.7 L608.4 11.7 L609.0 9.7 L608.5 7.7 L608.8 5.7 L609.3 3.7 Z" fill="url(#st)" opacity="0.9"/><path d="M608.4 26.2 v3.5 M607.3 33.1 v3.4 M608.5 39.7 v2.7 M607.1 45.8 v1.8 M607.8 48.7 v3.5" stroke="#ffd850" stroke-width="1.3" stroke-linecap="round" opacity="0.55"/><rect x="623.0" y="24" width="10" height="46.7" fill="url(#gl)" opacity="0.35"/><path d="M626.9 2.0 L626.3 4.0 L627.4 6.0 L626.7 8.0 L626.6 10.0 L627.0 12.0 L626.7 14.0 L626.0 16.0 L626.2 18.0 L626.1 20.0 L627.1 22.0 L626.4 24.0 L626.1 26.0 L626.5 28.0 L626.8 30.0 L626.6 32.0 L626.5 34.0 L626.5 36.0 L625.9 38.0 L626.6 40.0 L626.7 42.0 L626.5 44.0 L626.7 46.0 L626.9 48.0 L626.7 50.0 L626.7 52.0 L626.0 54.0 L625.8 56.0 L625.5 58.0 L626.6 60.0 L627.7 62.0 L627.6 64.0 L628.4 64.0 L628.8 62.0 L630.3 60.0 L630.5 58.0 L630.1 56.0 L629.7 54.0 L629.7 52.0 L629.1 50.0 L629.3 48.0 L630.3 46.0 L628.5 44.0 L630.1 42.0 L629.4 40.0 L629.3 38.0 L630.4 36.0 L629.8 34.0 L629.2 32.0 L629.4 30.0 L629.6 28.0 L629.5 26.0 L630.2 24.0 L629.5 22.0 L629.1 20.0 L628.9 18.0 L629.1 16.0 L629.3 14.0 L628.3 12.0 L629.8 10.0 L630.2 8.0 L628.9 6.0 L629.2 4.0 L628.5 2.0 Z" fill="url(#st)" opacity="0.9"/><path d="M628.1 26.5 v1.7 M628.1 31.0 v2.5 M627.6 35.5 v2.0 M628.1 40.8 v3.4 M628.4 47.3 v4.0" stroke="#ffd850" stroke-width="1.3" stroke-linecap="round" opacity="0.55"/><rect x="628.7" y="24" width="10" height="44.6" fill="url(#gl)" opacity="0.35"/><path d="M633.4 2.6 L632.8 4.6 L631.9 6.6 L631.6 8.6 L632.8 10.6 L632.6 12.6 L632.4 14.6 L633.3 16.6 L633.0 18.6 L632.2 20.6 L633.2 22.6 L631.6 24.6 L632.0 26.6 L633.0 28.6 L632.5 30.6 L631.8 32.6 L632.0 34.6 L632.4 36.6 L632.4 38.6 L632.0 40.6 L631.6 42.6 L632.1 44.6 L631.7 46.6 L632.7 48.6 L632.3 50.6 L631.5 52.6 L632.9 54.6 L631.5 56.6 L631.8 58.6 L632.7 60.6 L634.3 60.6 L634.9 58.6 L635.4 56.6 L635.3 54.6 L636.1 52.6 L636.0 50.6 L634.4 48.6 L635.1 46.6 L634.5 44.6 L635.3 42.6 L634.5 40.6 L634.2 38.6 L634.6 36.6 L634.4 34.6 L635.0 32.6 L634.5 30.6 L634.6 28.6 L635.9 26.6 L635.5 24.6 L635.2 22.6 L634.3 20.6 L634.4 18.6 L635.1 16.6 L635.6 14.6 L635.3 12.6 L634.5 10.6 L634.9 8.6 L635.1 6.6 L634.3 4.6 L634.9 2.6 Z" fill="url(#st)" opacity="0.9"/><path d="M633.8 26.3 v2.3 M633.1 30.2 v1.5 M633.7 34.7 v2.8 M633.2 40.2 v2.3 M634.1 44.5 v3.8 M633.3 50.4 v3.3" stroke="#ffd850" stroke-width="1.3" stroke-linecap="round" opacity="0.55"/><rect x="636.5" y="24" width="10" height="48.4" fill="url(#gl)" opacity="0.35"/><path d="M640.5 2.9 L640.1 4.9 L639.8 6.9 L639.8 8.9 L639.9 10.9 L640.8 12.9 L640.5 14.9 L640.4 16.9 L640.3 18.9 L640.2 20.9 L640.6 22.9 L639.9 24.9 L640.6 26.9 L640.5 28.9 L639.5 30.9 L640.6 32.9 L639.8 34.9 L639.8 36.9 L640.0 38.9 L640.0 40.9 L639.9 42.9 L639.3 44.9 L639.4 46.9 L640.3 48.9 L640.5 50.9 L641.1 52.9 L641.0 54.9 L638.7 56.9 L638.9 58.9 L639.5 60.9 L640.4 62.9 L640.9 64.9 L642.0 64.9 L643.1 62.9 L642.7 60.9 L643.5 58.9 L644.8 56.9 L642.7 54.9 L642.7 52.9 L642.7 50.9 L642.9 48.9 L643.3 46.9 L642.9 44.9 L642.7 42.9 L642.9 40.9 L643.7 38.9 L643.5 36.9 L642.8 34.9 L643.4 32.9 L642.5 30.9 L643.1 28.9 L643.3 26.9 L642.1 24.9 L642.5 22.9 L643.0 20.9 L643.1 18.9 L642.9 16.9 L641.9 14.9 L643.0 12.9 L642.4 10.9 L642.8 8.9 L642.8 6.9 L643.0 4.9 L642.6 2.9 Z" fill="url(#st)" opacity="0.9"/><path d="M641.8 24.4 v3.5 M642.1 29.0 v3.3 M641.1 33.8 v4.2 M641.9 39.1 v1.8 M641.4 42.3 v4.1 M641.2 47.6 v3.9 M641.2 52.9 v1.5" stroke="#ffd850" stroke-width="1.3" stroke-linecap="round" opacity="0.55"/><rect x="645.5" y="24" width="10" height="46.7" fill="url(#gl)" opacity="0.35"/><path d="M649.3 2.5 L648.8 4.5 L649.5 6.5 L649.4 8.5 L649.3 10.5 L649.8 12.5 L648.5 14.5 L648.9 16.5 L649.2 18.5 L648.6 20.5 L648.8 22.5 L648.3 24.5 L648.5 26.5 L649.0 28.5 L649.8 30.5 L649.2 32.5 L648.6 34.5 L649.3 36.5 L648.3 38.5 L649.1 40.5 L648.9 42.5 L649.8 44.5 L649.0 46.5 L648.5 48.5 L649.4 50.5 L649.2 52.5 L648.4 54.5 L648.6 56.5 L648.5 58.5 L649.8 60.5 L650.1 62.5 L649.9 64.5 L651.1 64.5 L651.6 62.5 L652.0 60.5 L651.7 58.5 L652.4 56.5 L652.1 54.5 L652.8 52.5 L651.8 50.5 L651.9 48.5 L651.9 46.5 L651.5 44.5 L652.3 42.5 L652.5 40.5 L651.8 38.5 L652.6 36.5 L651.9 34.5 L651.5 32.5 L652.1 30.5 L651.1 28.5 L652.0 26.5 L651.9 24.5 L651.4 22.5 L652.1 20.5 L651.3 18.5 L651.6 16.5 L651.9 14.5 L652.2 12.5 L651.1 10.5 L652.0 8.5 L652.3 6.5 L652.0 4.5 L650.8 2.5 Z" fill="url(#st)" opacity="0.9"/><path d="M649.7 27.7 v4.4 M650.2 34.6 v4.4 M651.1 40.8 v2.0 M650.7 45.2 v3.3 M650.6 51.7 v3.1" stroke="#ffd850" stroke-width="1.3" stroke-linecap="round" opacity="0.55"/><rect x="650.0" y="24" width="10" height="49.8" fill="url(#gl)" opacity="0.35"/><path d="M653.6 2.0 L654.4 4.0 L654.3 6.0 L654.0 8.0 L653.8 10.0 L653.5 12.0 L654.3 14.0 L654.6 16.0 L653.6 18.0 L653.4 20.0 L653.3 22.0 L654.5 24.0 L653.6 26.0 L653.1 28.0 L654.4 30.0 L653.3 32.0 L653.0 34.0 L654.0 36.0 L653.0 38.0 L652.8 40.0 L653.9 42.0 L653.6 44.0 L654.0 46.0 L653.9 48.0 L653.8 50.0 L653.8 52.0 L653.5 54.0 L654.1 56.0 L653.5 58.0 L652.4 60.0 L653.3 62.0 L654.1 64.0 L654.1 66.0 L655.4 66.0 L656.5 64.0 L656.0 62.0 L657.6 60.0 L657.1 58.0 L656.8 56.0 L656.1 54.0 L655.9 52.0 L657.0 50.0 L656.0 48.0 L656.6 46.0 L656.5 44.0 L656.1 42.0 L656.6 40.0 L656.6 38.0 L656.6 36.0 L656.6 34.0 L656.3 32.0 L656.3 30.0 L656.0 28.0 L656.3 26.0 L656.4 24.0 L655.7 22.0 L656.4 20.0 L655.8 18.0 L656.1 16.0 L656.2 14.0 L655.8 12.0 L655.6 10.0 L655.8 8.0 L655.7 6.0 L655.9 4.0 L656.4 2.0 Z" fill="url(#st)" opacity="0.9"/><path d="M655.1 27.3 v2.0 M654.7 32.2 v3.0 M655.3 37.7 v2.5 M655.4 43.2 v3.9 M655.3 48.4 v2.3 M654.9 53.3 v4.2" stroke="#ffd850" stroke-width="1.3" stroke-linecap="round" opacity="0.55"/><rect x="656.8" y="24" width="10" height="42.4" fill="url(#gl)" opacity="0.35"/><path d="M660.4 1.2 L661.5 3.2 L660.9 5.2 L660.5 7.2 L661.4 9.2 L661.0 11.2 L660.8 13.2 L659.7 15.2 L660.6 17.2 L660.2 19.2 L660.5 21.2 L660.1 23.2 L661.1 25.2 L660.5 27.2 L660.2 29.2 L659.8 31.2 L660.1 33.2 L660.3 35.2 L660.7 37.2 L660.5 39.2 L660.5 41.2 L661.0 43.2 L660.0 45.2 L660.5 47.2 L659.9 49.2 L659.9 51.2 L659.9 53.2 L660.0 55.2 L660.5 57.2 L660.8 59.2 L662.7 59.2 L662.3 57.2 L662.9 55.2 L664.2 53.2 L663.3 51.2 L662.9 49.2 L662.6 47.2 L663.5 45.2 L662.9 43.2 L663.5 41.2 L663.1 39.2 L662.6 37.2 L664.2 35.2 L663.4 33.2 L663.5 31.2 L663.4 29.2 L662.5 27.2 L663.4 25.2 L662.9 23.2 L662.4 21.2 L663.6 19.2 L663.2 17.2 L663.1 15.2 L663.1 13.2 L663.3 11.2 L663.2 9.2 L663.5 7.2 L662.4 5.2 L662.9 3.2 L662.9 1.2 Z" fill="url(#st)" opacity="0.9"/><path d="M661.4 27.4 v2.2 M662.1 30.9 v2.7 M661.2 36.0 v2.5 M661.3 40.1 v3.8 M661.3 47.4 v4.0" stroke="#ffd850" stroke-width="1.3" stroke-linecap="round" opacity="0.55"/><rect x="669.1" y="24" width="10" height="42.3" fill="url(#gl)" opacity="0.35"/><path d="M672.7 3.5 L673.1 5.5 L673.7 7.5 L672.1 9.5 L673.5 11.5 L672.9 13.5 L673.1 15.5 L672.1 17.5 L672.8 19.5 L673.1 21.5 L672.4 23.5 L673.0 25.5 L672.3 27.5 L673.0 29.5 L672.5 31.5 L672.6 33.5 L672.7 35.5 L673.0 37.5 L673.3 39.5 L672.0 41.5 L673.1 43.5 L673.5 45.5 L672.9 47.5 L673.1 49.5 L671.3 51.5 L671.5 53.5 L672.9 55.5 L673.5 57.5 L673.7 59.5 L675.1 59.5 L675.1 57.5 L675.8 55.5 L676.5 53.5 L676.3 51.5 L674.9 49.5 L675.6 47.5 L675.7 45.5 L676.0 43.5 L675.8 41.5 L675.8 39.5 L675.8 37.5 L675.3 35.5 L676.5 33.5 L674.7 31.5 L674.6 29.5 L675.2 27.5 L675.0 25.5 L676.3 23.5 L674.7 21.5 L674.4 19.5 L675.5 17.5 L676.1 15.5 L674.6 13.5 L675.4 11.5 L675.2 9.5 L675.0 7.5 L675.3 5.5 L675.5 3.5 Z" fill="url(#st)" opacity="0.9"/><path d="M674.2 25.3 v2.5 M674.2 29.9 v2.9 M673.6 35.7 v1.9 M673.6 39.0 v3.1 M674.0 45.3 v2.1" stroke="#ffd850" stroke-width="1.3" stroke-linecap="round" opacity="0.55"/><rect x="696.1" y="24" width="10" height="42.6" fill="url(#gl)" opacity="0.35"/><path d="M700.4 1.8 L700.5 3.8 L700.1 5.8 L699.7 7.8 L699.7 9.8 L700.1 11.8 L700.5 13.8 L699.6 15.8 L699.8 17.8 L700.3 19.8 L700.2 21.8 L699.8 23.8 L699.1 25.8 L699.9 27.8 L699.7 29.8 L699.2 31.8 L699.2 33.8 L699.6 35.8 L699.8 37.8 L699.6 39.8 L699.8 41.8 L699.8 43.8 L700.4 45.8 L700.2 47.8 L699.8 49.8 L699.5 51.8 L699.1 53.8 L698.9 55.8 L700.4 57.8 L701.0 59.8 L701.7 59.8 L702.7 57.8 L702.7 55.8 L702.4 53.8 L703.2 51.8 L702.6 49.8 L701.7 47.8 L702.8 45.8 L702.1 43.8 L702.0 41.8 L703.4 39.8 L701.8 37.8 L702.5 35.8 L702.0 33.8 L702.6 31.8 L701.9 29.8 L703.1 27.8 L702.8 25.8 L701.5 23.8 L702.6 21.8 L701.8 19.8 L701.9 17.8 L702.3 15.8 L702.6 13.8 L702.6 11.8 L701.7 9.8 L702.1 7.8 L701.7 5.8 L702.6 3.8 L702.2 1.8 Z" fill="url(#st)" opacity="0.9"/><path d="M701.8 27.1 v2.5 M701.9 31.0 v3.1 M700.9 36.4 v4.1 M701.4 43.1 v3.0" stroke="#ffd850" stroke-width="1.3" stroke-linecap="round" opacity="0.55"/><rect x="711.8" y="24" width="10" height="48.1" fill="url(#gl)" opacity="0.35"/><path d="M716.1 3.2 L715.5 5.2 L716.0 7.2 L716.6 9.2 L715.2 11.2 L715.3 13.2 L715.8 15.2 L715.7 17.2 L715.5 19.2 L715.2 21.2 L716.4 23.2 L715.2 25.2 L716.0 27.2 L715.6 29.2 L715.5 31.2 L716.3 33.2 L715.4 35.2 L715.7 37.2 L714.9 39.2 L715.8 41.2 L715.6 43.2 L715.6 45.2 L715.8 47.2 L715.3 49.2 L715.7 51.2 L715.8 53.2 L716.2 55.2 L715.3 57.2 L715.8 59.2 L715.0 61.2 L715.9 63.2 L716.8 65.2 L717.6 65.2 L717.1 63.2 L719.0 61.2 L718.2 59.2 L718.2 57.2 L717.8 55.2 L717.4 53.2 L717.7 51.2 L717.6 49.2 L717.6 47.2 L717.4 45.2 L717.5 43.2 L717.7 41.2 L718.2 39.2 L717.6 37.2 L718.6 35.2 L717.8 33.2 L718.9 31.2 L717.6 29.2 L717.9 27.2 L719.1 25.2 L718.0 23.2 L717.7 21.2 L718.2 19.2 L718.9 17.2 L718.3 15.2 L717.9 13.2 L717.9 11.2 L717.9 9.2 L717.7 7.2 L718.6 5.2 L717.8 3.2 Z" fill="url(#st)" opacity="0.9"/><path d="M717.2 24.3 v3.8 M716.7 31.2 v2.8 M716.8 35.9 v3.5 M717.3 42.1 v2.8 M716.7 47.4 v2.3 M716.1 51.3 v4.2" stroke="#ffd850" stroke-width="1.3" stroke-linecap="round" opacity="0.55"/><rect x="723.0" y="24" width="10" height="46.9" fill="url(#gl)" opacity="0.35"/><path d="M727.4 2.3 L727.0 4.3 L726.6 6.3 L725.8 8.3 L726.6 10.3 L726.4 12.3 L726.7 14.3 L726.6 16.3 L727.2 18.3 L727.0 20.3 L726.3 22.3 L727.1 24.3 L727.4 26.3 L726.2 28.3 L727.3 30.3 L726.3 32.3 L726.4 34.3 L727.5 36.3 L726.7 38.3 L726.4 40.3 L726.8 42.3 L726.2 44.3 L727.1 46.3 L726.5 48.3 L727.5 50.3 L726.5 52.3 L726.5 54.3 L726.9 56.3 L725.6 58.3 L726.3 60.3 L727.4 62.3 L727.2 64.3 L727.9 64.3 L728.8 62.3 L729.0 60.3 L729.9 58.3 L730.0 56.3 L729.8 54.3 L729.9 52.3 L729.1 50.3 L730.3 48.3 L729.6 46.3 L730.0 44.3 L729.1 42.3 L729.1 40.3 L728.7 38.3 L729.2 36.3 L729.5 34.3 L728.9 32.3 L729.5 30.3 L729.5 28.3 L729.3 26.3 L729.0 24.3 L730.0 22.3 L730.0 20.3 L728.9 18.3 L729.1 16.3 L729.2 14.3 L729.8 12.3 L729.8 10.3 L729.3 8.3 L728.6 6.3 L728.6 4.3 L728.9 2.3 Z" fill="url(#st)" opacity="0.9"/><path d="M728.7 26.5 v3.3 M727.4 30.9 v2.4 M727.4 36.6 v3.9 M728.2 42.7 v3.6 M727.5 48.5 v3.1 M728.0 52.7 v2.0" stroke="#ffd850" stroke-width="1.3" stroke-linecap="round" opacity="0.55"/><rect x="757.9" y="24" width="10" height="44.3" fill="url(#gl)" opacity="0.35"/><path d="M762.4 3.7 L761.8 5.7 L762.2 7.7 L761.9 9.7 L761.2 11.7 L761.5 13.7 L761.4 15.7 L761.6 17.7 L762.1 19.7 L761.3 21.7 L762.1 23.7 L761.4 25.7 L761.6 27.7 L761.3 29.7 L761.1 31.7 L761.2 33.7 L761.6 35.7 L761.6 37.7 L761.5 39.7 L761.4 41.7 L761.4 43.7 L761.4 45.7 L762.2 47.7 L760.6 49.7 L761.5 51.7 L761.8 53.7 L760.2 55.7 L761.8 57.7 L761.5 59.7 L762.2 61.7 L763.3 61.7 L764.0 59.7 L763.2 57.7 L764.9 55.7 L764.9 53.7 L763.3 51.7 L764.4 49.7 L763.9 47.7 L765.2 45.7 L764.8 43.7 L764.3 41.7 L763.5 39.7 L763.7 37.7 L763.9 35.7 L764.0 33.7 L764.8 31.7 L764.7 29.7 L765.1 27.7 L764.4 25.7 L763.9 23.7 L764.2 21.7 L763.8 19.7 L763.9 17.7 L764.1 15.7 L763.7 13.7 L764.2 11.7 L764.7 9.7 L764.5 7.7 L764.5 5.7 L763.7 3.7 Z" fill="url(#st)" opacity="0.9"/><path d="M763.6 25.7 v3.4 M763.2 30.3 v2.8 M762.5 36.0 v3.4 M763.0 40.4 v2.2 M763.1 45.9 v3.3" stroke="#ffd850" stroke-width="1.3" stroke-linecap="round" opacity="0.55"/><rect x="765.7" y="24" width="10" height="49.8" fill="url(#gl)" opacity="0.35"/><path d="M769.7 3.3 L769.2 5.3 L768.6 7.3 L770.0 9.3 L769.3 11.3 L769.7 13.3 L769.4 15.3 L769.8 17.3 L769.4 19.3 L769.8 21.3 L769.5 23.3 L768.5 25.3 L768.9 27.3 L769.4 29.3 L768.7 31.3 L769.2 33.3 L769.2 35.3 L769.3 37.3 L769.0 39.3 L770.2 41.3 L769.0 43.3 L769.0 45.3 L769.2 47.3 L769.5 49.3 L769.3 51.3 L769.2 53.3 L768.8 55.3 L769.5 57.3 L768.1 59.3 L769.2 61.3 L770.1 63.3 L769.3 65.3 L770.6 67.3 L771.5 67.3 L771.4 65.3 L771.6 63.3 L771.5 61.3 L773.7 59.3 L771.7 57.3 L772.1 55.3 L771.8 53.3 L771.5 51.3 L772.6 49.3 L771.3 47.3 L771.8 45.3 L772.4 43.3 L772.1 41.3 L772.3 39.3 L772.2 37.3 L772.7 35.3 L771.6 33.3 L772.1 31.3 L772.6 29.3 L772.0 27.3 L772.0 25.3 L772.7 23.3 L772.5 21.3 L771.5 19.3 L772.5 17.3 L772.3 15.3 L771.5 13.3 L771.9 11.3 L772.2 9.3 L771.9 7.3 L771.7 5.3 L772.0 3.3 Z" fill="url(#st)" opacity="0.9"/><path d="M771.2 24.2 v3.7 M771.1 30.5 v2.5 M770.9 36.3 v3.2 M771.5 42.0 v4.3 M770.1 48.9 v3.0 M771.0 54.1 v2.8" stroke="#ffd850" stroke-width="1.3" stroke-linecap="round" opacity="0.55"/><rect x="771.4" y="24" width="10" height="43.6" fill="url(#gl)" opacity="0.35"/><path d="M775.0 1.7 L774.6 3.7 L774.9 5.7 L775.4 7.7 L775.9 9.7 L775.6 11.7 L776.0 13.7 L776.0 15.7 L775.3 17.7 L775.8 19.7 L775.8 21.7 L774.8 23.7 L775.1 25.7 L776.0 27.7 L774.9 29.7 L774.4 31.7 L775.4 33.7 L774.7 35.7 L775.8 37.7 L774.6 39.7 L775.2 41.7 L775.4 43.7 L775.3 45.7 L774.3 47.7 L775.5 49.7 L774.1 51.7 L775.3 53.7 L774.0 55.7 L775.4 57.7 L775.1 59.7 L776.8 59.7 L777.1 57.7 L778.6 55.7 L777.4 53.7 L778.2 51.7 L777.5 49.7 L777.8 47.7 L778.1 45.7 L777.9 43.7 L778.3 41.7 L778.1 39.7 L777.5 37.7 L778.4 35.7 L777.2 33.7 L778.1 31.7 L778.5 29.7 L777.6 27.7 L778.1 25.7 L777.6 23.7 L777.3 21.7 L777.3 19.7 L777.3 17.7 L777.5 15.7 L777.5 13.7 L777.2 11.7 L777.8 9.7 L777.1 7.7 L777.2 5.7 L777.6 3.7 L777.9 1.7 Z" fill="url(#st)" opacity="0.9"/><path d="M776.2 24.7 v3.1 M775.7 30.5 v1.9 M776.6 35.7 v3.8 M775.8 41.9 v2.1 M776.3 46.1 v3.6" stroke="#ffd850" stroke-width="1.3" stroke-linecap="round" opacity="0.55"/><rect x="777.0" y="24" width="10" height="49.6" fill="url(#gl)" opacity="0.35"/><path d="M781.0 1.2 L780.9 3.2 L780.9 5.2 L780.4 7.2 L780.9 9.2 L780.5 11.2 L781.7 13.2 L780.8 15.2 L780.9 17.2 L779.9 19.2 L780.7 21.2 L780.5 23.2 L780.5 25.2 L780.9 27.2 L780.2 29.2 L780.4 31.2 L780.5 33.2 L781.3 35.2 L780.7 37.2 L781.2 39.2 L781.1 41.2 L780.7 43.2 L780.8 45.2 L781.2 47.2 L781.4 49.2 L781.2 51.2 L781.5 53.2 L780.4 55.2 L780.7 57.2 L779.0 59.2 L780.5 61.2 L781.1 63.2 L780.9 65.2 L781.4 67.2 L782.4 67.2 L782.4 65.2 L782.9 63.2 L783.4 61.2 L784.1 59.2 L783.3 57.2 L784.1 55.2 L783.0 53.2 L782.8 51.2 L783.0 49.2 L782.9 47.2 L783.3 45.2 L783.0 43.2 L782.8 41.2 L783.0 39.2 L783.8 37.2 L783.0 35.2 L784.1 33.2 L783.1 31.2 L783.2 29.2 L783.9 27.2 L784.4 25.2 L783.8 23.2 L783.0 21.2 L783.2 19.2 L782.8 17.2 L783.9 15.2 L783.1 13.2 L782.5 11.2 L782.5 9.2 L783.6 7.2 L783.0 5.2 L784.0 3.2 L782.8 1.2 Z" fill="url(#st)" opacity="0.9"/><path d="M781.6 24.5 v3.1 M782.3 30.0 v2.5 M781.7 35.0 v1.5 M782.4 39.4 v2.5 M782.4 45.1 v4.3 M781.3 51.4 v2.9" stroke="#ffd850" stroke-width="1.3" stroke-linecap="round" opacity="0.55"/><path d="M0 105 L0.0 94.4 L1.5 94.5 L3.0 99.0 L4.5 99.0 L6.0 95.5 L7.5 96.3 L9.0 96.8 L10.5 98.5 L12.0 97.2 L13.5 97.2 L15.0 97.3 L16.5 98.9 L18.0 98.1 L19.5 98.2 L21.0 96.4 L22.5 94.1 L24.0 94.5 L25.5 97.5 L27.0 98.0 L28.5 98.6 L30.0 99.0 L31.5 99.0 L33.0 97.9 L34.5 98.5 L36.0 98.3 L37.5 95.0 L39.0 97.6 L40.5 97.4 L42.0 98.7 L43.5 99.0 L45.0 98.5 L46.5 98.9 L48.0 97.7 L49.5 94.0 L51.0 96.7 L52.5 98.8 L54.0 95.0 L55.5 95.8 L57.0 96.3 L58.5 94.9 L60.0 96.1 L61.5 95.9 L63.0 98.4 L64.5 94.2 L66.0 94.4 L67.5 98.9 L69.0 96.2 L70.5 96.4 L72.0 97.9 L73.5 97.6 L75.0 97.8 L76.5 94.7 L78.0 97.7 L79.5 95.5 L81.0 98.4 L82.5 95.1 L84.0 95.0 L85.5 97.9 L87.0 97.4 L88.5 94.8 L90.0 96.4 L91.5 97.8 L93.0 98.8 L94.5 98.5 L96.0 96.6 L97.5 98.9 L99.0 94.9 L100.5 98.6 L102.0 94.8 L103.5 98.5 L105.0 94.4 L106.5 96.5 L108.0 97.7 L109.5 97.7 L111.0 96.9 L112.5 97.3 L114.0 98.5 L115.5 98.8 L117.0 97.7 L118.5 94.6 L120.0 97.1 L121.5 99.0 L123.0 95.6 L124.5 96.4 L126.0 94.9 L127.5 98.8 L129.0 96.2 L130.5 99.0 L132.0 96.9 L133.5 98.6 L135.0 98.7 L136.5 95.2 L138.0 98.9 L139.5 97.6 L141.0 95.4 L142.5 98.7 L144.0 98.8 L145.5 95.1 L147.0 98.1 L148.5 96.4 L150.0 99.0 L151.5 98.3 L153.0 98.9 L154.5 96.7 L156.0 99.0 L157.5 94.4 L159.0 99.0 L160.5 96.3 L162.0 99.0 L163.5 98.7 L165.0 95.7 L166.5 98.9 L168.0 98.8 L169.5 96.6 L171.0 98.3 L172.5 99.0 L174.0 94.1 L175.5 98.9 L177.0 99.0 L178.5 98.4 L180.0 97.1 L181.5 96.2 L183.0 98.9 L184.5 98.4 L186.0 99.0 L187.5 98.0 L189.0 96.1 L190.5 96.3 L192.0 94.9 L193.5 96.1 L195.0 95.3 L196.5 96.5 L198.0 97.9 L199.5 98.7 L201.0 96.8 L202.5 98.5 L204.0 98.9 L205.5 98.0 L207.0 95.2 L208.5 98.9 L210.0 97.3 L211.5 98.2 L213.0 97.7 L214.5 98.9 L216.0 94.4 L217.5 98.7 L219.0 97.2 L220.5 98.1 L222.0 99.0 L223.5 97.4 L225.0 98.9 L226.5 99.0 L228.0 99.0 L229.5 98.9 L231.0 99.0 L232.5 97.0 L234.0 97.7 L235.5 94.2 L237.0 94.6 L238.5 94.1 L240.0 98.7 L241.5 98.0 L243.0 98.7 L244.5 97.3 L246.0 97.1 L247.5 95.8 L249.0 96.5 L250.5 98.7 L252.0 98.1 L253.5 97.6 L255.0 99.0 L256.5 99.0 L258.0 98.2 L259.5 98.9 L261.0 96.4 L262.5 98.7 L264.0 99.0 L265.5 98.8 L267.0 98.7 L268.5 98.8 L270.0 97.6 L271.5 97.9 L273.0 98.5 L274.5 96.9 L276.0 98.8 L277.5 94.9 L279.0 94.4 L280.5 96.3 L282.0 98.1 L283.5 97.7 L285.0 97.3 L286.5 99.0 L288.0 98.1 L289.5 97.6 L291.0 98.8 L292.5 99.0 L294.0 95.8 L295.5 98.3 L297.0 97.7 L298.5 94.8 L300.0 97.1 L301.5 98.6 L303.0 94.2 L304.5 98.3 L306.0 99.0 L307.5 96.7 L309.0 98.9 L310.5 98.5 L312.0 95.5 L313.5 96.7 L315.0 99.0 L316.5 98.0 L318.0 98.2 L319.5 97.8 L321.0 98.8 L322.5 97.3 L324.0 99.0 L325.5 98.6 L327.0 98.3 L328.5 94.6 L330.0 99.0 L331.5 96.1 L333.0 98.8 L334.5 97.4 L336.0 98.2 L337.5 97.9 L339.0 96.2 L340.5 98.2 L342.0 98.9 L343.5 98.9 L345.0 99.0 L346.5 95.4 L348.0 96.9 L349.5 94.4 L351.0 96.6 L352.5 99.0 L354.0 96.8 L355.5 96.0 L357.0 96.4 L358.5 97.8 L360.0 98.4 L361.5 98.0 L363.0 95.8 L364.5 98.6 L366.0 97.6 L367.5 97.9 L369.0 94.4 L370.5 95.8 L372.0 94.7 L373.5 95.5 L375.0 98.6 L376.5 98.7 L378.0 97.8 L379.5 98.7 L381.0 98.1 L382.5 96.7 L384.0 94.8 L385.5 97.3 L387.0 95.7 L388.5 99.0 L390.0 98.4 L391.5 94.0 L393.0 98.9 L394.5 98.1 L396.0 99.0 L397.5 99.0 L399.0 95.0 L400.5 94.1 L402.0 96.9 L403.5 98.9 L405.0 98.6 L406.5 98.7 L408.0 96.8 L409.5 96.7 L411.0 98.0 L412.5 97.6 L414.0 98.9 L415.5 97.5 L417.0 94.5 L418.5 96.1 L420.0 99.0 L421.5 97.7 L423.0 96.4 L424.5 98.7 L426.0 95.0 L427.5 97.9 L429.0 96.5 L430.5 98.2 L432.0 94.0 L433.5 95.9 L435.0 97.4 L436.5 98.9 L438.0 98.0 L439.5 99.0 L441.0 97.2 L442.5 95.1 L444.0 98.8 L445.5 97.7 L447.0 97.8 L448.5 98.2 L450.0 96.5 L451.5 94.6 L453.0 96.5 L454.5 97.9 L456.0 94.4 L457.5 98.5 L459.0 96.2 L460.5 96.8 L462.0 96.1 L463.5 95.4 L465.0 98.7 L466.5 97.1 L468.0 98.2 L469.5 96.8 L471.0 94.2 L472.5 97.0 L474.0 99.0 L475.5 97.9 L477.0 96.5 L478.5 95.1 L480.0 96.9 L481.5 95.7 L483.0 99.0 L484.5 94.6 L486.0 96.3 L487.5 97.2 L489.0 94.9 L490.5 95.1 L492.0 98.9 L493.5 95.7 L495.0 96.1 L496.5 98.8 L498.0 96.2 L499.5 97.3 L501.0 98.8 L502.5 95.8 L504.0 98.9 L505.5 97.1 L507.0 98.1 L508.5 98.7 L510.0 97.4 L511.5 97.9 L513.0 98.8 L514.5 94.3 L516.0 99.0 L517.5 99.0 L519.0 97.8 L520.5 95.5 L522.0 96.8 L523.5 96.2 L525.0 97.8 L526.5 96.7 L528.0 98.4 L529.5 98.6 L531.0 97.7 L532.5 99.0 L534.0 99.0 L535.5 96.2 L537.0 98.8 L538.5 96.2 L540.0 95.9 L541.5 98.2 L543.0 96.7 L544.5 95.9 L546.0 95.3 L547.5 98.9 L549.0 98.9 L550.5 98.3 L552.0 97.9 L553.5 98.6 L555.0 99.0 L556.5 97.4 L558.0 94.3 L559.5 98.3 L561.0 97.6 L562.5 98.3 L564.0 98.0 L565.5 95.2 L567.0 98.5 L568.5 96.9 L570.0 97.8 L571.5 97.5 L573.0 94.8 L574.5 99.0 L576.0 95.6 L577.5 98.5 L579.0 96.9 L580.5 95.8 L582.0 96.9 L583.5 98.2 L585.0 95.5 L586.5 99.0 L588.0 97.0 L589.5 98.2 L591.0 97.6 L592.5 95.4 L594.0 95.8 L595.5 97.0 L597.0 98.5 L598.5 98.7 L600.0 98.0 L601.5 98.7 L603.0 98.6 L604.5 94.4 L606.0 98.9 L607.5 95.6 L609.0 98.3 L610.5 98.3 L612.0 98.5 L613.5 99.0 L615.0 98.0 L616.5 98.9 L618.0 98.0 L619.5 98.6 L621.0 95.0 L622.5 94.8 L624.0 98.0 L625.5 97.0 L627.0 94.7 L628.5 98.5 L630.0 99.0 L631.5 98.7 L633.0 98.8 L634.5 96.7 L636.0 98.3 L637.5 98.4 L639.0 95.8 L640.5 98.7 L642.0 95.7 L643.5 97.0 L645.0 98.2 L646.5 95.6 L648.0 98.4 L649.5 95.1 L651.0 94.7 L652.5 97.7 L654.0 96.6 L655.5 94.5 L657.0 96.2 L658.5 96.2 L660.0 95.2 L661.5 94.6 L663.0 96.2 L664.5 94.2 L666.0 98.6 L667.5 97.1 L669.0 96.8 L670.5 98.3 L672.0 98.2 L673.5 98.8 L675.0 94.4 L676.5 98.4 L678.0 97.9 L679.5 95.0 L681.0 98.8 L682.5 94.4 L684.0 98.9 L685.5 99.0 L687.0 98.4 L688.5 98.4 L690.0 94.8 L691.5 95.1 L693.0 96.1 L694.5 98.0 L696.0 97.5 L697.5 98.7 L699.0 95.5 L700.5 98.2 L702.0 98.6 L703.5 97.0 L705.0 98.9 L706.5 98.5 L708.0 94.7 L709.5 99.0 L711.0 98.9 L712.5 98.8 L714.0 98.7 L715.5 98.1 L717.0 98.7 L718.5 98.4 L720.0 98.7 L721.5 98.7 L723.0 97.1 L724.5 98.4 L726.0 98.3 L727.5 96.1 L729.0 99.0 L730.5 98.9 L732.0 95.4 L733.5 98.1 L735.0 96.0 L736.5 98.9 L738.0 97.6 L739.5 95.4 L741.0 98.4 L742.5 96.0 L744.0 97.1 L745.5 98.2 L747.0 94.0 L748.5 98.2 L750.0 97.9 L751.5 97.1 L753.0 98.5 L754.5 95.5 L756.0 97.2 L757.5 97.3 L759.0 97.5 L760.5 94.1 L762.0 94.1 L763.5 95.5 L765.0 98.0 L766.5 98.2 L768.0 97.6 L769.5 99.0 L771.0 98.9 L772.5 94.0 L774.0 98.9 L775.5 94.6 L777.0 96.7 L778.5 94.8 L780.0 99.0 L781.5 98.5 L783.0 95.8 L784.5 99.0 L786.0 98.9 L787.5 98.4 L789.0 98.9 L790 105 Z" fill="url(#fl)" opacity="0.5" filter="url(#bl2)"/><path d="M360 105 L360.0 105.0 L361.5 104.3 L363.0 104.1 L364.5 103.6 L366.0 103.3 L367.5 103.8 L369.0 103.6 L370.5 102.0 L372.0 103.2 L373.5 103.1 L375.0 100.5 L376.5 102.4 L378.0 100.9 L379.5 102.1 L381.0 101.4 L382.5 102.5 L384.0 101.1 L385.5 99.7 L387.0 101.3 L388.5 100.2 L390.0 100.4 L391.5 102.1 L393.0 99.6 L394.5 100.5 L396.0 101.5 L397.5 101.8 L399.0 98.3 L400.5 100.6 L402.0 99.2 L403.5 97.8 L405.0 99.0 L406.5 97.2 L408.0 100.6 L409.5 98.0 L411.0 100.2 L412.5 96.5 L414.0 97.0 L415.5 101.0 L417.0 100.9 L418.5 100.7 L420.0 95.6 L421.5 99.8 L423.0 98.6 L424.5 100.3 L426.0 99.2 L427.5 99.8 L429.0 99.9 L430.5 98.5 L432.0 98.5 L433.5 95.5 L435.0 97.6 L436.5 95.0 L438.0 95.8 L439.5 94.1 L441.0 97.5 L442.5 100.2 L444.0 95.5 L445.5 94.2 L447.0 94.9 L448.5 98.1 L450.0 96.8 L451.5 99.9 L453.0 95.5 L454.5 97.9 L456.0 99.6 L457.5 100.1 L459.0 95.1 L460.5 93.4 L462.0 100.0 L463.5 95.6 L465.0 98.9 L466.5 99.9 L468.0 99.4 L469.5 95.9 L471.0 94.7 L472.5 100.0 L474.0 97.4 L475.5 100.0 L477.0 96.4 L478.5 99.2 L480.0 94.6 L481.5 93.3 L483.0 98.2 L484.5 93.0 L486.0 99.3 L487.5 100.0 L489.0 97.5 L490.5 100.0 L492.0 99.8 L493.5 98.9 L495.0 97.5 L496.5 99.9 L498.0 100.1 L499.5 94.9 L501.0 99.4 L502.5 93.9 L504.0 94.7 L505.5 99.2 L507.0 98.8 L508.5 98.4 L510.0 97.5 L511.5 97.9 L513.0 98.2 L514.5 97.8 L516.0 94.6 L517.5 98.7 L519.0 99.2 L520.5 97.1 L522.0 100.1 L523.5 99.9 L525.0 94.5 L526.5 98.9 L528.0 98.7 L529.5 100.6 L531.0 99.6 L532.5 98.7 L534.0 100.8 L535.5 98.6 L537.0 98.5 L538.5 100.9 L540.0 98.7 L541.5 99.8 L543.0 98.5 L544.5 100.4 L546.0 98.4 L547.5 98.3 L549.0 101.2 L550.5 101.3 L552.0 99.0 L553.5 96.8 L555.0 101.2 L556.5 100.5 L558.0 99.9 L559.5 101.2 L561.0 101.1 L562.5 101.4 L564.0 101.3 L565.5 100.4 L567.0 101.7 L568.5 101.5 L570.0 99.8 L571.5 102.3 L573.0 101.2 L574.5 100.5 L576.0 102.2 L577.5 102.5 L579.0 100.6 L580.5 102.6 L582.0 102.8 L583.5 102.5 L585.0 101.8 L586.5 103.2 L588.0 103.1 L589.5 103.2 L591.0 102.3 L592.5 103.4 L594.0 102.8 L595.5 104.0 L597.0 104.2 L598.5 104.2 L600.0 105.0 L600 105 Z" fill="url(#fl2)" opacity="0.3" filter="url(#bl2)"/><path d="M600 105 L600.0 105.0 L601.5 103.7 L603.0 102.6 L604.5 102.4 L606.0 102.0 L607.5 100.9 L609.0 96.9 L610.5 97.3 L612.0 97.0 L613.5 99.9 L615.0 97.9 L616.5 99.0 L618.0 99.1 L619.5 98.9 L621.0 98.4 L622.5 91.0 L624.0 92.1 L625.5 92.0 L627.0 91.6 L628.5 97.2 L630.0 96.4 L631.5 93.0 L633.0 91.2 L634.5 88.7 L636.0 87.9 L637.5 96.3 L639.0 91.9 L640.5 90.6 L642.0 92.8 L643.5 95.3 L645.0 92.7 L646.5 95.3 L648.0 83.9 L649.5 85.2 L651.0 91.0 L652.5 93.6 L654.0 83.4 L655.5 90.1 L657.0 83.6 L658.5 84.2 L660.0 90.6 L661.5 91.7 L663.0 88.8 L664.5 91.2 L666.0 93.5 L667.5 92.4 L669.0 83.8 L670.5 93.6 L672.0 93.5 L673.5 87.5 L675.0 92.2 L676.5 88.9 L678.0 89.9 L679.5 91.4 L681.0 77.6 L682.5 92.6 L684.0 90.4 L685.5 92.5 L687.0 86.7 L688.5 91.8 L690.0 91.0 L691.5 84.1 L693.0 91.4 L694.5 88.0 L696.0 79.9 L697.5 92.8 L699.0 92.9 L700.5 92.2 L702.0 83.7 L703.5 87.0 L705.0 92.2 L706.5 91.4 L708.0 92.6 L709.5 89.9 L711.0 93.2 L712.5 85.7 L714.0 80.8 L715.5 79.2 L717.0 85.1 L718.5 79.3 L720.0 93.6 L721.5 92.4 L723.0 79.7 L724.5 84.8 L726.0 91.4 L727.5 80.9 L729.0 88.4 L730.5 84.5 L732.0 93.0 L733.5 93.8 L735.0 91.7 L736.5 94.3 L738.0 92.7 L739.5 82.3 L741.0 93.5 L742.5 95.1 L744.0 95.2 L745.5 95.0 L747.0 87.8 L748.5 94.1 L750.0 94.8 L751.5 95.9 L753.0 84.9 L754.5 94.3 L756.0 96.1 L757.5 96.7 L759.0 96.9 L760.5 96.9 L762.0 92.7 L763.5 97.4 L765.0 97.8 L766.5 95.8 L768.0 97.7 L769.5 89.9 L771.0 98.6 L772.5 96.8 L774.0 94.7 L775.5 98.4 L777.0 93.2 L778.5 98.7 L780.0 100.1 L781.5 99.9 L783.0 101.2 L784.5 100.8 L786.0 101.8 L787.5 99.8 L789.0 101.2 L790.5 103.3 L792.0 105.0 L792 105 Z" fill="url(#fl)" opacity="0.85" filter="url(#bl2)"/><path d="M630 105 L630.0 105.0 L631.5 103.7 L633.0 102.8 L634.5 101.7 L636.0 101.9 L637.5 100.7 L639.0 102.8 L640.5 101.9 L642.0 99.2 L643.5 100.6 L645.0 98.7 L646.5 101.8 L648.0 100.7 L649.5 101.3 L651.0 100.0 L652.5 99.6 L654.0 101.2 L655.5 100.8 L657.0 100.5 L658.5 96.0 L660.0 97.3 L661.5 100.5 L663.0 96.7 L664.5 100.4 L666.0 98.0 L667.5 100.3 L669.0 100.3 L670.5 95.2 L672.0 99.9 L673.5 99.8 L675.0 93.5 L676.5 94.9 L678.0 99.5 L679.5 93.6 L681.0 98.0 L682.5 96.8 L684.0 99.7 L685.5 93.8 L687.0 96.7 L688.5 93.5 L690.0 94.5 L691.5 99.4 L693.0 99.2 L694.5 99.9 L696.0 100.0 L697.5 100.2 L699.0 99.6 L700.5 97.9 L702.0 100.4 L703.5 97.5 L705.0 99.8 L706.5 100.0 L708.0 96.6 L709.5 99.4 L711.0 100.3 L712.5 99.6 L714.0 98.3 L715.5 101.1 L717.0 96.3 L718.5 101.4 L720.0 98.8 L721.5 98.4 L723.0 101.8 L724.5 99.4 L726.0 101.6 L727.5 101.1 L729.0 102.5 L730.5 102.7 L732.0 102.9 L733.5 100.9 L735.0 103.4 L736.5 102.7 L738.0 103.0 L739.5 104.1 L740 105 Z" fill="url(#fl2)" opacity="0.8" filter="url(#bl2)"/><path d="M560 105 L560.0 99.5 L561.5 99.3 L563.0 101.1 L564.5 101.7 L566.0 102.0 L567.5 100.2 L569.0 101.1 L570.5 99.7 L572.0 101.4 L573.5 99.6 L575.0 101.7 L576.5 99.4 L578.0 99.9 L579.5 101.3 L581.0 100.8 L582.5 100.1 L584.0 101.9 L585.5 100.8 L587.0 99.4 L588.5 101.7 L590.0 99.4 L591.5 100.1 L593.0 99.1 L594.5 101.5 L596.0 102.0 L597.5 99.4 L599.0 99.4 L600.5 101.2 L602.0 102.0 L603.5 101.8 L605.0 100.4 L606.5 101.7 L608.0 98.4 L609.5 100.6 L611.0 101.8 L612.5 100.3 L614.0 101.5 L615.5 98.5 L617.0 98.7 L618.5 100.9 L620.0 100.3 L621.5 100.1 L623.0 99.4 L624.5 98.2 L626.0 102.0 L627.5 101.5 L629.0 100.6 L630.5 101.6 L632.0 100.6 L633.5 102.0 L635.0 98.9 L636.5 100.9 L638.0 101.9 L639.5 100.2 L641.0 101.6 L642.5 101.8 L644.0 101.1 L645.5 101.9 L647.0 101.8 L648.5 99.0 L650.0 100.0 L651.5 102.0 L653.0 99.6 L654.5 102.0 L656.0 101.6 L657.5 98.7 L659.0 100.5 L660.5 101.6 L662.0 101.4 L663.5 101.4 L665.0 101.9 L666.5 98.0 L668.0 102.0 L669.5 101.3 L671.0 99.8 L672.5 101.4 L674.0 98.2 L675.5 101.8 L677.0 98.2 L678.5 98.8 L680.0 100.2 L681.5 98.8 L683.0 101.2 L684.5 99.2 L686.0 99.5 L687.5 100.9 L689.0 101.1 L690.5 100.0 L692.0 101.3 L693.5 102.0 L695.0 99.8 L696.5 101.7 L698.0 101.0 L699.5 99.5 L701.0 101.9 L702.5 102.0 L704.0 101.9 L705.5 100.6 L707.0 101.5 L708.5 101.7 L710.0 101.2 L711.5 98.6 L713.0 101.7 L714.5 101.3 L716.0 98.9 L717.5 100.5 L719.0 101.7 L720.5 101.1 L722.0 101.1 L723.5 101.9 L725.0 101.4 L726.5 101.6 L728.0 99.4 L729.5 101.6 L731.0 100.3 L732.5 98.2 L734.0 98.6 L735.5 101.4 L737.0 100.5 L738.5 101.6 L740.0 101.4 L741.5 101.0 L743.0 99.5 L744.5 98.5 L746.0 101.7 L747.5 102.0 L749.0 101.2 L750.5 102.0 L752.0 102.0 L753.5 99.6 L755.0 101.9 L756.5 99.9 L758.0 101.5 L759.5 98.5 L761.0 99.1 L762.5 102.0 L764.0 101.9 L765.5 98.4 L767.0 100.5 L768.5 101.3 L770.0 99.6 L771.5 99.4 L773.0 101.0 L774.5 101.1 L776.0 102.0 L777.5 101.5 L779.0 101.9 L780.5 100.4 L782.0 100.5 L783.5 101.9 L785.0 100.4 L786.5 102.0 L788.0 102.0 L789.5 100.3 L791.0 101.1 L792 105 Z" fill="url(#fl2)" opacity="0.6" filter="url(#bl2)"/><rect x="0" y="0" width="790" height="105" fill="#1a1030" opacity="0.22" filter="url(#nz)"/><filter id="nz2" x="0" y="0" width="100%" height="100%"><feTurbulence type="fractalNoise" baseFrequency="0.9 0.7" numOctaves="1" seed="9" result="t"/><feColorMatrix in="t" type="matrix" values="0 0 0 0 0  0 0 0 0 0  0 0 0 0 0  3 0 0 0 -1.5" result="n"/><feComposite in="SourceGraphic" in2="n" operator="in"/></filter><rect x="0" y="58" width="790" height="47" fill="#e05038" opacity="0.7" filter="url(#nz2)"/><rect x="0" y="95" width="790" height="10" fill="#ffe050" opacity="0.4" filter="url(#nz2)"/></svg>
<div class="a" style="left:0px;top:428px;width:1024px;height:13px;background:#f0f0f0;"></div>
<div class="a" style="left:173.7px;top:429px;width:693.3px;height:12.4px;background:#cdcdcd;"></div>
<div class="a" style="left:0px;top:441px;width:1024px;height:110px;background:#f7f7f9;"></div>
<div class="a" style="left:0px;top:496px;width:1024px;height:1px;background:#e2e2e4;"></div>
<div class="a" style="left:0px;top:550.5px;width:1024px;height:1px;background:#dcdcde;"></div>
<div class="a" style="left:0px;top:551.5px;width:1024px;height:7px;background:#f0f0f0;"></div>
<div class="a" style="left:150px;top:551.5px;width:1px;height:7px;background:#d8d8d8;"></div>
<div class="a" style="left:330px;top:452.4px;width:192.2px;height:32.8px;background:#2b2f42;border:1.5px solid #c9cbd4"></div>
<div class="t" style="left:333.81px;top:459.23px;font-size:23.6px;transform:scaleX(1);color:#fff;font-weight:normal;;-webkit-text-stroke:0">0</div>
<div class="t" style="left:350.41px;top:459.23px;font-size:23.6px;transform:scaleX(1);color:#fff;font-weight:normal;;-webkit-text-stroke:0">0</div>
<div class="t" style="left:372.14px;top:459.23px;font-size:23.6px;transform:scaleX(1);color:#fff;font-weight:normal;;-webkit-text-stroke:0">h</div>
<div class="t" style="left:393.41px;top:459.23px;font-size:23.6px;transform:scaleX(1);color:#fff;font-weight:normal;;-webkit-text-stroke:0">0</div>
<div class="t" style="left:410.01px;top:459.23px;font-size:23.6px;transform:scaleX(1);color:#fff;font-weight:normal;;-webkit-text-stroke:0">0</div>
<div class="t" style="left:431.24px;top:459.23px;font-size:23.6px;transform:scaleX(1);color:#fff;font-weight:normal;;-webkit-text-stroke:0">m</div>
<div class="t" style="left:458.71px;top:459.23px;font-size:23.6px;transform:scaleX(1);color:#fff;font-weight:normal;;-webkit-text-stroke:0">0</div>
<div class="t" style="left:474.81px;top:459.23px;font-size:23.6px;transform:scaleX(1);color:#fff;font-weight:normal;;-webkit-text-stroke:0">0</div>
<div class="t" style="left:497.09px;top:459.23px;font-size:23.6px;transform:scaleX(1);color:#fff;font-weight:normal;;-webkit-text-stroke:0">s</div>
<svg style="left:366px;top:44px" width="12" height="16" viewBox="0 0 12 16"><path d="M2.3 1.2 H9.3 M5.8 1.2 V14.6 M2.3 14.6 H9.3" stroke="#1a1a1a" fill="none" stroke-width="1.3"/></svg>
<svg style="left:385px;top:45px" width="20" height="14" viewBox="0 0 20 14"><path d="M1.5 11 H4.5 L13 3.3 H17.5" stroke="#1a1a1a" fill="none" stroke-width="1.3"/><circle cx="5.3" cy="10.6" r="2.3" fill="#1a1a1a"/><circle cx="13.2" cy="3.6" r="2.3" fill="#1a1a1a"/></svg>
<svg style="left:363px;top:66px" width="18" height="18" viewBox="0 0 18 18"><path d="M2.5 14.8 L3.3 11.6 L12.4 2.5 Q13.4 1.6 14.4 2.5 L15 3.1 Q15.9 4.1 15 5.1 L5.9 14.2 Z M11.3 3.6 L13.9 6.2" stroke="#1a1a1a" fill="none" stroke-width="1.2"/></svg>
<svg style="left:387px;top:67px" width="16" height="16" viewBox="0 0 16 16"><path d="M7.6 1.5 V14 M2.3 4.6 L12.9 10.9 M2.3 10.9 L12.9 4.6" stroke="#1a1a1a" fill="none" stroke-width="1.3"/></svg>
<svg style="left:421px;top:44px" width="16" height="16" viewBox="0 0 16 16"><circle cx="6.1" cy="6.9" r="4.4" stroke="#1a1a1a" fill="none" stroke-width="1.3"/><path d="M9.3 10.1 L13.3 13.8 M4 6.9 H8.2 M6.1 4.8 V9" stroke="#1a1a1a" fill="none" stroke-width="1.3"/></svg>
<svg style="left:444px;top:44px" width="16" height="16" viewBox="0 0 16 16"><circle cx="6" cy="6.9" r="4.4" stroke="#1a1a1a" fill="none" stroke-width="1.3"/><path d="M9.2 10.1 L13.2 13.8 M3.9 6.9 H8.1" stroke="#1a1a1a" fill="none" stroke-width="1.3"/></svg>
<svg style="left:466px;top:44px" width="16" height="16" viewBox="0 0 16 16"><circle cx="7.8" cy="6" r="4.3" stroke="#1a1a1a" fill="none" stroke-width="1.3"/><path d="M10.9 9.1 L14.3 12.3 M1.2 13.6 H9 M2.8 12 L1.2 13.6 L2.8 15.2 M7.4 12 L9 13.6 L7.4 15.2" stroke="#1a1a1a" fill="none" stroke-width="1.2"/></svg>
<svg style="left:488px;top:44px" width="16" height="16" viewBox="0 0 16 16"><circle cx="7.8" cy="6" r="4.3" stroke="#1a1a1a" fill="none" stroke-width="1.3"/><path d="M10.9 9.1 L14.3 12.3 M2 13.6 H10 M1.6 11.8 V15.4 M10.4 11.8 V15.4" stroke="#1a1a1a" fill="none" stroke-width="1.2"/></svg>
<svg style="left:511px;top:44px" width="16" height="16" viewBox="0 0 16 16"><circle cx="7.4" cy="6.9" r="4.3" stroke="#1a1a1a" fill="none" stroke-width="1.3"/><path d="M3.3 5.4 A4.3 4.3 0 1 0 7.9 12.2" stroke="#1a1a1a" fill="none" stroke-width="1.3"/><path d="M10.4 10.2 L14.4 14.2 M8.4 12.4 L11.4 15.4" stroke="#1a1a1a" fill="none" stroke-width="1.2"/></svg>
<svg style="left:422px;top:69px" width="16" height="12" viewBox="0 0 16 12"><path d="M1.3 5.6 H4 M12.6 5.6 H15" stroke="#1a1a1a" fill="none" stroke-width="1.2"/><path d="M5 2.6 V9 M6.8 1.8 V9.8 M9.2 1.8 V9.8 M11 2.6 V9" stroke="#1a1a1a" fill="none" stroke-width="1.5" stroke-linecap="round"/></svg>
<svg style="left:444px;top:69px" width="18" height="12" viewBox="0 0 18 12"><path d="M2.4 2 V10 M4.4 1.6 V10.4 M12.6 1.6 V10.4 M14.6 2 V10" stroke="#1a1a1a" fill="none" stroke-width="1.5" stroke-linecap="round"/><path d="M5 5.6 H12" stroke="#1a1a1a" fill="none" stroke-width="1.2"/></svg>
<svg style="left:489px;top:66px" width="16" height="16" viewBox="0 0 16 16"><path d="M3.6 7.2 A4.9 4.9 0 1 1 8.1 13.4" stroke="#1a1a1a" fill="none" stroke-width="1.4"/><path d="M1.2 6.8 L3.8 10.2 L6.4 6.8 Z" fill="#1a1a1a"/></svg>
<svg style="left:512px;top:66px" width="16" height="16" viewBox="0 0 16 16"><path d="M12.4 7.2 A4.9 4.9 0 1 0 7.9 13.4" stroke="#b4b4bc" fill="none" stroke-width="1.4"/><path d="M14.8 6.8 L12.2 10.2 L9.6 6.8 Z" fill="#b4b4bc"/></svg>
<svg style="left:559px;top:45px" width="22" height="17" viewBox="0 0 22 17"><path d="M2.2 5.8 H4.5 L9.1 2.7 V14.8 L4.5 11.3 H2.2 Z" stroke="#1a1a1a" fill="none" stroke-width="1.35" stroke-linejoin="round"/><path d="M11.2 7.4 A1.2 1.2 0 0 1 11.2 9.8 Z" fill="#1a1a1a"/><path d="M13.8 5.5 Q15.6 8.75 13.8 12 M16.4 2.8 Q19.8 8.75 16.4 14.7" stroke="#1a1a1a" fill="none" stroke-width="1.35"/></svg>
<svg style="left:583px;top:51px" width="8" height="6" viewBox="0 0 8 6"><path d="M0.9 1.6 H5.9 L3.4 5.1 Z" fill="#1a1a1a"/></svg>
<svg style="left:625px;top:43px" width="18" height="17" viewBox="0 0 18 17"><path d="M1.8 8.5 V15 H15.8 V8.5" stroke="#1a1a1a" fill="none" stroke-width="1.4"/><path d="M8.8 11.5 V2 M5.6 5 L8.8 1.8 L12 5" stroke="#1a1a1a" fill="none" stroke-width="1.4"/></svg>
<svg style="left:622px;top:63px" width="24" height="22" viewBox="0 0 24 22"><path d="M5 17.6 L7.2 15.4 Q5.2 12 8 8.6 L10.2 6.4 Q11.4 5.6 12.4 6.2 L14.8 3.6 Q15.8 2.8 16.4 3.8 Q16.8 4.6 16.2 5.4 L13.8 7.8 Q13.4 8.6 14.6 9.4 Q15.4 9.6 16 9 L18.2 6.8 Q19.2 6.2 19.8 7.2 Q20 8 19.4 8.6 L17 11 Q17.6 12 16.6 13 L14.4 15.2 Q10.6 17.8 7.2 15.4" fill="none" stroke="#1a1a1a" stroke-width="1.3" stroke-linejoin="round"/></svg>
<svg style="left:729px;top:42px" width="14" height="16" viewBox="0 0 14 16"><rect x="4.9" y="0.8" width="4.2" height="10.6" rx="2.1" stroke="#1a1a1a" fill="none" stroke-width="1.3"/><path d="M3 8.2 Q3 12.4 7 12.4 Q11 12.4 11 8.2 M7 12.4 V13.6" stroke="#1a1a1a" fill="none" stroke-width="1.2"/><path d="M4.2 14.4 H9.8" stroke="#1a1a1a" fill="none" stroke-width="1.8"/></svg>
<svg style="left:728px;top:70px" width="17" height="13" viewBox="0 0 17 13"><path d="M1.8 4.4 H3.8 L7 1.3 V11.7 L3.8 8.6 H1.8 Z" stroke="#1a1a1a" fill="none" stroke-width="1.2"/><path d="M9 5.4 Q9.7 6.5 9 7.6 M10.8 3.6 Q12.8 6.5 10.8 9.4 M12.8 1.8 Q15.8 6.5 12.8 11.2" stroke="#1a1a1a" fill="none" stroke-width="1.2"/></svg>
<svg style="left:11px;top:91px" width="20" height="20" viewBox="0 0 20 20"><path d="M13.18 8.61 L15.26 9.24 A5.6 5.15 0 0 1 15.26 11.56 L13.18 12.19 L13.62 14.17 A5.6 5.15 0 0 1 11.44 15.33 L9.80 13.99 L8.16 15.33 A5.6 5.15 0 0 1 5.98 14.17 L6.42 12.19 L4.34 11.56 A5.6 5.15 0 0 1 4.34 9.24 L6.42 8.61 L5.98 6.63 A5.6 5.15 0 0 1 8.16 5.47 L9.80 6.81 L11.44 5.47 A5.6 5.15 0 0 1 13.62 6.63 L13.18 8.61 Z" fill="none" stroke="#333" stroke-width="1.25" stroke-linejoin="round"/><ellipse cx="9.8" cy="10.4" rx="1.9" ry="1.5" fill="none" stroke="#333" stroke-width="1.1"/></svg>
<svg style="left:9px;top:123px" width="10" height="10" viewBox="0 0 10 10"><path d="M1.8 2.8 L8 9 M8 2.8 L1.8 9" stroke="#1a1a1a" fill="none" stroke-width="1.1"/></svg>
<svg style="left:99px;top:124px" width="12" height="8" viewBox="0 0 12 8"><path d="M1.5 6.5 L5.3 2.7 L9.1 6.5" stroke="#1a1a1a" fill="none" stroke-width="1.2"/></svg>
<div class="a" style="left:115.2px;top:128.3px;width:2px;height:2px;background:#333;border-radius:50%"></div>
<div class="a" style="left:119.2px;top:128.3px;width:2px;height:2px;background:#333;border-radius:50%"></div>
<div class="a" style="left:123.2px;top:128.3px;width:2px;height:2px;background:#333;border-radius:50%"></div>
<div class="t" style="left:12.6px;top:177.24px;font-size:9px;transform:scaleX(1);color:#222;font-weight:bold;">&#8211;</div>
<div class="t" style="left:115.2px;top:176.54px;font-size:9px;transform:scaleX(1);color:#222;font-weight:bold;">+</div>
<div class="a" style="left:13px;top:188px;width:109px;height:1.2px;background:#b9c3d3;"></div>
<div class="a" style="left:13.0px;top:186px;width:0.8px;height:2px;background:#c5cedd;"></div>
<div class="a" style="left:22.9px;top:186px;width:0.8px;height:2px;background:#c5cedd;"></div>
<div class="a" style="left:32.8px;top:186px;width:0.8px;height:2px;background:#c5cedd;"></div>
<div class="a" style="left:42.7px;top:186px;width:0.8px;height:2px;background:#c5cedd;"></div>
<div class="a" style="left:52.6px;top:186px;width:0.8px;height:2px;background:#c5cedd;"></div>
<div class="a" style="left:62.5px;top:186px;width:0.8px;height:2px;background:#c5cedd;"></div>
<div class="a" style="left:72.4px;top:186px;width:0.8px;height:2px;background:#c5cedd;"></div>
<div class="a" style="left:82.3px;top:186px;width:0.8px;height:2px;background:#c5cedd;"></div>
<div class="a" style="left:92.2px;top:186px;width:0.8px;height:2px;background:#c5cedd;"></div>
<div class="a" style="left:102.1px;top:186px;width:0.8px;height:2px;background:#c5cedd;"></div>
<div class="a" style="left:112.0px;top:186px;width:0.8px;height:2px;background:#c5cedd;"></div>
<div class="a" style="left:121.9px;top:186px;width:0.8px;height:2px;background:#c5cedd;"></div>
<svg style="left:60px;top:181px" width="14" height="14" viewBox="0 0 14 14"><circle cx="6.7" cy="7" r="5" fill="#f7f9ff" stroke="#222" stroke-width="1.3"/></svg>
<div class="t" style="left:12.6px;top:201.4px;font-size:8.5px;transform:scaleX(1);color:#222;font-weight:bold;">L</div>
<div class="t" style="left:114px;top:201.4px;font-size:8.5px;transform:scaleX(1);color:#222;font-weight:bold;">R</div>
<div class="a" style="left:13px;top:212.8px;width:109px;height:1.2px;background:#b9c3d3;"></div>
<div class="a" style="left:13.0px;top:210.8px;width:0.8px;height:2px;background:#c5cedd;"></div>
<div class="a" style="left:22.9px;top:210.8px;width:0.8px;height:2px;background:#c5cedd;"></div>
<div class="a" style="left:32.8px;top:210.8px;width:0.8px;height:2px;background:#c5cedd;"></div>
<div class="a" style="left:42.7px;top:210.8px;width:0.8px;height:2px;background:#c5cedd;"></div>
<div class="a" style="left:52.6px;top:210.8px;width:0.8px;height:2px;background:#c5cedd;"></div>
<div class="a" style="left:62.5px;top:210.8px;width:0.8px;height:2px;background:#c5cedd;"></div>
<div class="a" style="left:72.4px;top:210.8px;width:0.8px;height:2px;background:#c5cedd;"></div>
<div class="a" style="left:82.3px;top:210.8px;width:0.8px;height:2px;background:#c5cedd;"></div>
<div class="a" style="left:92.2px;top:210.8px;width:0.8px;height:2px;background:#c5cedd;"></div>
<div class="a" style="left:102.1px;top:210.8px;width:0.8px;height:2px;background:#c5cedd;"></div>
<div class="a" style="left:112.0px;top:210.8px;width:0.8px;height:2px;background:#c5cedd;"></div>
<div class="a" style="left:121.9px;top:210.8px;width:0.8px;height:2px;background:#c5cedd;"></div>
<svg style="left:60px;top:206px" width="14" height="14" viewBox="0 0 14 14"><circle cx="6.7" cy="6.8" r="5" fill="#f7f9ff" stroke="#222" stroke-width="1.3"/></svg>
<div class="a" style="left:167px;top:134.6px;width:2px;height:105px;background:#1d1f26;"></div>
<div class="a" style="left:162.5px;top:136px;width:5px;height:1px;background:#222;"></div>
<div class="a" style="left:162.5px;top:154.7px;width:5px;height:1px;background:#222;"></div>
<div class="a" style="left:162.5px;top:169px;width:5px;height:1px;background:#222;"></div>
<div class="a" style="left:162.5px;top:187.5px;width:5px;height:1px;background:#222;"></div>
<div class="a" style="left:162.5px;top:211.4px;width:5px;height:1px;background:#222;"></div>
<div class="a" style="left:162.5px;top:235px;width:5px;height:1px;background:#222;"></div>
<div class="a" style="left:165px;top:158px;width:2px;height:0.8px;background:#555;"></div>
<div class="a" style="left:165px;top:162px;width:2px;height:0.8px;background:#555;"></div>
<div class="a" style="left:165px;top:166px;width:2px;height:0.8px;background:#555;"></div>
<div class="a" style="left:165px;top:170px;width:2px;height:0.8px;background:#555;"></div>
<div class="a" style="left:165px;top:174px;width:2px;height:0.8px;background:#555;"></div>
<div class="a" style="left:165px;top:178px;width:2px;height:0.8px;background:#555;"></div>
<div class="a" style="left:165px;top:182px;width:2px;height:0.8px;background:#555;"></div>
<div class="a" style="left:165px;top:186px;width:2px;height:0.8px;background:#555;"></div>
<div class="a" style="left:165px;top:190px;width:2px;height:0.8px;background:#555;"></div>
<div class="a" style="left:165px;top:194px;width:2px;height:0.8px;background:#555;"></div>
<div class="a" style="left:165px;top:198px;width:2px;height:0.8px;background:#555;"></div>
<div class="a" style="left:165px;top:202px;width:2px;height:0.8px;background:#555;"></div>
<div class="a" style="left:165px;top:206px;width:2px;height:0.8px;background:#555;"></div>
<div class="a" style="left:165px;top:210px;width:2px;height:0.8px;background:#555;"></div>
<div class="a" style="left:165px;top:214px;width:2px;height:0.8px;background:#555;"></div>
<div class="a" style="left:165px;top:218px;width:2px;height:0.8px;background:#555;"></div>
<div class="a" style="left:165px;top:222px;width:2px;height:0.8px;background:#555;"></div>
<div class="a" style="left:165px;top:226px;width:2px;height:0.8px;background:#555;"></div>
<div class="a" style="left:165px;top:230px;width:2px;height:0.8px;background:#555;"></div>
<div class="a" style="left:165px;top:234px;width:2px;height:0.8px;background:#555;"></div>
<div class="a" style="left:3px;top:463px;width:1.6px;height:1.6px;background:#a0a0a4;border-radius:50%"></div>
<div class="a" style="left:7px;top:463px;width:1.6px;height:1.6px;background:#a0a0a4;border-radius:50%"></div>
<div class="a" style="left:3px;top:467px;width:1.6px;height:1.6px;background:#a0a0a4;border-radius:50%"></div>
<div class="a" style="left:7px;top:467px;width:1.6px;height:1.6px;background:#a0a0a4;border-radius:50%"></div>
<div class="a" style="left:3px;top:471px;width:1.6px;height:1.6px;background:#a0a0a4;border-radius:50%"></div>
<div class="a" style="left:7px;top:471px;width:1.6px;height:1.6px;background:#a0a0a4;border-radius:50%"></div>
<div class="t" style="left:15px;top:453.98px;font-size:10.4px;transform:scaleX(1.038);color:#1a1a1a;font-weight:normal;">Tempo</div>
<div class="t" style="left:70.2px;top:453.98px;font-size:10.4px;transform:scaleX(0.994);color:#1a1a1a;font-weight:normal;">Time Signature</div>
<div class="a" style="left:14.3px;top:468.5px;width:35.6px;height:19px;background:#ffffff;border:1px solid #9a9a9a"></div>
<div class="t" style="left:20px;top:473.4px;font-size:10.2px;transform:scaleX(0.881);color:#111;font-weight:normal;">120</div>
<div class="a" style="left:51.6px;top:468.5px;width:11.5px;height:19px;background:#ececec;border:1px solid #cfcfcf"></div>
<svg style="left:52px;top:469px" width="11" height="18" viewBox="0 0 11 18"><path d="M3 6.3 L5.5 3.8 L8 6.3 Z M3 11.8 L5.5 14.3 L8 11.8 Z" fill="#111"/></svg>
<div class="a" style="left:69.5px;top:468.5px;width:27.3px;height:19px;background:#ffffff;border:1px solid #9a9a9a"></div>
<div class="t" style="left:74.5px;top:473.31px;font-size:11px;transform:scaleX(0.85);color:#111;font-weight:normal;">4</div>
<div class="a" style="left:98.6px;top:468.5px;width:11.8px;height:19px;background:#ececec;border:1px solid #cfcfcf"></div>
<svg style="left:99px;top:469px" width="11" height="18" viewBox="0 0 11 18"><path d="M3 6.3 L5.5 3.8 L8 6.3 Z M3 11.8 L5.5 14.3 L8 11.8 Z" fill="#111"/></svg>
<div class="t" style="left:114.5px;top:471.77px;font-size:13px;transform:scaleX(1);color:#222;font-weight:normal;">/</div>
<div class="a" style="left:124px;top:468.1px;width:41.6px;height:19.4px;background:#e1e1e1;border:1px solid #c6c6c6"></div>
<div class="t" style="left:127.5px;top:473.31px;font-size:11px;transform:scaleX(0.85);color:#111;font-weight:normal;">4</div>
<svg style="left:153px;top:474px" width="10" height="8" viewBox="0 0 10 8"><path d="M1.2 1.8 L4.6 5.2 L8 1.8" stroke="#333" fill="none" stroke-width="1.1"/></svg>
<div class="a" style="left:176px;top:463px;width:1.6px;height:1.6px;background:#a0a0a4;border-radius:50%"></div>
<div class="a" style="left:180px;top:463px;width:1.6px;height:1.6px;background:#a0a0a4;border-radius:50%"></div>
<div class="a" style="left:176px;top:467px;width:1.6px;height:1.6px;background:#a0a0a4;border-radius:50%"></div>
<div class="a" style="left:180px;top:467px;width:1.6px;height:1.6px;background:#a0a0a4;border-radius:50%"></div>
<div class="a" style="left:176px;top:471px;width:1.6px;height:1.6px;background:#a0a0a4;border-radius:50%"></div>
<div class="a" style="left:180px;top:471px;width:1.6px;height:1.6px;background:#a0a0a4;border-radius:50%"></div>
<div class="a" style="left:188.2px;top:451.1px;width:10.5px;height:11.2px;background:#fff;border:1px solid #333"></div>
<div class="t" style="left:201px;top:453.05px;font-size:10.6px;transform:scaleX(0.973);color:#1a1a1a;font-weight:normal;">Snap</div>
<div class="a" style="left:188.3px;top:467.8px;width:125.5px;height:19.9px;background:#f4f4f4;border:1px solid #8c8c8c"></div>
<div class="a" style="left:190px;top:470px;width:106.7px;height:15.5px;background:#ebebeb;"></div>
<div class="t" style="left:193px;top:473.05px;font-size:10.6px;transform:scaleX(0.958);color:#8a8a8a;font-weight:normal;;-webkit-text-stroke:0">Milliseconds</div>
<svg style="left:299px;top:473px" width="10" height="8" viewBox="0 0 10 8"><path d="M1.2 1.8 L4.6 5.2 L8 1.8" stroke="#aaa" fill="none" stroke-width="1.1"/></svg>
<div class="a" style="left:320px;top:463px;width:1.6px;height:1.6px;background:#a0a0a4;border-radius:50%"></div>
<div class="a" style="left:324px;top:463px;width:1.6px;height:1.6px;background:#a0a0a4;border-radius:50%"></div>
<div class="a" style="left:320px;top:467px;width:1.6px;height:1.6px;background:#a0a0a4;border-radius:50%"></div>
<div class="a" style="left:324px;top:467px;width:1.6px;height:1.6px;background:#a0a0a4;border-radius:50%"></div>
<div class="a" style="left:320px;top:471px;width:1.6px;height:1.6px;background:#a0a0a4;border-radius:50%"></div>
<div class="a" style="left:324px;top:471px;width:1.6px;height:1.6px;background:#a0a0a4;border-radius:50%"></div>
<svg style="left:513.4px;top:466.1px" width="7" height="5" viewBox="0 0 7 5"><path d="M0 0 H6.8 L3.4 4.9 Z" fill="#fff"/></svg>
<div class="a" style="left:526.5px;top:441px;width:1px;height:55px;background:#e2e2e4;"></div>
<div class="a" style="left:530px;top:463px;width:1.6px;height:1.6px;background:#a0a0a4;border-radius:50%"></div>
<div class="a" style="left:534px;top:463px;width:1.6px;height:1.6px;background:#a0a0a4;border-radius:50%"></div>
<div class="a" style="left:530px;top:467px;width:1.6px;height:1.6px;background:#a0a0a4;border-radius:50%"></div>
<div class="a" style="left:534px;top:467px;width:1.6px;height:1.6px;background:#a0a0a4;border-radius:50%"></div>
<div class="a" style="left:530px;top:471px;width:1.6px;height:1.6px;background:#a0a0a4;border-radius:50%"></div>
<div class="a" style="left:534px;top:471px;width:1.6px;height:1.6px;background:#a0a0a4;border-radius:50%"></div>
<div class="t" style="left:542.6px;top:449.25px;font-size:10.6px;transform:scaleX(0.968);color:#1a1a1a;font-weight:normal;">Selection</div>
<div class="a" style="left:590.5px;top:448.2px;width:135.8px;height:17.1px;background:#2b2f42;border:1px solid #c9cbd4"></div>
<div class="t" style="left:593.87px;top:452.49px;font-size:12px;transform:scaleX(0.86);color:#f0f0f4;font-weight:normal;;-webkit-text-stroke:0">0</div>
<div class="t" style="left:602.97px;top:452.49px;font-size:12px;transform:scaleX(0.86);color:#f0f0f4;font-weight:normal;;-webkit-text-stroke:0">0</div>
<div class="t" style="left:612.92px;top:452.49px;font-size:12px;transform:scaleX(0.86);color:#f0f0f4;font-weight:normal;;-webkit-text-stroke:0">h</div>
<div class="t" style="left:623.47px;top:452.49px;font-size:12px;transform:scaleX(0.86);color:#f0f0f4;font-weight:normal;;-webkit-text-stroke:0">0</div>
<div class="t" style="left:632.47px;top:452.49px;font-size:12px;transform:scaleX(0.86);color:#f0f0f4;font-weight:normal;;-webkit-text-stroke:0">0</div>
<div class="t" style="left:642.12px;top:452.49px;font-size:12px;transform:scaleX(0.86);color:#f0f0f4;font-weight:normal;;-webkit-text-stroke:0">m</div>
<div class="t" style="left:655.77px;top:452.49px;font-size:12px;transform:scaleX(0.86);color:#f0f0f4;font-weight:normal;;-webkit-text-stroke:0">0</div>
<div class="t" style="left:664.77px;top:452.49px;font-size:12px;transform:scaleX(0.86);color:#f0f0f4;font-weight:normal;;-webkit-text-stroke:0">0</div>
<div class="t" style="left:672.17px;top:452.49px;font-size:12px;transform:scaleX(0.86);color:#f0f0f4;font-weight:normal;;-webkit-text-stroke:0">.</div>
<div class="t" style="left:676.57px;top:452.49px;font-size:12px;transform:scaleX(0.86);color:#f0f0f4;font-weight:normal;;-webkit-text-stroke:0">0</div>
<div class="t" style="left:685.67px;top:452.49px;font-size:12px;transform:scaleX(0.86);color:#f0f0f4;font-weight:normal;;-webkit-text-stroke:0">0</div>
<div class="t" style="left:695.17px;top:452.49px;font-size:12px;transform:scaleX(0.86);color:#f0f0f4;font-weight:normal;;-webkit-text-stroke:0">0</div>
<div class="t" style="left:705.09px;top:452.49px;font-size:12px;transform:scaleX(0.86);color:#f0f0f4;font-weight:normal;;-webkit-text-stroke:0">s</div>
<svg style="left:715.5px;top:454.7px" width="9" height="5" viewBox="0 0 9 5"><path d="M0 0 H8 L4 4 Z" fill="#fff"/></svg>
<div class="a" style="left:590.5px;top:469px;width:135.8px;height:17.1px;background:#2b2f42;border:1px solid #c9cbd4"></div>
<div class="t" style="left:593.87px;top:473.29px;font-size:12px;transform:scaleX(0.86);color:#f0f0f4;font-weight:normal;;-webkit-text-stroke:0">0</div>
<div class="t" style="left:602.97px;top:473.29px;font-size:12px;transform:scaleX(0.86);color:#f0f0f4;font-weight:normal;;-webkit-text-stroke:0">0</div>
<div class="t" style="left:612.92px;top:473.29px;font-size:12px;transform:scaleX(0.86);color:#f0f0f4;font-weight:normal;;-webkit-text-stroke:0">h</div>
<div class="t" style="left:623.47px;top:473.29px;font-size:12px;transform:scaleX(0.86);color:#f0f0f4;font-weight:normal;;-webkit-text-stroke:0">0</div>
<div class="t" style="left:632.47px;top:473.29px;font-size:12px;transform:scaleX(0.86);color:#f0f0f4;font-weight:normal;;-webkit-text-stroke:0">0</div>
<div class="t" style="left:642.12px;top:473.29px;font-size:12px;transform:scaleX(0.86);color:#f0f0f4;font-weight:normal;;-webkit-text-stroke:0">m</div>
<div class="t" style="left:655.68px;top:473.29px;font-size:12px;transform:scaleX(0.86);color:#f0f0f4;font-weight:normal;;-webkit-text-stroke:0">5</div>
<div class="t" style="left:664.79px;top:473.29px;font-size:12px;transform:scaleX(0.86);color:#f0f0f4;font-weight:normal;;-webkit-text-stroke:0">3</div>
<div class="t" style="left:672.17px;top:473.29px;font-size:12px;transform:scaleX(0.86);color:#f0f0f4;font-weight:normal;;-webkit-text-stroke:0">.</div>
<div class="t" style="left:676.9px;top:473.29px;font-size:12px;transform:scaleX(0.86);color:#f0f0f4;font-weight:normal;;-webkit-text-stroke:0">4</div>
<div class="t" style="left:685.58px;top:473.29px;font-size:12px;transform:scaleX(0.86);color:#f0f0f4;font-weight:normal;;-webkit-text-stroke:0">5</div>
<div class="t" style="left:695.29px;top:473.29px;font-size:12px;transform:scaleX(0.86);color:#f0f0f4;font-weight:normal;;-webkit-text-stroke:0">2</div>
<div class="t" style="left:705.09px;top:473.29px;font-size:12px;transform:scaleX(0.86);color:#f0f0f4;font-weight:normal;;-webkit-text-stroke:0">s</div>
<svg style="left:715.5px;top:475.5px" width="9" height="5" viewBox="0 0 9 5"><path d="M0 0 H8 L4 4 Z" fill="#fff"/></svg>
<div class="a" style="left:565.8px;top:467.5px;width:18.9px;height:18.7px;background:#dfdfe3;border-radius:2px"></div>
<svg style="left:565px;top:467px" width="20" height="20" viewBox="0 0 20 20"><path d="M13.49 7.65 L15.46 8.28 A5.4 4.97 0 0 1 15.46 10.52 L13.49 11.15 L13.88 13.03 A5.4 4.97 0 0 1 11.78 14.15 L10.20 12.90 L8.62 14.15 A5.4 4.97 0 0 1 6.52 13.03 L6.91 11.15 L4.94 10.52 A5.4 4.97 0 0 1 4.94 8.28 L6.91 7.65 L6.52 5.77 A5.4 4.97 0 0 1 8.62 4.65 L10.20 5.90 L11.78 4.65 A5.4 4.97 0 0 1 13.88 5.77 L13.49 7.65 Z" fill="none" stroke="#333" stroke-width="1.25" stroke-linejoin="round"/><ellipse cx="10.2" cy="9.4" rx="1.9" ry="1.5" fill="none" stroke="#333" stroke-width="1.1"/></svg>
<div class="a" style="left:733px;top:450px;width:1.6px;height:1.6px;background:#a0a0a4;border-radius:50%"></div>
<div class="a" style="left:737px;top:450px;width:1.6px;height:1.6px;background:#a0a0a4;border-radius:50%"></div>
<div class="a" style="left:733px;top:454px;width:1.6px;height:1.6px;background:#a0a0a4;border-radius:50%"></div>
<div class="a" style="left:737px;top:454px;width:1.6px;height:1.6px;background:#a0a0a4;border-radius:50%"></div>
<div class="a" style="left:733px;top:458px;width:1.6px;height:1.6px;background:#a0a0a4;border-radius:50%"></div>
<div class="a" style="left:737px;top:458px;width:1.6px;height:1.6px;background:#a0a0a4;border-radius:50%"></div>
<div class="a" style="left:741.7px;top:445.1px;width:21.6px;height:21.7px;background:#dcdde2;border-radius:3px"></div>
<svg style="left:745px;top:449px" width="15" height="14" viewBox="0 0 15 14"><path d="M1 0.8 L13.4 6.6 L1 12.4 Z" fill="#3b8a5c"/></svg>
<div class="t" style="left:768px;top:449.06px;font-size:8px;transform:scaleX(1);color:#222;font-weight:bold;">&#8211;</div>
<div class="t" style="left:876.5px;top:447.4px;font-size:8.5px;transform:scaleX(1);color:#222;font-weight:bold;">+</div>
<div class="a" style="left:769px;top:459.5px;width:114px;height:1.2px;background:#b8bcc6;"></div>
<div class="a" style="left:769.0px;top:457.3px;width:0.8px;height:2.2px;background:#c5c8d0;"></div>
<div class="a" style="left:777.1px;top:457.3px;width:0.8px;height:2.2px;background:#c5c8d0;"></div>
<div class="a" style="left:785.2px;top:457.3px;width:0.8px;height:2.2px;background:#c5c8d0;"></div>
<div class="a" style="left:793.3px;top:457.3px;width:0.8px;height:2.2px;background:#c5c8d0;"></div>
<div class="a" style="left:801.4px;top:457.3px;width:0.8px;height:2.2px;background:#c5c8d0;"></div>
<div class="a" style="left:809.5px;top:457.3px;width:0.8px;height:2.2px;background:#c5c8d0;"></div>
<div class="a" style="left:817.6px;top:457.3px;width:0.8px;height:2.2px;background:#c5c8d0;"></div>
<div class="a" style="left:825.7px;top:457.3px;width:0.8px;height:2.2px;background:#c5c8d0;"></div>
<div class="a" style="left:833.8px;top:457.3px;width:0.8px;height:2.2px;background:#c5c8d0;"></div>
<div class="a" style="left:841.9px;top:457.3px;width:0.8px;height:2.2px;background:#c5c8d0;"></div>
<div class="a" style="left:850.0px;top:457.3px;width:0.8px;height:2.2px;background:#c5c8d0;"></div>
<div class="a" style="left:858.1px;top:457.3px;width:0.8px;height:2.2px;background:#c5c8d0;"></div>
<div class="a" style="left:866.2px;top:457.3px;width:0.8px;height:2.2px;background:#c5c8d0;"></div>
<div class="a" style="left:874.3px;top:457.3px;width:0.8px;height:2.2px;background:#c5c8d0;"></div>
<svg style="left:800px;top:452px" width="14" height="14" viewBox="0 0 14 14"><circle cx="6.3" cy="6.8" r="5" fill="#fafafa" stroke="#222" stroke-width="1.3"/></svg>
<div class="a" style="left:888.4px;top:441px;width:1px;height:28px;background:#dedee0;"></div>
<div class="a" style="left:891px;top:441px;width:1px;height:28px;background:#e8e8ea;"></div>
<div class="a" style="left:725px;top:469px;width:299px;height:1px;background:#e4e4e6;"></div>
<div class="a" style="left:3px;top:517px;width:1.6px;height:1.6px;background:#a0a0a4;border-radius:50%"></div>
<div class="a" style="left:7px;top:517px;width:1.6px;height:1.6px;background:#a0a0a4;border-radius:50%"></div>
<div class="a" style="left:3px;top:521px;width:1.6px;height:1.6px;background:#a0a0a4;border-radius:50%"></div>
<div class="a" style="left:7px;top:521px;width:1.6px;height:1.6px;background:#a0a0a4;border-radius:50%"></div>
<div class="a" style="left:3px;top:525px;width:1.6px;height:1.6px;background:#a0a0a4;border-radius:50%"></div>
<div class="a" style="left:7px;top:525px;width:1.6px;height:1.6px;background:#a0a0a4;border-radius:50%"></div>
<div class="a" style="left:14.6px;top:500.3px;width:189.9px;height:18.7px;background:#e1e1e1;border:1px solid #c6c6c6"></div>
<div class="t" style="left:17.6px;top:505.63px;font-size:10.8px;transform:scaleX(0.915);color:#111;font-weight:normal;">Low and High Frequencies</div>
<svg style="left:192px;top:505px" width="12" height="9" viewBox="0 0 12 9"><path d="M2 2 L5.7 5.7 L9.4 2" stroke="#333" fill="none" stroke-width="1.1"/></svg>
<div class="a" style="left:15.2px;top:527.8px;width:92.3px;height:16.4px;background:#2b2f42;border:1px solid #c9cbd4"></div>
<div class="t" style="left:18.36px;top:531.69px;font-size:12px;transform:scaleX(0.88);color:#f0f0f4;font-weight:normal;;-webkit-text-stroke:0">0</div>
<div class="t" style="left:25.25px;top:531.69px;font-size:12px;transform:scaleX(0.88);color:#f0f0f4;font-weight:normal;;-webkit-text-stroke:0">,</div>
<div class="t" style="left:30.16px;top:531.69px;font-size:12px;transform:scaleX(0.88);color:#f0f0f4;font-weight:normal;;-webkit-text-stroke:0">0</div>
<div class="t" style="left:39.36px;top:531.69px;font-size:12px;transform:scaleX(0.88);color:#f0f0f4;font-weight:normal;;-webkit-text-stroke:0">0</div>
<div class="t" style="left:48.66px;top:531.69px;font-size:12px;transform:scaleX(0.88);color:#f0f0f4;font-weight:normal;;-webkit-text-stroke:0">0</div>
<div class="t" style="left:56.45px;top:531.69px;font-size:12px;transform:scaleX(0.88);color:#f0f0f4;font-weight:normal;;-webkit-text-stroke:0">.</div>
<div class="t" style="left:60.36px;top:531.69px;font-size:12px;transform:scaleX(0.88);color:#f0f0f4;font-weight:normal;;-webkit-text-stroke:0">0</div>
<div class="t" style="left:69.66px;top:531.69px;font-size:12px;transform:scaleX(0.88);color:#f0f0f4;font-weight:normal;;-webkit-text-stroke:0">0</div>
<div class="t" style="left:79.06px;top:531.69px;font-size:12px;transform:scaleX(0.88);color:#f0f0f4;font-weight:normal;;-webkit-text-stroke:0">H</div>
<div class="t" style="left:86.99px;top:531.69px;font-size:12px;transform:scaleX(0.88);color:#f0f0f4;font-weight:normal;;-webkit-text-stroke:0">z</div>
<svg style="left:97px;top:534.7px" width="8" height="5" viewBox="0 0 8 5"><path d="M0 0 H7.5 L3.75 4.3 Z" fill="#fff"/></svg>
<div class="a" style="left:112.4px;top:527.4px;width:92.3px;height:17.6px;background:#2b2f42;border:1px solid #c9cbd4"></div>
<div class="a" style="left:112.9px;top:528.6px;width:77.6px;height:15.2px;background:#2b2f42;border:1.2px solid #f0f0f4"></div>
<div class="a" style="left:126.6px;top:529.8px;width:8.7px;height:12.8px;background:#5b74d8;"></div>
<div class="a" style="left:116.8px;top:537.8px;width:3px;height:1.2px;background:#e0e0e8;"></div>
<div class="a" style="left:128.5px;top:537.8px;width:3px;height:1.2px;background:#e0e0e8;"></div>
<div class="a" style="left:137.8px;top:537.8px;width:3px;height:1.2px;background:#e0e0e8;"></div>
<div class="a" style="left:146.6px;top:537.8px;width:3px;height:1.2px;background:#e0e0e8;"></div>
<div class="a" style="left:158.3px;top:537.8px;width:3px;height:1.2px;background:#e0e0e8;"></div>
<div class="a" style="left:167.6px;top:537.8px;width:3px;height:1.2px;background:#e0e0e8;"></div>
<div class="a" style="left:124.6px;top:540.4px;width:1.2px;height:1.2px;background:#a0a0b0;"></div>
<div class="a" style="left:154.9px;top:540.4px;width:1.2px;height:1.2px;background:#a0a0b0;"></div>
<div class="t" style="left:176.96px;top:531.69px;font-size:12px;transform:scaleX(0.88);color:#f0f0f4;font-weight:normal;;-webkit-text-stroke:0">H</div>
<div class="t" style="left:184.79px;top:531.69px;font-size:12px;transform:scaleX(0.88);color:#f0f0f4;font-weight:normal;;-webkit-text-stroke:0">z</div>
<svg style="left:195px;top:534.3px" width="8" height="5" viewBox="0 0 8 5"><path d="M0 0 H7.5 L3.75 4.3 Z" fill="#fff"/></svg>
<svg style="left:163px;top:431px" width="8" height="9" viewBox="0 0 8 9"><path d="M5.6 1 L2.2 4.5 L5.6 8" stroke="#222" fill="none" stroke-width="1.4"/></svg>
<div class="t" style="left:12.5px;top:555.81px;font-size:11px;transform:scaleX(0.84);color:#1a1a1a;font-weight:normal;">Stopped.</div>
<div class="a" style="left:6px;top:551.5px;width:1px;height:7px;background:#e0e0e0;"></div>
<div class="a" style="left:922px;top:551.5px;width:1px;height:7px;background:#dcdcdc;"></div>
</body></html>
